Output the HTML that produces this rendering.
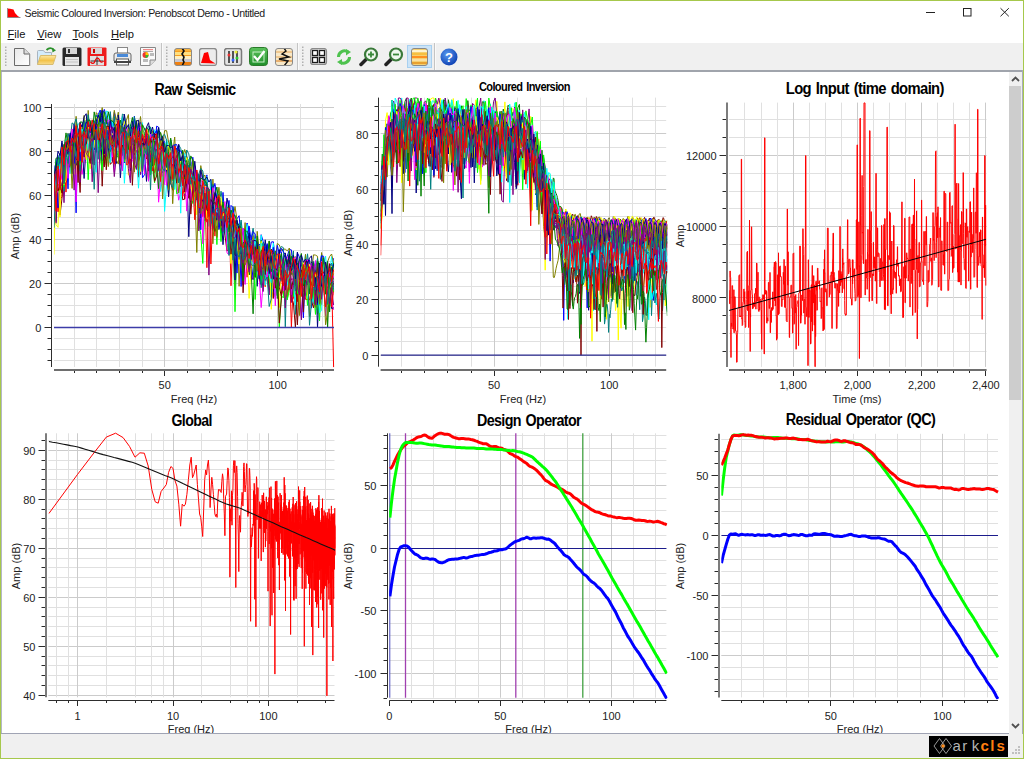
<!DOCTYPE html>
<html><head><meta charset="utf-8"><style>
html,body{margin:0;padding:0;width:1024px;height:759px;overflow:hidden;background:#fff;font-family:"Liberation Sans", sans-serif;}
#win{position:absolute;left:0;top:0;width:1024px;height:759px;}
</style></head><body><div id="win">
<svg width="1024" height="759" viewBox="0 0 1024 759" style="position:absolute;left:0;top:0" font-family='"Liberation Sans", sans-serif' font-size="11" fill="#222"><defs><clipPath id="clc1"><rect x="54" y="102" width="281" height="267"/></clipPath><clipPath id="clc2"><rect x="380.6" y="95.6" width="286.6" height="273.1"/></clipPath><clipPath id="clc3"><rect x="729" y="100.6" width="258.6" height="268.29999999999995"/></clipPath><clipPath id="clc4"><rect x="48.3" y="431.3" width="287.2" height="267.99999999999994"/></clipPath><clipPath id="clc5"><rect x="389.2" y="431.3" width="278.2" height="268.40000000000003"/></clipPath><clipPath id="clc6"><rect x="721.3" y="431.8" width="277.70000000000005" height="267.59999999999997"/></clipPath></defs><line x1="54" y1="360.5" x2="334" y2="360.5" stroke="#e0e0e0" stroke-width="1"/>
<line x1="54" y1="349.5" x2="334" y2="349.5" stroke="#e0e0e0" stroke-width="1"/>
<line x1="54" y1="338.5" x2="334" y2="338.5" stroke="#e0e0e0" stroke-width="1"/>
<line x1="54" y1="327.5" x2="334" y2="327.5" stroke="#cbcbcb" stroke-width="1"/>
<line x1="54" y1="316.5" x2="334" y2="316.5" stroke="#e0e0e0" stroke-width="1"/>
<line x1="54" y1="305.5" x2="334" y2="305.5" stroke="#e0e0e0" stroke-width="1"/>
<line x1="54" y1="294.5" x2="334" y2="294.5" stroke="#e0e0e0" stroke-width="1"/>
<line x1="54" y1="283.5" x2="334" y2="283.5" stroke="#cbcbcb" stroke-width="1"/>
<line x1="54" y1="272.5" x2="334" y2="272.5" stroke="#e0e0e0" stroke-width="1"/>
<line x1="54" y1="261.5" x2="334" y2="261.5" stroke="#e0e0e0" stroke-width="1"/>
<line x1="54" y1="250.5" x2="334" y2="250.5" stroke="#e0e0e0" stroke-width="1"/>
<line x1="54" y1="239.5" x2="334" y2="239.5" stroke="#cbcbcb" stroke-width="1"/>
<line x1="54" y1="228.5" x2="334" y2="228.5" stroke="#e0e0e0" stroke-width="1"/>
<line x1="54" y1="217.5" x2="334" y2="217.5" stroke="#e0e0e0" stroke-width="1"/>
<line x1="54" y1="206.5" x2="334" y2="206.5" stroke="#e0e0e0" stroke-width="1"/>
<line x1="54" y1="195.5" x2="334" y2="195.5" stroke="#cbcbcb" stroke-width="1"/>
<line x1="54" y1="184.5" x2="334" y2="184.5" stroke="#e0e0e0" stroke-width="1"/>
<line x1="54" y1="173.5" x2="334" y2="173.5" stroke="#e0e0e0" stroke-width="1"/>
<line x1="54" y1="162.5" x2="334" y2="162.5" stroke="#e0e0e0" stroke-width="1"/>
<line x1="54" y1="151.5" x2="334" y2="151.5" stroke="#cbcbcb" stroke-width="1"/>
<line x1="54" y1="140.5" x2="334" y2="140.5" stroke="#e0e0e0" stroke-width="1"/>
<line x1="54" y1="129.5" x2="334" y2="129.5" stroke="#e0e0e0" stroke-width="1"/>
<line x1="54" y1="118.5" x2="334" y2="118.5" stroke="#e0e0e0" stroke-width="1"/>
<line x1="54" y1="107.5" x2="334" y2="107.5" stroke="#cbcbcb" stroke-width="1"/>
<line x1="74.5" y1="104" x2="74.5" y2="367" stroke="#e0e0e0" stroke-width="1"/>
<line x1="96.5" y1="104" x2="96.5" y2="367" stroke="#e0e0e0" stroke-width="1"/>
<line x1="119.5" y1="104" x2="119.5" y2="367" stroke="#e0e0e0" stroke-width="1"/>
<line x1="142.5" y1="104" x2="142.5" y2="367" stroke="#e0e0e0" stroke-width="1"/>
<line x1="164.5" y1="104" x2="164.5" y2="367" stroke="#cbcbcb" stroke-width="1"/>
<line x1="187.5" y1="104" x2="187.5" y2="367" stroke="#e0e0e0" stroke-width="1"/>
<line x1="209.5" y1="104" x2="209.5" y2="367" stroke="#e0e0e0" stroke-width="1"/>
<line x1="232.5" y1="104" x2="232.5" y2="367" stroke="#e0e0e0" stroke-width="1"/>
<line x1="255.5" y1="104" x2="255.5" y2="367" stroke="#e0e0e0" stroke-width="1"/>
<line x1="277.5" y1="104" x2="277.5" y2="367" stroke="#cbcbcb" stroke-width="1"/>
<line x1="300.5" y1="104" x2="300.5" y2="367" stroke="#e0e0e0" stroke-width="1"/>
<line x1="322.5" y1="104" x2="322.5" y2="367" stroke="#e0e0e0" stroke-width="1"/>
<line x1="51.5" y1="104" x2="51.5" y2="367" stroke="#2e2e2e" stroke-width="1"/>
<line x1="47.50" y1="360.5" x2="51" y2="360.5" stroke="#2a2a2a" stroke-width="1"/>
<line x1="47.50" y1="349.5" x2="51" y2="349.5" stroke="#2a2a2a" stroke-width="1"/>
<line x1="47.50" y1="338.5" x2="51" y2="338.5" stroke="#2a2a2a" stroke-width="1"/>
<line x1="44.50" y1="327.5" x2="51" y2="327.5" stroke="#2a2a2a" stroke-width="1"/>
<line x1="47.50" y1="316.5" x2="51" y2="316.5" stroke="#2a2a2a" stroke-width="1"/>
<line x1="47.50" y1="305.5" x2="51" y2="305.5" stroke="#2a2a2a" stroke-width="1"/>
<line x1="47.50" y1="294.5" x2="51" y2="294.5" stroke="#2a2a2a" stroke-width="1"/>
<line x1="44.50" y1="283.5" x2="51" y2="283.5" stroke="#2a2a2a" stroke-width="1"/>
<line x1="47.50" y1="272.5" x2="51" y2="272.5" stroke="#2a2a2a" stroke-width="1"/>
<line x1="47.50" y1="261.5" x2="51" y2="261.5" stroke="#2a2a2a" stroke-width="1"/>
<line x1="47.50" y1="250.5" x2="51" y2="250.5" stroke="#2a2a2a" stroke-width="1"/>
<line x1="44.50" y1="239.5" x2="51" y2="239.5" stroke="#2a2a2a" stroke-width="1"/>
<line x1="47.50" y1="228.5" x2="51" y2="228.5" stroke="#2a2a2a" stroke-width="1"/>
<line x1="47.50" y1="217.5" x2="51" y2="217.5" stroke="#2a2a2a" stroke-width="1"/>
<line x1="47.50" y1="206.5" x2="51" y2="206.5" stroke="#2a2a2a" stroke-width="1"/>
<line x1="44.50" y1="195.5" x2="51" y2="195.5" stroke="#2a2a2a" stroke-width="1"/>
<line x1="47.50" y1="184.5" x2="51" y2="184.5" stroke="#2a2a2a" stroke-width="1"/>
<line x1="47.50" y1="173.5" x2="51" y2="173.5" stroke="#2a2a2a" stroke-width="1"/>
<line x1="47.50" y1="162.5" x2="51" y2="162.5" stroke="#2a2a2a" stroke-width="1"/>
<line x1="44.50" y1="151.5" x2="51" y2="151.5" stroke="#2a2a2a" stroke-width="1"/>
<line x1="47.50" y1="140.5" x2="51" y2="140.5" stroke="#2a2a2a" stroke-width="1"/>
<line x1="47.50" y1="129.5" x2="51" y2="129.5" stroke="#2a2a2a" stroke-width="1"/>
<line x1="47.50" y1="118.5" x2="51" y2="118.5" stroke="#2a2a2a" stroke-width="1"/>
<line x1="44.50" y1="107.5" x2="51" y2="107.5" stroke="#2a2a2a" stroke-width="1"/>
<line x1="54" y1="370" x2="334" y2="370" stroke="#6e6e6e" stroke-width="2"/>
<line x1="74.5" y1="371" x2="74.5" y2="373" stroke="#2a2a2a" stroke-width="1"/>
<line x1="96.5" y1="371" x2="96.5" y2="373" stroke="#2a2a2a" stroke-width="1"/>
<line x1="119.5" y1="371" x2="119.5" y2="373" stroke="#2a2a2a" stroke-width="1"/>
<line x1="142.5" y1="371" x2="142.5" y2="373" stroke="#2a2a2a" stroke-width="1"/>
<line x1="164.5" y1="371" x2="164.5" y2="376" stroke="#2a2a2a" stroke-width="1"/>
<line x1="187.5" y1="371" x2="187.5" y2="373" stroke="#2a2a2a" stroke-width="1"/>
<line x1="209.5" y1="371" x2="209.5" y2="373" stroke="#2a2a2a" stroke-width="1"/>
<line x1="232.5" y1="371" x2="232.5" y2="373" stroke="#2a2a2a" stroke-width="1"/>
<line x1="255.5" y1="371" x2="255.5" y2="373" stroke="#2a2a2a" stroke-width="1"/>
<line x1="277.5" y1="371" x2="277.5" y2="376" stroke="#2a2a2a" stroke-width="1"/>
<line x1="300.5" y1="371" x2="300.5" y2="373" stroke="#2a2a2a" stroke-width="1"/>
<line x1="322.5" y1="371" x2="322.5" y2="373" stroke="#2a2a2a" stroke-width="1"/>
<text x="41.3" y="332.10" text-anchor="end">0</text>
<text x="41.3" y="288.12" text-anchor="end">20</text>
<text x="41.3" y="244.14" text-anchor="end">40</text>
<text x="41.3" y="200.16" text-anchor="end">60</text>
<text x="41.3" y="156.18" text-anchor="end">80</text>
<text x="41.3" y="112.20" text-anchor="end">100</text>
<text x="164.65" y="389" text-anchor="middle">50</text>
<text x="277.60" y="389" text-anchor="middle">100</text>
<text x="194" y="402.5" text-anchor="middle">Freq (Hz)</text>
<text transform="translate(18.7,236) rotate(-90)" text-anchor="middle">Amp (dB)</text>
<text x="154.6" y="95" font-weight="bold" fill="#000" font-size="16" letter-spacing="-0.7" word-spacing="1.5" textLength="81" lengthAdjust="spacingAndGlyphs">Raw Seismic</text><line x1="380.6" y1="355.5" x2="666.2" y2="355.5" stroke="#cbcbcb" stroke-width="1"/>
<line x1="380.6" y1="341.5" x2="666.2" y2="341.5" stroke="#e0e0e0" stroke-width="1"/>
<line x1="380.6" y1="327.5" x2="666.2" y2="327.5" stroke="#e0e0e0" stroke-width="1"/>
<line x1="380.6" y1="313.5" x2="666.2" y2="313.5" stroke="#e0e0e0" stroke-width="1"/>
<line x1="380.6" y1="299.5" x2="666.2" y2="299.5" stroke="#cbcbcb" stroke-width="1"/>
<line x1="380.6" y1="286.5" x2="666.2" y2="286.5" stroke="#e0e0e0" stroke-width="1"/>
<line x1="380.6" y1="272.5" x2="666.2" y2="272.5" stroke="#e0e0e0" stroke-width="1"/>
<line x1="380.6" y1="258.5" x2="666.2" y2="258.5" stroke="#e0e0e0" stroke-width="1"/>
<line x1="380.6" y1="244.5" x2="666.2" y2="244.5" stroke="#cbcbcb" stroke-width="1"/>
<line x1="380.6" y1="230.5" x2="666.2" y2="230.5" stroke="#e0e0e0" stroke-width="1"/>
<line x1="380.6" y1="216.5" x2="666.2" y2="216.5" stroke="#e0e0e0" stroke-width="1"/>
<line x1="380.6" y1="203.5" x2="666.2" y2="203.5" stroke="#e0e0e0" stroke-width="1"/>
<line x1="380.6" y1="189.5" x2="666.2" y2="189.5" stroke="#cbcbcb" stroke-width="1"/>
<line x1="380.6" y1="175.5" x2="666.2" y2="175.5" stroke="#e0e0e0" stroke-width="1"/>
<line x1="380.6" y1="161.5" x2="666.2" y2="161.5" stroke="#e0e0e0" stroke-width="1"/>
<line x1="380.6" y1="147.5" x2="666.2" y2="147.5" stroke="#e0e0e0" stroke-width="1"/>
<line x1="380.6" y1="133.5" x2="666.2" y2="133.5" stroke="#cbcbcb" stroke-width="1"/>
<line x1="380.6" y1="120.5" x2="666.2" y2="120.5" stroke="#e0e0e0" stroke-width="1"/>
<line x1="380.6" y1="106.5" x2="666.2" y2="106.5" stroke="#e0e0e0" stroke-width="1"/>
<line x1="401.5" y1="97.6" x2="401.5" y2="366.7" stroke="#e0e0e0" stroke-width="1"/>
<line x1="424.5" y1="97.6" x2="424.5" y2="366.7" stroke="#e0e0e0" stroke-width="1"/>
<line x1="447.5" y1="97.6" x2="447.5" y2="366.7" stroke="#e0e0e0" stroke-width="1"/>
<line x1="471.5" y1="97.6" x2="471.5" y2="366.7" stroke="#e0e0e0" stroke-width="1"/>
<line x1="494.5" y1="97.6" x2="494.5" y2="366.7" stroke="#cbcbcb" stroke-width="1"/>
<line x1="517.5" y1="97.6" x2="517.5" y2="366.7" stroke="#e0e0e0" stroke-width="1"/>
<line x1="540.5" y1="97.6" x2="540.5" y2="366.7" stroke="#e0e0e0" stroke-width="1"/>
<line x1="563.5" y1="97.6" x2="563.5" y2="366.7" stroke="#e0e0e0" stroke-width="1"/>
<line x1="586.5" y1="97.6" x2="586.5" y2="366.7" stroke="#e0e0e0" stroke-width="1"/>
<line x1="609.5" y1="97.6" x2="609.5" y2="366.7" stroke="#cbcbcb" stroke-width="1"/>
<line x1="632.5" y1="97.6" x2="632.5" y2="366.7" stroke="#e0e0e0" stroke-width="1"/>
<line x1="655.5" y1="97.6" x2="655.5" y2="366.7" stroke="#e0e0e0" stroke-width="1"/>
<line x1="378.5" y1="97.6" x2="378.5" y2="366.7" stroke="#2e2e2e" stroke-width="1"/>
<line x1="371.50" y1="355.5" x2="378" y2="355.5" stroke="#2a2a2a" stroke-width="1"/>
<line x1="374.50" y1="341.5" x2="378" y2="341.5" stroke="#2a2a2a" stroke-width="1"/>
<line x1="374.50" y1="327.5" x2="378" y2="327.5" stroke="#2a2a2a" stroke-width="1"/>
<line x1="374.50" y1="313.5" x2="378" y2="313.5" stroke="#2a2a2a" stroke-width="1"/>
<line x1="371.50" y1="299.5" x2="378" y2="299.5" stroke="#2a2a2a" stroke-width="1"/>
<line x1="374.50" y1="286.5" x2="378" y2="286.5" stroke="#2a2a2a" stroke-width="1"/>
<line x1="374.50" y1="272.5" x2="378" y2="272.5" stroke="#2a2a2a" stroke-width="1"/>
<line x1="374.50" y1="258.5" x2="378" y2="258.5" stroke="#2a2a2a" stroke-width="1"/>
<line x1="371.50" y1="244.5" x2="378" y2="244.5" stroke="#2a2a2a" stroke-width="1"/>
<line x1="374.50" y1="230.5" x2="378" y2="230.5" stroke="#2a2a2a" stroke-width="1"/>
<line x1="374.50" y1="216.5" x2="378" y2="216.5" stroke="#2a2a2a" stroke-width="1"/>
<line x1="374.50" y1="203.5" x2="378" y2="203.5" stroke="#2a2a2a" stroke-width="1"/>
<line x1="371.50" y1="189.5" x2="378" y2="189.5" stroke="#2a2a2a" stroke-width="1"/>
<line x1="374.50" y1="175.5" x2="378" y2="175.5" stroke="#2a2a2a" stroke-width="1"/>
<line x1="374.50" y1="161.5" x2="378" y2="161.5" stroke="#2a2a2a" stroke-width="1"/>
<line x1="374.50" y1="147.5" x2="378" y2="147.5" stroke="#2a2a2a" stroke-width="1"/>
<line x1="371.50" y1="133.5" x2="378" y2="133.5" stroke="#2a2a2a" stroke-width="1"/>
<line x1="374.50" y1="120.5" x2="378" y2="120.5" stroke="#2a2a2a" stroke-width="1"/>
<line x1="374.50" y1="106.5" x2="378" y2="106.5" stroke="#2a2a2a" stroke-width="1"/>
<line x1="380.6" y1="370" x2="666.2" y2="370" stroke="#6e6e6e" stroke-width="2"/>
<line x1="401.5" y1="371" x2="401.5" y2="373" stroke="#2a2a2a" stroke-width="1"/>
<line x1="424.5" y1="371" x2="424.5" y2="373" stroke="#2a2a2a" stroke-width="1"/>
<line x1="447.5" y1="371" x2="447.5" y2="373" stroke="#2a2a2a" stroke-width="1"/>
<line x1="471.5" y1="371" x2="471.5" y2="373" stroke="#2a2a2a" stroke-width="1"/>
<line x1="494.5" y1="371" x2="494.5" y2="376" stroke="#2a2a2a" stroke-width="1"/>
<line x1="517.5" y1="371" x2="517.5" y2="373" stroke="#2a2a2a" stroke-width="1"/>
<line x1="540.5" y1="371" x2="540.5" y2="373" stroke="#2a2a2a" stroke-width="1"/>
<line x1="563.5" y1="371" x2="563.5" y2="373" stroke="#2a2a2a" stroke-width="1"/>
<line x1="586.5" y1="371" x2="586.5" y2="373" stroke="#2a2a2a" stroke-width="1"/>
<line x1="609.5" y1="371" x2="609.5" y2="376" stroke="#2a2a2a" stroke-width="1"/>
<line x1="632.5" y1="371" x2="632.5" y2="373" stroke="#2a2a2a" stroke-width="1"/>
<line x1="655.5" y1="371" x2="655.5" y2="373" stroke="#2a2a2a" stroke-width="1"/>
<text x="368.3" y="359.80" text-anchor="end">0</text>
<text x="368.3" y="304.48" text-anchor="end">20</text>
<text x="368.3" y="249.16" text-anchor="end">40</text>
<text x="368.3" y="193.84" text-anchor="end">60</text>
<text x="368.3" y="138.52" text-anchor="end">80</text>
<text x="494.08" y="389" text-anchor="middle">50</text>
<text x="609.30" y="389" text-anchor="middle">100</text>
<text x="523" y="402.5" text-anchor="middle">Freq (Hz)</text>
<text transform="translate(352.2,233) rotate(-90)" text-anchor="middle">Amp (dB)</text>
<text x="478.9" y="91.1" font-weight="bold" fill="#000" font-size="13" letter-spacing="-0.7" word-spacing="1.5" textLength="91" lengthAdjust="spacingAndGlyphs">Coloured Inversion</text><line x1="729" y1="351.5" x2="986.6" y2="351.5" stroke="#e0e0e0" stroke-width="1"/>
<line x1="729" y1="333.5" x2="986.6" y2="333.5" stroke="#e0e0e0" stroke-width="1"/>
<line x1="729" y1="315.5" x2="986.6" y2="315.5" stroke="#e0e0e0" stroke-width="1"/>
<line x1="729" y1="297.5" x2="986.6" y2="297.5" stroke="#cbcbcb" stroke-width="1"/>
<line x1="729" y1="280.5" x2="986.6" y2="280.5" stroke="#e0e0e0" stroke-width="1"/>
<line x1="729" y1="262.5" x2="986.6" y2="262.5" stroke="#e0e0e0" stroke-width="1"/>
<line x1="729" y1="244.5" x2="986.6" y2="244.5" stroke="#e0e0e0" stroke-width="1"/>
<line x1="729" y1="226.5" x2="986.6" y2="226.5" stroke="#cbcbcb" stroke-width="1"/>
<line x1="729" y1="208.5" x2="986.6" y2="208.5" stroke="#e0e0e0" stroke-width="1"/>
<line x1="729" y1="191.5" x2="986.6" y2="191.5" stroke="#e0e0e0" stroke-width="1"/>
<line x1="729" y1="173.5" x2="986.6" y2="173.5" stroke="#e0e0e0" stroke-width="1"/>
<line x1="729" y1="155.5" x2="986.6" y2="155.5" stroke="#cbcbcb" stroke-width="1"/>
<line x1="729" y1="137.5" x2="986.6" y2="137.5" stroke="#e0e0e0" stroke-width="1"/>
<line x1="729" y1="119.5" x2="986.6" y2="119.5" stroke="#e0e0e0" stroke-width="1"/>
<line x1="744.5" y1="102.6" x2="744.5" y2="366.9" stroke="#e0e0e0" stroke-width="1"/>
<line x1="761.5" y1="102.6" x2="761.5" y2="366.9" stroke="#e0e0e0" stroke-width="1"/>
<line x1="777.5" y1="102.6" x2="777.5" y2="366.9" stroke="#e0e0e0" stroke-width="1"/>
<line x1="793.5" y1="102.6" x2="793.5" y2="366.9" stroke="#cbcbcb" stroke-width="1"/>
<line x1="809.5" y1="102.6" x2="809.5" y2="366.9" stroke="#e0e0e0" stroke-width="1"/>
<line x1="825.5" y1="102.6" x2="825.5" y2="366.9" stroke="#e0e0e0" stroke-width="1"/>
<line x1="841.5" y1="102.6" x2="841.5" y2="366.9" stroke="#e0e0e0" stroke-width="1"/>
<line x1="857.5" y1="102.6" x2="857.5" y2="366.9" stroke="#cbcbcb" stroke-width="1"/>
<line x1="873.5" y1="102.6" x2="873.5" y2="366.9" stroke="#e0e0e0" stroke-width="1"/>
<line x1="889.5" y1="102.6" x2="889.5" y2="366.9" stroke="#e0e0e0" stroke-width="1"/>
<line x1="905.5" y1="102.6" x2="905.5" y2="366.9" stroke="#e0e0e0" stroke-width="1"/>
<line x1="921.5" y1="102.6" x2="921.5" y2="366.9" stroke="#cbcbcb" stroke-width="1"/>
<line x1="937.5" y1="102.6" x2="937.5" y2="366.9" stroke="#e0e0e0" stroke-width="1"/>
<line x1="953.5" y1="102.6" x2="953.5" y2="366.9" stroke="#e0e0e0" stroke-width="1"/>
<line x1="969.5" y1="102.6" x2="969.5" y2="366.9" stroke="#e0e0e0" stroke-width="1"/>
<line x1="985.5" y1="102.6" x2="985.5" y2="366.9" stroke="#cbcbcb" stroke-width="1"/>
<line x1="727" y1="102.6" x2="727" y2="366.9" stroke="#7c7c7c" stroke-width="2"/>
<line x1="722.50" y1="351.5" x2="726" y2="351.5" stroke="#2a2a2a" stroke-width="1"/>
<line x1="722.50" y1="333.5" x2="726" y2="333.5" stroke="#2a2a2a" stroke-width="1"/>
<line x1="722.50" y1="315.5" x2="726" y2="315.5" stroke="#2a2a2a" stroke-width="1"/>
<line x1="719.50" y1="297.5" x2="726" y2="297.5" stroke="#2a2a2a" stroke-width="1"/>
<line x1="722.50" y1="280.5" x2="726" y2="280.5" stroke="#2a2a2a" stroke-width="1"/>
<line x1="722.50" y1="262.5" x2="726" y2="262.5" stroke="#2a2a2a" stroke-width="1"/>
<line x1="722.50" y1="244.5" x2="726" y2="244.5" stroke="#2a2a2a" stroke-width="1"/>
<line x1="719.50" y1="226.5" x2="726" y2="226.5" stroke="#2a2a2a" stroke-width="1"/>
<line x1="722.50" y1="208.5" x2="726" y2="208.5" stroke="#2a2a2a" stroke-width="1"/>
<line x1="722.50" y1="191.5" x2="726" y2="191.5" stroke="#2a2a2a" stroke-width="1"/>
<line x1="722.50" y1="173.5" x2="726" y2="173.5" stroke="#2a2a2a" stroke-width="1"/>
<line x1="719.50" y1="155.5" x2="726" y2="155.5" stroke="#2a2a2a" stroke-width="1"/>
<line x1="722.50" y1="137.5" x2="726" y2="137.5" stroke="#2a2a2a" stroke-width="1"/>
<line x1="722.50" y1="119.5" x2="726" y2="119.5" stroke="#2a2a2a" stroke-width="1"/>
<line x1="729" y1="370" x2="986.6" y2="370" stroke="#6e6e6e" stroke-width="2"/>
<line x1="744.5" y1="371" x2="744.5" y2="373" stroke="#2a2a2a" stroke-width="1"/>
<line x1="761.5" y1="371" x2="761.5" y2="373" stroke="#2a2a2a" stroke-width="1"/>
<line x1="777.5" y1="371" x2="777.5" y2="373" stroke="#2a2a2a" stroke-width="1"/>
<line x1="793.5" y1="371" x2="793.5" y2="376" stroke="#2a2a2a" stroke-width="1"/>
<line x1="809.5" y1="371" x2="809.5" y2="373" stroke="#2a2a2a" stroke-width="1"/>
<line x1="825.5" y1="371" x2="825.5" y2="373" stroke="#2a2a2a" stroke-width="1"/>
<line x1="841.5" y1="371" x2="841.5" y2="373" stroke="#2a2a2a" stroke-width="1"/>
<line x1="857.5" y1="371" x2="857.5" y2="376" stroke="#2a2a2a" stroke-width="1"/>
<line x1="873.5" y1="371" x2="873.5" y2="373" stroke="#2a2a2a" stroke-width="1"/>
<line x1="889.5" y1="371" x2="889.5" y2="373" stroke="#2a2a2a" stroke-width="1"/>
<line x1="905.5" y1="371" x2="905.5" y2="373" stroke="#2a2a2a" stroke-width="1"/>
<line x1="921.5" y1="371" x2="921.5" y2="376" stroke="#2a2a2a" stroke-width="1"/>
<line x1="937.5" y1="371" x2="937.5" y2="373" stroke="#2a2a2a" stroke-width="1"/>
<line x1="953.5" y1="371" x2="953.5" y2="373" stroke="#2a2a2a" stroke-width="1"/>
<line x1="969.5" y1="371" x2="969.5" y2="373" stroke="#2a2a2a" stroke-width="1"/>
<line x1="985.5" y1="371" x2="985.5" y2="376" stroke="#2a2a2a" stroke-width="1"/>
<text x="716.5" y="302.60" text-anchor="end">8000</text>
<text x="716.5" y="231.40" text-anchor="end">10000</text>
<text x="716.5" y="160.20" text-anchor="end">12000</text>
<text x="793.16" y="389" text-anchor="middle">1,800</text>
<text x="857.42" y="389" text-anchor="middle">2,000</text>
<text x="921.68" y="389" text-anchor="middle">2,200</text>
<text x="985.94" y="389" text-anchor="middle">2,400</text>
<text x="857" y="402.5" text-anchor="middle">Time (ms)</text>
<text transform="translate(684,236) rotate(-90)" text-anchor="middle">Amp</text>
<text x="785.8" y="94.4" font-weight="bold" fill="#000" font-size="16" letter-spacing="-0.7" word-spacing="1.5" textLength="158" lengthAdjust="spacingAndGlyphs">Log Input (time domain)</text><line x1="48.3" y1="695.5" x2="334.5" y2="695.5" stroke="#cbcbcb" stroke-width="1"/>
<line x1="48.3" y1="685.5" x2="334.5" y2="685.5" stroke="#e0e0e0" stroke-width="1"/>
<line x1="48.3" y1="675.5" x2="334.5" y2="675.5" stroke="#e0e0e0" stroke-width="1"/>
<line x1="48.3" y1="665.5" x2="334.5" y2="665.5" stroke="#e0e0e0" stroke-width="1"/>
<line x1="48.3" y1="656.5" x2="334.5" y2="656.5" stroke="#e0e0e0" stroke-width="1"/>
<line x1="48.3" y1="646.5" x2="334.5" y2="646.5" stroke="#cbcbcb" stroke-width="1"/>
<line x1="48.3" y1="636.5" x2="334.5" y2="636.5" stroke="#e0e0e0" stroke-width="1"/>
<line x1="48.3" y1="626.5" x2="334.5" y2="626.5" stroke="#e0e0e0" stroke-width="1"/>
<line x1="48.3" y1="616.5" x2="334.5" y2="616.5" stroke="#e0e0e0" stroke-width="1"/>
<line x1="48.3" y1="607.5" x2="334.5" y2="607.5" stroke="#e0e0e0" stroke-width="1"/>
<line x1="48.3" y1="597.5" x2="334.5" y2="597.5" stroke="#cbcbcb" stroke-width="1"/>
<line x1="48.3" y1="587.5" x2="334.5" y2="587.5" stroke="#e0e0e0" stroke-width="1"/>
<line x1="48.3" y1="577.5" x2="334.5" y2="577.5" stroke="#e0e0e0" stroke-width="1"/>
<line x1="48.3" y1="567.5" x2="334.5" y2="567.5" stroke="#e0e0e0" stroke-width="1"/>
<line x1="48.3" y1="558.5" x2="334.5" y2="558.5" stroke="#e0e0e0" stroke-width="1"/>
<line x1="48.3" y1="548.5" x2="334.5" y2="548.5" stroke="#cbcbcb" stroke-width="1"/>
<line x1="48.3" y1="538.5" x2="334.5" y2="538.5" stroke="#e0e0e0" stroke-width="1"/>
<line x1="48.3" y1="528.5" x2="334.5" y2="528.5" stroke="#e0e0e0" stroke-width="1"/>
<line x1="48.3" y1="518.5" x2="334.5" y2="518.5" stroke="#e0e0e0" stroke-width="1"/>
<line x1="48.3" y1="509.5" x2="334.5" y2="509.5" stroke="#e0e0e0" stroke-width="1"/>
<line x1="48.3" y1="499.5" x2="334.5" y2="499.5" stroke="#cbcbcb" stroke-width="1"/>
<line x1="48.3" y1="489.5" x2="334.5" y2="489.5" stroke="#e0e0e0" stroke-width="1"/>
<line x1="48.3" y1="479.5" x2="334.5" y2="479.5" stroke="#e0e0e0" stroke-width="1"/>
<line x1="48.3" y1="469.5" x2="334.5" y2="469.5" stroke="#e0e0e0" stroke-width="1"/>
<line x1="48.3" y1="460.5" x2="334.5" y2="460.5" stroke="#e0e0e0" stroke-width="1"/>
<line x1="48.3" y1="450.5" x2="334.5" y2="450.5" stroke="#cbcbcb" stroke-width="1"/>
<line x1="48.3" y1="440.5" x2="334.5" y2="440.5" stroke="#e0e0e0" stroke-width="1"/>
<line x1="56.5" y1="433.3" x2="56.5" y2="697.3" stroke="#e0e0e0" stroke-width="1"/>
<line x1="68.5" y1="433.3" x2="68.5" y2="697.3" stroke="#e0e0e0" stroke-width="1"/>
<line x1="77.5" y1="433.3" x2="77.5" y2="697.3" stroke="#cbcbcb" stroke-width="1"/>
<line x1="106.5" y1="433.3" x2="106.5" y2="697.3" stroke="#e0e0e0" stroke-width="1"/>
<line x1="135.5" y1="433.3" x2="135.5" y2="697.3" stroke="#e0e0e0" stroke-width="1"/>
<line x1="151.5" y1="433.3" x2="151.5" y2="697.3" stroke="#e0e0e0" stroke-width="1"/>
<line x1="163.5" y1="433.3" x2="163.5" y2="697.3" stroke="#e0e0e0" stroke-width="1"/>
<line x1="173.5" y1="433.3" x2="173.5" y2="697.3" stroke="#cbcbcb" stroke-width="1"/>
<line x1="201.5" y1="433.3" x2="201.5" y2="697.3" stroke="#e0e0e0" stroke-width="1"/>
<line x1="230.5" y1="433.3" x2="230.5" y2="697.3" stroke="#e0e0e0" stroke-width="1"/>
<line x1="247.5" y1="433.3" x2="247.5" y2="697.3" stroke="#e0e0e0" stroke-width="1"/>
<line x1="259.5" y1="433.3" x2="259.5" y2="697.3" stroke="#e0e0e0" stroke-width="1"/>
<line x1="268.5" y1="433.3" x2="268.5" y2="697.3" stroke="#cbcbcb" stroke-width="1"/>
<line x1="297.5" y1="433.3" x2="297.5" y2="697.3" stroke="#e0e0e0" stroke-width="1"/>
<line x1="325.5" y1="433.3" x2="325.5" y2="697.3" stroke="#e0e0e0" stroke-width="1"/>
<line x1="46" y1="433.3" x2="46" y2="697.3" stroke="#7c7c7c" stroke-width="2"/>
<line x1="38.50" y1="695.5" x2="45" y2="695.5" stroke="#2a2a2a" stroke-width="1"/>
<line x1="41.50" y1="685.5" x2="45" y2="685.5" stroke="#2a2a2a" stroke-width="1"/>
<line x1="41.50" y1="675.5" x2="45" y2="675.5" stroke="#2a2a2a" stroke-width="1"/>
<line x1="41.50" y1="665.5" x2="45" y2="665.5" stroke="#2a2a2a" stroke-width="1"/>
<line x1="41.50" y1="656.5" x2="45" y2="656.5" stroke="#2a2a2a" stroke-width="1"/>
<line x1="38.50" y1="646.5" x2="45" y2="646.5" stroke="#2a2a2a" stroke-width="1"/>
<line x1="41.50" y1="636.5" x2="45" y2="636.5" stroke="#2a2a2a" stroke-width="1"/>
<line x1="41.50" y1="626.5" x2="45" y2="626.5" stroke="#2a2a2a" stroke-width="1"/>
<line x1="41.50" y1="616.5" x2="45" y2="616.5" stroke="#2a2a2a" stroke-width="1"/>
<line x1="41.50" y1="607.5" x2="45" y2="607.5" stroke="#2a2a2a" stroke-width="1"/>
<line x1="38.50" y1="597.5" x2="45" y2="597.5" stroke="#2a2a2a" stroke-width="1"/>
<line x1="41.50" y1="587.5" x2="45" y2="587.5" stroke="#2a2a2a" stroke-width="1"/>
<line x1="41.50" y1="577.5" x2="45" y2="577.5" stroke="#2a2a2a" stroke-width="1"/>
<line x1="41.50" y1="567.5" x2="45" y2="567.5" stroke="#2a2a2a" stroke-width="1"/>
<line x1="41.50" y1="558.5" x2="45" y2="558.5" stroke="#2a2a2a" stroke-width="1"/>
<line x1="38.50" y1="548.5" x2="45" y2="548.5" stroke="#2a2a2a" stroke-width="1"/>
<line x1="41.50" y1="538.5" x2="45" y2="538.5" stroke="#2a2a2a" stroke-width="1"/>
<line x1="41.50" y1="528.5" x2="45" y2="528.5" stroke="#2a2a2a" stroke-width="1"/>
<line x1="41.50" y1="518.5" x2="45" y2="518.5" stroke="#2a2a2a" stroke-width="1"/>
<line x1="41.50" y1="509.5" x2="45" y2="509.5" stroke="#2a2a2a" stroke-width="1"/>
<line x1="38.50" y1="499.5" x2="45" y2="499.5" stroke="#2a2a2a" stroke-width="1"/>
<line x1="41.50" y1="489.5" x2="45" y2="489.5" stroke="#2a2a2a" stroke-width="1"/>
<line x1="41.50" y1="479.5" x2="45" y2="479.5" stroke="#2a2a2a" stroke-width="1"/>
<line x1="41.50" y1="469.5" x2="45" y2="469.5" stroke="#2a2a2a" stroke-width="1"/>
<line x1="41.50" y1="460.5" x2="45" y2="460.5" stroke="#2a2a2a" stroke-width="1"/>
<line x1="38.50" y1="450.5" x2="45" y2="450.5" stroke="#2a2a2a" stroke-width="1"/>
<line x1="41.50" y1="440.5" x2="45" y2="440.5" stroke="#2a2a2a" stroke-width="1"/>
<line x1="48.3" y1="700.5" x2="334.5" y2="700.5" stroke="#2e2e2e" stroke-width="1"/>
<line x1="56.5" y1="701" x2="56.5" y2="703" stroke="#2a2a2a" stroke-width="1"/>
<line x1="68.5" y1="701" x2="68.5" y2="703" stroke="#2a2a2a" stroke-width="1"/>
<line x1="77.5" y1="701" x2="77.5" y2="706" stroke="#2a2a2a" stroke-width="1"/>
<line x1="106.5" y1="701" x2="106.5" y2="703" stroke="#2a2a2a" stroke-width="1"/>
<line x1="135.5" y1="701" x2="135.5" y2="703" stroke="#2a2a2a" stroke-width="1"/>
<line x1="151.5" y1="701" x2="151.5" y2="703" stroke="#2a2a2a" stroke-width="1"/>
<line x1="163.5" y1="701" x2="163.5" y2="703" stroke="#2a2a2a" stroke-width="1"/>
<line x1="173.5" y1="701" x2="173.5" y2="706" stroke="#2a2a2a" stroke-width="1"/>
<line x1="201.5" y1="701" x2="201.5" y2="703" stroke="#2a2a2a" stroke-width="1"/>
<line x1="230.5" y1="701" x2="230.5" y2="703" stroke="#2a2a2a" stroke-width="1"/>
<line x1="247.5" y1="701" x2="247.5" y2="703" stroke="#2a2a2a" stroke-width="1"/>
<line x1="259.5" y1="701" x2="259.5" y2="703" stroke="#2a2a2a" stroke-width="1"/>
<line x1="268.5" y1="701" x2="268.5" y2="706" stroke="#2a2a2a" stroke-width="1"/>
<line x1="297.5" y1="701" x2="297.5" y2="703" stroke="#2a2a2a" stroke-width="1"/>
<line x1="325.5" y1="701" x2="325.5" y2="703" stroke="#2a2a2a" stroke-width="1"/>
<text x="35.5" y="699.90" text-anchor="end">40</text>
<text x="35.5" y="650.90" text-anchor="end">50</text>
<text x="35.5" y="601.90" text-anchor="end">60</text>
<text x="35.5" y="552.90" text-anchor="end">70</text>
<text x="35.5" y="503.90" text-anchor="end">80</text>
<text x="35.5" y="454.90" text-anchor="end">90</text>
<text x="77.60" y="719.5" text-anchor="middle">1</text>
<text x="173.00" y="719.5" text-anchor="middle">10</text>
<text x="268.40" y="719.5" text-anchor="middle">100</text>
<text x="191" y="732.5" text-anchor="middle">Freq (Hz)</text>
<text transform="translate(19.5,566) rotate(-90)" text-anchor="middle">Amp (dB)</text>
<text x="171.5" y="425.7" font-weight="bold" fill="#000" font-size="16" letter-spacing="-0.7" word-spacing="1.5" textLength="40.2" lengthAdjust="spacingAndGlyphs">Global</text><line x1="389.2" y1="698.5" x2="666.4" y2="698.5" stroke="#e0e0e0" stroke-width="1"/>
<line x1="389.2" y1="685.5" x2="666.4" y2="685.5" stroke="#e0e0e0" stroke-width="1"/>
<line x1="389.2" y1="673.5" x2="666.4" y2="673.5" stroke="#cbcbcb" stroke-width="1"/>
<line x1="389.2" y1="660.5" x2="666.4" y2="660.5" stroke="#e0e0e0" stroke-width="1"/>
<line x1="389.2" y1="648.5" x2="666.4" y2="648.5" stroke="#e0e0e0" stroke-width="1"/>
<line x1="389.2" y1="635.5" x2="666.4" y2="635.5" stroke="#e0e0e0" stroke-width="1"/>
<line x1="389.2" y1="623.5" x2="666.4" y2="623.5" stroke="#e0e0e0" stroke-width="1"/>
<line x1="389.2" y1="610.5" x2="666.4" y2="610.5" stroke="#cbcbcb" stroke-width="1"/>
<line x1="389.2" y1="598.5" x2="666.4" y2="598.5" stroke="#e0e0e0" stroke-width="1"/>
<line x1="389.2" y1="585.5" x2="666.4" y2="585.5" stroke="#e0e0e0" stroke-width="1"/>
<line x1="389.2" y1="573.5" x2="666.4" y2="573.5" stroke="#e0e0e0" stroke-width="1"/>
<line x1="389.2" y1="560.5" x2="666.4" y2="560.5" stroke="#e0e0e0" stroke-width="1"/>
<line x1="389.2" y1="548.5" x2="666.4" y2="548.5" stroke="#cbcbcb" stroke-width="1"/>
<line x1="389.2" y1="535.5" x2="666.4" y2="535.5" stroke="#e0e0e0" stroke-width="1"/>
<line x1="389.2" y1="523.5" x2="666.4" y2="523.5" stroke="#e0e0e0" stroke-width="1"/>
<line x1="389.2" y1="510.5" x2="666.4" y2="510.5" stroke="#e0e0e0" stroke-width="1"/>
<line x1="389.2" y1="498.5" x2="666.4" y2="498.5" stroke="#e0e0e0" stroke-width="1"/>
<line x1="389.2" y1="485.5" x2="666.4" y2="485.5" stroke="#cbcbcb" stroke-width="1"/>
<line x1="389.2" y1="473.5" x2="666.4" y2="473.5" stroke="#e0e0e0" stroke-width="1"/>
<line x1="389.2" y1="460.5" x2="666.4" y2="460.5" stroke="#e0e0e0" stroke-width="1"/>
<line x1="389.2" y1="448.5" x2="666.4" y2="448.5" stroke="#e0e0e0" stroke-width="1"/>
<line x1="389.2" y1="435.5" x2="666.4" y2="435.5" stroke="#e0e0e0" stroke-width="1"/>
<line x1="411.5" y1="433.3" x2="411.5" y2="697.7" stroke="#e0e0e0" stroke-width="1"/>
<line x1="433.5" y1="433.3" x2="433.5" y2="697.7" stroke="#e0e0e0" stroke-width="1"/>
<line x1="455.5" y1="433.3" x2="455.5" y2="697.7" stroke="#e0e0e0" stroke-width="1"/>
<line x1="478.5" y1="433.3" x2="478.5" y2="697.7" stroke="#e0e0e0" stroke-width="1"/>
<line x1="500.5" y1="433.3" x2="500.5" y2="697.7" stroke="#cbcbcb" stroke-width="1"/>
<line x1="522.5" y1="433.3" x2="522.5" y2="697.7" stroke="#e0e0e0" stroke-width="1"/>
<line x1="544.5" y1="433.3" x2="544.5" y2="697.7" stroke="#e0e0e0" stroke-width="1"/>
<line x1="567.5" y1="433.3" x2="567.5" y2="697.7" stroke="#e0e0e0" stroke-width="1"/>
<line x1="589.5" y1="433.3" x2="589.5" y2="697.7" stroke="#e0e0e0" stroke-width="1"/>
<line x1="611.5" y1="433.3" x2="611.5" y2="697.7" stroke="#cbcbcb" stroke-width="1"/>
<line x1="633.5" y1="433.3" x2="633.5" y2="697.7" stroke="#e0e0e0" stroke-width="1"/>
<line x1="655.5" y1="433.3" x2="655.5" y2="697.7" stroke="#e0e0e0" stroke-width="1"/>
<line x1="387.5" y1="433.3" x2="387.5" y2="697.7" stroke="#2e2e2e" stroke-width="1"/>
<line x1="383.50" y1="698.5" x2="387" y2="698.5" stroke="#2a2a2a" stroke-width="1"/>
<line x1="383.50" y1="685.5" x2="387" y2="685.5" stroke="#2a2a2a" stroke-width="1"/>
<line x1="380.50" y1="673.5" x2="387" y2="673.5" stroke="#2a2a2a" stroke-width="1"/>
<line x1="383.50" y1="660.5" x2="387" y2="660.5" stroke="#2a2a2a" stroke-width="1"/>
<line x1="383.50" y1="648.5" x2="387" y2="648.5" stroke="#2a2a2a" stroke-width="1"/>
<line x1="383.50" y1="635.5" x2="387" y2="635.5" stroke="#2a2a2a" stroke-width="1"/>
<line x1="383.50" y1="623.5" x2="387" y2="623.5" stroke="#2a2a2a" stroke-width="1"/>
<line x1="380.50" y1="610.5" x2="387" y2="610.5" stroke="#2a2a2a" stroke-width="1"/>
<line x1="383.50" y1="598.5" x2="387" y2="598.5" stroke="#2a2a2a" stroke-width="1"/>
<line x1="383.50" y1="585.5" x2="387" y2="585.5" stroke="#2a2a2a" stroke-width="1"/>
<line x1="383.50" y1="573.5" x2="387" y2="573.5" stroke="#2a2a2a" stroke-width="1"/>
<line x1="383.50" y1="560.5" x2="387" y2="560.5" stroke="#2a2a2a" stroke-width="1"/>
<line x1="380.50" y1="548.5" x2="387" y2="548.5" stroke="#2a2a2a" stroke-width="1"/>
<line x1="383.50" y1="535.5" x2="387" y2="535.5" stroke="#2a2a2a" stroke-width="1"/>
<line x1="383.50" y1="523.5" x2="387" y2="523.5" stroke="#2a2a2a" stroke-width="1"/>
<line x1="383.50" y1="510.5" x2="387" y2="510.5" stroke="#2a2a2a" stroke-width="1"/>
<line x1="383.50" y1="498.5" x2="387" y2="498.5" stroke="#2a2a2a" stroke-width="1"/>
<line x1="380.50" y1="485.5" x2="387" y2="485.5" stroke="#2a2a2a" stroke-width="1"/>
<line x1="383.50" y1="473.5" x2="387" y2="473.5" stroke="#2a2a2a" stroke-width="1"/>
<line x1="383.50" y1="460.5" x2="387" y2="460.5" stroke="#2a2a2a" stroke-width="1"/>
<line x1="383.50" y1="448.5" x2="387" y2="448.5" stroke="#2a2a2a" stroke-width="1"/>
<line x1="383.50" y1="435.5" x2="387" y2="435.5" stroke="#2a2a2a" stroke-width="1"/>
<line x1="389.2" y1="700.5" x2="666.4" y2="700.5" stroke="#2e2e2e" stroke-width="1"/>
<line x1="389.5" y1="701" x2="389.5" y2="706" stroke="#2a2a2a" stroke-width="1"/>
<line x1="411.5" y1="701" x2="411.5" y2="703" stroke="#2a2a2a" stroke-width="1"/>
<line x1="433.5" y1="701" x2="433.5" y2="703" stroke="#2a2a2a" stroke-width="1"/>
<line x1="455.5" y1="701" x2="455.5" y2="703" stroke="#2a2a2a" stroke-width="1"/>
<line x1="478.5" y1="701" x2="478.5" y2="703" stroke="#2a2a2a" stroke-width="1"/>
<line x1="500.5" y1="701" x2="500.5" y2="706" stroke="#2a2a2a" stroke-width="1"/>
<line x1="522.5" y1="701" x2="522.5" y2="703" stroke="#2a2a2a" stroke-width="1"/>
<line x1="544.5" y1="701" x2="544.5" y2="703" stroke="#2a2a2a" stroke-width="1"/>
<line x1="567.5" y1="701" x2="567.5" y2="703" stroke="#2a2a2a" stroke-width="1"/>
<line x1="589.5" y1="701" x2="589.5" y2="703" stroke="#2a2a2a" stroke-width="1"/>
<line x1="611.5" y1="701" x2="611.5" y2="706" stroke="#2a2a2a" stroke-width="1"/>
<line x1="633.5" y1="701" x2="633.5" y2="703" stroke="#2a2a2a" stroke-width="1"/>
<line x1="655.5" y1="701" x2="655.5" y2="703" stroke="#2a2a2a" stroke-width="1"/>
<text x="376.5" y="490.20" text-anchor="end">50</text>
<text x="376.5" y="552.70" text-anchor="end">0</text>
<text x="376.5" y="615.20" text-anchor="end">-50</text>
<text x="376.5" y="677.70" text-anchor="end">-100</text>
<text x="389.20" y="719.5" text-anchor="middle">0</text>
<text x="500.32" y="719.5" text-anchor="middle">50</text>
<text x="611.45" y="719.5" text-anchor="middle">100</text>
<text x="528.5" y="732.5" text-anchor="middle">Freq (Hz)</text>
<text transform="translate(352,566) rotate(-90)" text-anchor="middle">Amp (dB)</text>
<text x="477" y="425.5" font-weight="bold" fill="#000" font-size="16" letter-spacing="-0.7" word-spacing="1.5" textLength="104" lengthAdjust="spacingAndGlyphs">Design Operator</text><line x1="721.3" y1="691.5" x2="998" y2="691.5" stroke="#e0e0e0" stroke-width="1"/>
<line x1="721.3" y1="679.5" x2="998" y2="679.5" stroke="#e0e0e0" stroke-width="1"/>
<line x1="721.3" y1="667.5" x2="998" y2="667.5" stroke="#e0e0e0" stroke-width="1"/>
<line x1="721.3" y1="655.5" x2="998" y2="655.5" stroke="#cbcbcb" stroke-width="1"/>
<line x1="721.3" y1="643.5" x2="998" y2="643.5" stroke="#e0e0e0" stroke-width="1"/>
<line x1="721.3" y1="631.5" x2="998" y2="631.5" stroke="#e0e0e0" stroke-width="1"/>
<line x1="721.3" y1="619.5" x2="998" y2="619.5" stroke="#e0e0e0" stroke-width="1"/>
<line x1="721.3" y1="607.5" x2="998" y2="607.5" stroke="#e0e0e0" stroke-width="1"/>
<line x1="721.3" y1="595.5" x2="998" y2="595.5" stroke="#cbcbcb" stroke-width="1"/>
<line x1="721.3" y1="583.5" x2="998" y2="583.5" stroke="#e0e0e0" stroke-width="1"/>
<line x1="721.3" y1="571.5" x2="998" y2="571.5" stroke="#e0e0e0" stroke-width="1"/>
<line x1="721.3" y1="559.5" x2="998" y2="559.5" stroke="#e0e0e0" stroke-width="1"/>
<line x1="721.3" y1="547.5" x2="998" y2="547.5" stroke="#e0e0e0" stroke-width="1"/>
<line x1="721.3" y1="535.5" x2="998" y2="535.5" stroke="#cbcbcb" stroke-width="1"/>
<line x1="721.3" y1="523.5" x2="998" y2="523.5" stroke="#e0e0e0" stroke-width="1"/>
<line x1="721.3" y1="511.5" x2="998" y2="511.5" stroke="#e0e0e0" stroke-width="1"/>
<line x1="721.3" y1="499.5" x2="998" y2="499.5" stroke="#e0e0e0" stroke-width="1"/>
<line x1="721.3" y1="487.5" x2="998" y2="487.5" stroke="#e0e0e0" stroke-width="1"/>
<line x1="721.3" y1="475.5" x2="998" y2="475.5" stroke="#cbcbcb" stroke-width="1"/>
<line x1="721.3" y1="463.5" x2="998" y2="463.5" stroke="#e0e0e0" stroke-width="1"/>
<line x1="721.3" y1="451.5" x2="998" y2="451.5" stroke="#e0e0e0" stroke-width="1"/>
<line x1="721.3" y1="439.5" x2="998" y2="439.5" stroke="#e0e0e0" stroke-width="1"/>
<line x1="741.5" y1="433.8" x2="741.5" y2="697.4" stroke="#e0e0e0" stroke-width="1"/>
<line x1="763.5" y1="433.8" x2="763.5" y2="697.4" stroke="#e0e0e0" stroke-width="1"/>
<line x1="786.5" y1="433.8" x2="786.5" y2="697.4" stroke="#e0e0e0" stroke-width="1"/>
<line x1="808.5" y1="433.8" x2="808.5" y2="697.4" stroke="#e0e0e0" stroke-width="1"/>
<line x1="830.5" y1="433.8" x2="830.5" y2="697.4" stroke="#cbcbcb" stroke-width="1"/>
<line x1="853.5" y1="433.8" x2="853.5" y2="697.4" stroke="#e0e0e0" stroke-width="1"/>
<line x1="875.5" y1="433.8" x2="875.5" y2="697.4" stroke="#e0e0e0" stroke-width="1"/>
<line x1="897.5" y1="433.8" x2="897.5" y2="697.4" stroke="#e0e0e0" stroke-width="1"/>
<line x1="920.5" y1="433.8" x2="920.5" y2="697.4" stroke="#e0e0e0" stroke-width="1"/>
<line x1="942.5" y1="433.8" x2="942.5" y2="697.4" stroke="#cbcbcb" stroke-width="1"/>
<line x1="964.5" y1="433.8" x2="964.5" y2="697.4" stroke="#e0e0e0" stroke-width="1"/>
<line x1="987.5" y1="433.8" x2="987.5" y2="697.4" stroke="#e0e0e0" stroke-width="1"/>
<line x1="719" y1="433.8" x2="719" y2="697.4" stroke="#7c7c7c" stroke-width="2"/>
<line x1="714.50" y1="691.5" x2="718" y2="691.5" stroke="#2a2a2a" stroke-width="1"/>
<line x1="714.50" y1="679.5" x2="718" y2="679.5" stroke="#2a2a2a" stroke-width="1"/>
<line x1="714.50" y1="667.5" x2="718" y2="667.5" stroke="#2a2a2a" stroke-width="1"/>
<line x1="711.50" y1="655.5" x2="718" y2="655.5" stroke="#2a2a2a" stroke-width="1"/>
<line x1="714.50" y1="643.5" x2="718" y2="643.5" stroke="#2a2a2a" stroke-width="1"/>
<line x1="714.50" y1="631.5" x2="718" y2="631.5" stroke="#2a2a2a" stroke-width="1"/>
<line x1="714.50" y1="619.5" x2="718" y2="619.5" stroke="#2a2a2a" stroke-width="1"/>
<line x1="714.50" y1="607.5" x2="718" y2="607.5" stroke="#2a2a2a" stroke-width="1"/>
<line x1="711.50" y1="595.5" x2="718" y2="595.5" stroke="#2a2a2a" stroke-width="1"/>
<line x1="714.50" y1="583.5" x2="718" y2="583.5" stroke="#2a2a2a" stroke-width="1"/>
<line x1="714.50" y1="571.5" x2="718" y2="571.5" stroke="#2a2a2a" stroke-width="1"/>
<line x1="714.50" y1="559.5" x2="718" y2="559.5" stroke="#2a2a2a" stroke-width="1"/>
<line x1="714.50" y1="547.5" x2="718" y2="547.5" stroke="#2a2a2a" stroke-width="1"/>
<line x1="711.50" y1="535.5" x2="718" y2="535.5" stroke="#2a2a2a" stroke-width="1"/>
<line x1="714.50" y1="523.5" x2="718" y2="523.5" stroke="#2a2a2a" stroke-width="1"/>
<line x1="714.50" y1="511.5" x2="718" y2="511.5" stroke="#2a2a2a" stroke-width="1"/>
<line x1="714.50" y1="499.5" x2="718" y2="499.5" stroke="#2a2a2a" stroke-width="1"/>
<line x1="714.50" y1="487.5" x2="718" y2="487.5" stroke="#2a2a2a" stroke-width="1"/>
<line x1="711.50" y1="475.5" x2="718" y2="475.5" stroke="#2a2a2a" stroke-width="1"/>
<line x1="714.50" y1="463.5" x2="718" y2="463.5" stroke="#2a2a2a" stroke-width="1"/>
<line x1="714.50" y1="451.5" x2="718" y2="451.5" stroke="#2a2a2a" stroke-width="1"/>
<line x1="714.50" y1="439.5" x2="718" y2="439.5" stroke="#2a2a2a" stroke-width="1"/>
<line x1="721.3" y1="700.5" x2="998" y2="700.5" stroke="#2e2e2e" stroke-width="1"/>
<line x1="741.5" y1="701" x2="741.5" y2="703" stroke="#2a2a2a" stroke-width="1"/>
<line x1="763.5" y1="701" x2="763.5" y2="703" stroke="#2a2a2a" stroke-width="1"/>
<line x1="786.5" y1="701" x2="786.5" y2="703" stroke="#2a2a2a" stroke-width="1"/>
<line x1="808.5" y1="701" x2="808.5" y2="703" stroke="#2a2a2a" stroke-width="1"/>
<line x1="830.5" y1="701" x2="830.5" y2="706" stroke="#2a2a2a" stroke-width="1"/>
<line x1="853.5" y1="701" x2="853.5" y2="703" stroke="#2a2a2a" stroke-width="1"/>
<line x1="875.5" y1="701" x2="875.5" y2="703" stroke="#2a2a2a" stroke-width="1"/>
<line x1="897.5" y1="701" x2="897.5" y2="703" stroke="#2a2a2a" stroke-width="1"/>
<line x1="920.5" y1="701" x2="920.5" y2="703" stroke="#2a2a2a" stroke-width="1"/>
<line x1="942.5" y1="701" x2="942.5" y2="706" stroke="#2a2a2a" stroke-width="1"/>
<line x1="964.5" y1="701" x2="964.5" y2="703" stroke="#2a2a2a" stroke-width="1"/>
<line x1="987.5" y1="701" x2="987.5" y2="703" stroke="#2a2a2a" stroke-width="1"/>
<text x="708.5" y="479.80" text-anchor="end">50</text>
<text x="708.5" y="539.80" text-anchor="end">0</text>
<text x="708.5" y="599.80" text-anchor="end">-50</text>
<text x="708.5" y="659.80" text-anchor="end">-100</text>
<text x="830.85" y="719.5" text-anchor="middle">50</text>
<text x="942.40" y="719.5" text-anchor="middle">100</text>
<text x="860" y="732.5" text-anchor="middle">Freq (Hz)</text>
<text transform="translate(684,566) rotate(-90)" text-anchor="middle">Amp (dB)</text>
<text x="785.8" y="425.2" font-weight="bold" fill="#000" font-size="16" letter-spacing="-0.7" word-spacing="1.5" textLength="149.4" lengthAdjust="spacingAndGlyphs">Residual Operator (QC)</text><g clip-path="url(#clc1)"><g fill="none" stroke-width="1" stroke-linejoin="miter"><polyline points="54.0,176.2 56.0,189.6 58.0,178.3 60.0,199.9 62.0,196.4 64.0,150.5 66.0,146.7 68.0,165.5 70.1,158.1 72.1,154.7 74.1,148.9 76.1,128.7 78.1,148.0 80.1,138.3 82.1,125.7 84.1,143.8 86.2,124.7 88.2,136.6 90.2,123.3 92.2,160.8 94.2,137.7 96.2,150.3 98.2,142.9 100.2,124.2 102.2,133.5 104.3,138.9 106.3,129.3 108.3,126.1 110.3,136.4 112.3,125.4 114.3,132.2 116.3,136.5 118.3,123.8 120.4,138.3 122.4,135.3 124.4,129.0 126.4,138.2 128.4,140.9 130.4,160.8 132.4,129.4 134.4,126.6 136.4,136.4 138.5,132.9 140.5,149.8 142.5,134.6 144.5,136.3 146.5,148.5 148.5,144.2 150.5,141.8 152.5,142.2 154.6,135.6 156.6,137.7 158.6,168.5 160.6,171.2 162.6,169.1 164.6,153.6 166.6,154.5 168.6,153.1 170.7,166.7 172.7,167.8 174.7,178.6 176.7,163.2 178.7,178.7 180.7,182.4 182.7,163.8 184.7,199.3 186.7,181.1 188.8,197.0 190.8,195.6 192.8,190.5 194.8,170.6 196.8,191.5 198.8,186.5 200.8,199.0 202.8,216.7 204.9,182.5 206.9,184.7 208.9,197.5 210.9,202.2 212.9,201.0 214.9,236.1 216.9,213.5 218.9,207.0 221.0,220.2 223.0,202.7 225.0,207.2 227.0,214.9 229.0,210.8 231.0,285.8 233.0,236.0 235.0,229.2 237.0,232.7 239.1,229.1 241.1,238.5 243.1,243.5 245.1,250.1 247.1,277.2 249.1,252.3 251.1,250.0 253.1,251.4 255.2,274.4 257.2,258.0 259.2,273.0 261.2,244.3 263.2,274.6 265.2,276.4 267.2,267.3 269.2,277.8 271.3,287.6 273.3,291.6 275.3,260.9 277.3,280.0 279.3,257.2 281.3,273.0 283.3,293.4 285.3,258.6 287.3,259.4 289.4,263.6 291.4,327.5 293.4,281.0 295.4,292.7 297.4,301.7 299.4,265.8 301.4,283.8 303.4,297.4 305.5,279.3 307.5,268.9 309.5,265.7 311.5,274.6 313.5,277.0 315.5,302.1 317.5,280.4 319.5,305.3 321.6,285.0 323.6,284.0 325.6,269.5 327.6,276.7 329.6,290.4 331.6,277.3 333.6,367.1" stroke="#ff0000"/>
<polyline points="54.0,174.9 56.0,220.5 58.0,158.0 60.0,174.7 62.0,171.0 64.0,150.6 66.0,172.2 68.0,148.7 70.1,134.9 72.1,153.5 74.1,141.9 76.1,140.8 78.1,169.3 80.1,134.5 82.1,144.4 84.1,151.6 86.2,133.5 88.2,179.7 90.2,138.0 92.2,120.7 94.2,121.8 96.2,120.2 98.2,120.6 100.2,128.5 102.2,154.5 104.3,119.5 106.3,164.8 108.3,130.5 110.3,132.3 112.3,137.1 114.3,166.6 116.3,128.4 118.3,126.2 120.4,133.5 122.4,145.7 124.4,125.6 126.4,127.2 128.4,138.0 130.4,133.7 132.4,131.7 134.4,129.3 136.4,145.8 138.5,136.0 140.5,151.9 142.5,138.2 144.5,147.4 146.5,152.9 148.5,133.3 150.5,157.4 152.5,167.8 154.6,182.9 156.6,147.6 158.6,156.3 160.6,139.6 162.6,139.3 164.6,164.9 166.6,142.2 168.6,174.3 170.7,154.6 172.7,158.2 174.7,153.9 176.7,167.3 178.7,151.4 180.7,164.4 182.7,170.7 184.7,166.9 186.7,191.5 188.8,175.6 190.8,171.2 192.8,174.1 194.8,181.1 196.8,186.5 198.8,213.0 200.8,211.1 202.8,210.4 204.9,200.8 206.9,200.2 208.9,190.8 210.9,188.4 212.9,208.6 214.9,205.3 216.9,204.7 218.9,203.2 221.0,219.0 223.0,217.4 225.0,216.8 227.0,250.6 229.0,234.3 231.0,243.0 233.0,240.4 235.0,254.5 237.0,229.7 239.1,223.5 241.1,273.5 243.1,256.1 245.1,232.8 247.1,244.7 249.1,256.6 251.1,261.6 253.1,242.7 255.2,261.7 257.2,251.4 259.2,267.8 261.2,265.6 263.2,253.6 265.2,253.6 267.2,254.8 269.2,287.5 271.3,272.1 273.3,262.6 275.3,260.8 277.3,274.4 279.3,278.1 281.3,266.4 283.3,286.3 285.3,270.7 287.3,299.8 289.4,280.4 291.4,268.0 293.4,279.0 295.4,276.8 297.4,276.6 299.4,309.5 301.4,273.1 303.4,268.2 305.5,283.9 307.5,276.0 309.5,276.9 311.5,269.7 313.5,303.3 315.5,263.5 317.5,314.3 319.5,280.4 321.6,273.5 323.6,264.2 325.6,284.7 327.6,275.0 329.6,286.5 331.6,276.8 333.6,278.6" stroke="#00ff00"/>
<polyline points="54.0,165.4 56.0,191.5 58.0,167.5 60.0,160.0 62.0,165.2 64.0,149.0 66.0,182.3 68.0,149.1 70.1,134.3 72.1,134.5 74.1,139.3 76.1,212.9 78.1,128.7 80.1,144.1 82.1,135.5 84.1,130.4 86.2,125.6 88.2,118.2 90.2,121.5 92.2,144.4 94.2,123.0 96.2,117.8 98.2,134.3 100.2,134.3 102.2,115.4 104.3,109.4 106.3,115.9 108.3,128.1 110.3,114.0 112.3,160.8 114.3,112.4 116.3,120.4 118.3,119.1 120.4,141.0 122.4,128.9 124.4,163.0 126.4,128.4 128.4,130.4 130.4,142.0 132.4,136.6 134.4,116.2 136.4,148.4 138.5,130.3 140.5,121.9 142.5,129.6 144.5,147.2 146.5,138.8 148.5,150.7 150.5,159.0 152.5,161.8 154.6,154.4 156.6,126.2 158.6,127.2 160.6,151.2 162.6,139.0 164.6,141.7 166.6,154.0 168.6,177.1 170.7,173.4 172.7,150.8 174.7,159.0 176.7,147.9 178.7,153.6 180.7,176.5 182.7,157.0 184.7,156.9 186.7,156.7 188.8,162.2 190.8,170.5 192.8,157.2 194.8,171.4 196.8,198.5 198.8,174.1 200.8,181.0 202.8,181.7 204.9,183.0 206.9,174.9 208.9,217.2 210.9,187.8 212.9,186.5 214.9,183.4 216.9,215.2 218.9,194.0 221.0,226.8 223.0,192.4 225.0,220.9 227.0,215.7 229.0,200.4 231.0,236.9 233.0,209.4 235.0,222.1 237.0,218.8 239.1,215.7 241.1,238.6 243.1,285.3 245.1,229.8 247.1,223.0 249.1,230.5 251.1,259.4 253.1,279.6 255.2,248.5 257.2,256.6 259.2,274.1 261.2,234.7 263.2,241.5 265.2,246.4 267.2,268.2 269.2,253.1 271.3,242.0 273.3,241.7 275.3,258.3 277.3,271.8 279.3,252.6 281.3,251.7 283.3,268.0 285.3,260.6 287.3,256.0 289.4,249.5 291.4,249.9 293.4,271.4 295.4,260.8 297.4,277.4 299.4,260.6 301.4,279.8 303.4,273.7 305.5,259.0 307.5,259.3 309.5,265.5 311.5,308.1 313.5,270.5 315.5,263.8 317.5,291.4 319.5,266.6 321.6,254.5 323.6,283.4 325.6,284.5 327.6,270.3 329.6,280.0 331.6,266.3 333.6,258.3" stroke="#0000ff"/>
<polyline points="54.0,182.5 56.0,224.7 58.0,227.4 60.0,154.3 62.0,149.0 64.0,164.4 66.0,162.6 68.0,161.1 70.1,151.7 72.1,132.0 74.1,173.7 76.1,174.6 78.1,134.4 80.1,161.3 82.1,135.5 84.1,159.3 86.2,122.9 88.2,130.4 90.2,168.7 92.2,126.1 94.2,139.5 96.2,123.4 98.2,121.9 100.2,118.1 102.2,121.2 104.3,145.8 106.3,129.3 108.3,139.7 110.3,135.4 112.3,146.0 114.3,129.5 116.3,139.9 118.3,144.1 120.4,142.6 122.4,144.1 124.4,135.6 126.4,123.7 128.4,175.2 130.4,146.3 132.4,135.9 134.4,137.4 136.4,146.0 138.5,143.9 140.5,133.5 142.5,143.1 144.5,137.6 146.5,137.9 148.5,145.5 150.5,136.5 152.5,146.7 154.6,155.6 156.6,156.0 158.6,144.0 160.6,148.0 162.6,156.4 164.6,144.6 166.6,182.8 168.6,164.3 170.7,170.4 172.7,173.3 174.7,151.0 176.7,164.3 178.7,172.9 180.7,160.1 182.7,167.5 184.7,170.3 186.7,161.9 188.8,161.5 190.8,164.2 192.8,188.0 194.8,169.3 196.8,177.3 198.8,191.0 200.8,189.5 202.8,195.7 204.9,183.4 206.9,209.6 208.9,199.1 210.9,190.1 212.9,222.2 214.9,218.6 216.9,203.0 218.9,229.7 221.0,203.1 223.0,220.5 225.0,204.5 227.0,241.7 229.0,235.9 231.0,263.5 233.0,219.7 235.0,244.7 237.0,239.4 239.1,245.4 241.1,270.7 243.1,238.7 245.1,241.3 247.1,234.2 249.1,244.0 251.1,248.5 253.1,256.8 255.2,242.0 257.2,255.7 259.2,251.4 261.2,250.8 263.2,252.3 265.2,286.8 267.2,248.0 269.2,249.0 271.3,282.3 273.3,276.4 275.3,289.1 277.3,257.4 279.3,307.5 281.3,269.7 283.3,269.3 285.3,276.2 287.3,276.0 289.4,273.0 291.4,270.2 293.4,271.3 295.4,288.3 297.4,289.5 299.4,272.8 301.4,269.4 303.4,269.3 305.5,275.4 307.5,264.4 309.5,273.6 311.5,285.4 313.5,277.4 315.5,274.7 317.5,274.6 319.5,300.1 321.6,279.8 323.6,264.2 325.6,291.4 327.6,270.5 329.6,272.6 331.6,266.0 333.6,267.2" stroke="#ffff00"/>
<polyline points="54.0,188.6 56.0,159.4 58.0,172.0 60.0,156.6 62.0,144.5 64.0,146.9 66.0,139.4 68.0,159.0 70.1,173.5 72.1,132.0 74.1,153.1 76.1,137.5 78.1,123.9 80.1,124.1 82.1,134.6 84.1,130.8 86.2,157.2 88.2,114.6 90.2,131.3 92.2,120.3 94.2,142.3 96.2,142.3 98.2,128.2 100.2,110.3 102.2,115.0 104.3,137.4 106.3,111.0 108.3,112.0 110.3,133.1 112.3,130.9 114.3,131.7 116.3,134.7 118.3,128.9 120.4,129.2 122.4,116.3 124.4,135.6 126.4,135.7 128.4,126.5 130.4,135.2 132.4,134.1 134.4,143.5 136.4,130.5 138.5,132.6 140.5,134.9 142.5,122.7 144.5,166.7 146.5,133.0 148.5,161.2 150.5,128.1 152.5,152.9 154.6,129.8 156.6,134.3 158.6,147.7 160.6,191.6 162.6,177.1 164.6,152.0 166.6,139.2 168.6,147.5 170.7,148.9 172.7,157.2 174.7,172.7 176.7,151.4 178.7,148.1 180.7,171.9 182.7,160.1 184.7,153.3 186.7,168.4 188.8,158.8 190.8,196.0 192.8,171.1 194.8,206.0 196.8,186.4 198.8,199.5 200.8,174.8 202.8,178.7 204.9,184.3 206.9,176.6 208.9,226.4 210.9,180.1 212.9,194.4 214.9,213.6 216.9,194.1 218.9,189.1 221.0,217.3 223.0,202.9 225.0,221.0 227.0,204.9 229.0,225.4 231.0,211.4 233.0,226.2 235.0,218.2 237.0,219.6 239.1,229.2 241.1,221.8 243.1,252.3 245.1,250.3 247.1,224.2 249.1,243.3 251.1,242.2 253.1,250.0 255.2,256.3 257.2,242.2 259.2,272.5 261.2,235.2 263.2,254.5 265.2,252.5 267.2,244.5 269.2,245.7 271.3,258.6 273.3,243.2 275.3,264.7 277.3,273.3 279.3,272.9 281.3,256.6 283.3,291.3 285.3,261.0 287.3,285.3 289.4,272.1 291.4,257.9 293.4,266.6 295.4,259.2 297.4,275.6 299.4,261.5 301.4,282.8 303.4,269.6 305.5,254.2 307.5,271.8 309.5,268.7 311.5,278.3 313.5,263.4 315.5,270.4 317.5,261.2 319.5,272.5 321.6,262.9 323.6,266.4 325.6,256.1 327.6,281.6 329.6,273.5 331.6,256.6 333.6,269.9" stroke="#00ffff"/>
<polyline points="54.0,221.9 56.0,202.3 58.0,177.4 60.0,159.5 62.0,164.3 64.0,172.0 66.0,154.6 68.0,154.4 70.1,165.0 72.1,151.0 74.1,130.8 76.1,201.9 78.1,134.0 80.1,148.1 82.1,174.4 84.1,163.7 86.2,142.7 88.2,153.6 90.2,132.3 92.2,127.3 94.2,139.4 96.2,146.2 98.2,120.6 100.2,132.4 102.2,137.0 104.3,123.4 106.3,121.1 108.3,121.8 110.3,144.1 112.3,146.0 114.3,172.3 116.3,150.3 118.3,124.4 120.4,155.3 122.4,155.4 124.4,125.2 126.4,158.7 128.4,145.5 130.4,177.3 132.4,133.5 134.4,130.4 136.4,147.6 138.5,141.6 140.5,129.9 142.5,148.6 144.5,149.4 146.5,153.7 148.5,152.6 150.5,157.1 152.5,148.2 154.6,162.5 156.6,144.7 158.6,202.2 160.6,177.1 162.6,148.6 164.6,184.8 166.6,161.6 168.6,163.8 170.7,154.0 172.7,150.3 174.7,156.2 176.7,183.1 178.7,200.2 180.7,192.2 182.7,164.9 184.7,193.5 186.7,191.8 188.8,174.8 190.8,167.4 192.8,179.0 194.8,189.1 196.8,175.1 198.8,201.6 200.8,200.7 202.8,194.2 204.9,206.3 206.9,194.5 208.9,202.8 210.9,200.1 212.9,211.9 214.9,200.8 216.9,197.0 218.9,199.2 221.0,202.0 223.0,224.9 225.0,216.3 227.0,229.5 229.0,222.7 231.0,214.5 233.0,222.5 235.0,237.8 237.0,245.4 239.1,234.7 241.1,228.1 243.1,248.1 245.1,237.7 247.1,235.3 249.1,236.5 251.1,237.4 253.1,253.9 255.2,244.1 257.2,252.7 259.2,275.8 261.2,307.6 263.2,282.7 265.2,262.5 267.2,263.5 269.2,267.0 271.3,268.7 273.3,298.3 275.3,259.9 277.3,255.2 279.3,258.7 281.3,270.2 283.3,284.8 285.3,276.3 287.3,278.3 289.4,284.0 291.4,280.2 293.4,266.3 295.4,278.8 297.4,281.4 299.4,292.0 301.4,318.3 303.4,273.5 305.5,268.1 307.5,294.2 309.5,282.0 311.5,272.0 313.5,289.9 315.5,286.3 317.5,287.6 319.5,265.7 321.6,287.4 323.6,275.5 325.6,315.8 327.6,278.2 329.6,300.2 331.6,300.4 333.6,309.8" stroke="#ff00ff"/>
<polyline points="54.0,203.2 56.0,212.3 58.0,173.7 60.0,215.1 62.0,198.4 64.0,157.4 66.0,172.5 68.0,164.0 70.1,144.7 72.1,148.2 74.1,139.3 76.1,159.0 78.1,161.2 80.1,192.5 82.1,138.2 84.1,157.2 86.2,145.7 88.2,153.5 90.2,163.5 92.2,139.0 94.2,136.5 96.2,130.8 98.2,139.8 100.2,130.8 102.2,186.2 104.3,139.3 106.3,169.8 108.3,136.4 110.3,164.4 112.3,162.1 114.3,134.4 116.3,133.7 118.3,145.1 120.4,137.8 122.4,151.6 124.4,132.8 126.4,156.8 128.4,133.4 130.4,149.9 132.4,145.8 134.4,155.0 136.4,150.1 138.5,177.2 140.5,157.2 142.5,171.7 144.5,149.2 146.5,158.9 148.5,156.2 150.5,150.4 152.5,158.0 154.6,181.4 156.6,176.1 158.6,146.2 160.6,155.6 162.6,161.4 164.6,170.3 166.6,170.9 168.6,153.9 170.7,179.4 172.7,174.0 174.7,170.9 176.7,169.7 178.7,182.3 180.7,170.0 182.7,199.8 184.7,198.9 186.7,181.5 188.8,198.3 190.8,180.4 192.8,185.1 194.8,180.5 196.8,200.0 198.8,192.8 200.8,203.4 202.8,199.9 204.9,219.5 206.9,207.8 208.9,213.4 210.9,209.9 212.9,202.1 214.9,231.3 216.9,226.1 218.9,226.6 221.0,216.9 223.0,220.6 225.0,235.8 227.0,251.1 229.0,249.1 231.0,225.9 233.0,229.8 235.0,255.1 237.0,256.0 239.1,243.2 241.1,237.3 243.1,269.9 245.1,252.2 247.1,256.7 249.1,274.4 251.1,273.3 253.1,246.6 255.2,277.5 257.2,251.1 259.2,277.5 261.2,284.8 263.2,254.5 265.2,266.4 267.2,267.7 269.2,290.1 271.3,285.2 273.3,298.4 275.3,262.1 277.3,267.5 279.3,287.2 281.3,296.1 283.3,277.7 285.3,278.5 287.3,296.2 289.4,276.0 291.4,296.9 293.4,302.9 295.4,327.5 297.4,293.5 299.4,274.2 301.4,271.1 303.4,291.8 305.5,282.8 307.5,281.7 309.5,291.8 311.5,283.6 313.5,275.6 315.5,286.9 317.5,289.2 319.5,291.0 321.6,286.1 323.6,276.6 325.6,289.0 327.6,287.9 329.6,282.6 331.6,293.4 333.6,283.0" stroke="#800000"/>
<polyline points="54.0,180.4 56.0,218.4 58.0,173.1 60.0,162.9 62.0,155.3 64.0,159.6 66.0,160.1 68.0,153.4 70.1,151.6 72.1,139.7 74.1,137.1 76.1,165.3 78.1,160.2 80.1,134.4 82.1,132.0 84.1,133.5 86.2,119.8 88.2,118.9 90.2,146.6 92.2,164.3 94.2,136.2 96.2,124.6 98.2,143.3 100.2,116.6 102.2,116.3 104.3,157.1 106.3,143.3 108.3,158.5 110.3,122.5 112.3,134.3 114.3,127.0 116.3,137.1 118.3,128.9 120.4,120.0 122.4,134.8 124.4,144.6 126.4,133.1 128.4,133.7 130.4,136.3 132.4,150.2 134.4,140.1 136.4,139.2 138.5,152.3 140.5,155.7 142.5,147.0 144.5,133.5 146.5,127.7 148.5,128.9 150.5,171.3 152.5,142.7 154.6,133.0 156.6,164.8 158.6,188.6 160.6,143.7 162.6,150.4 164.6,166.5 166.6,152.8 168.6,195.2 170.7,156.3 172.7,147.0 174.7,162.1 176.7,155.4 178.7,175.8 180.7,180.2 182.7,152.0 184.7,159.8 186.7,166.5 188.8,168.4 190.8,197.1 192.8,181.7 194.8,171.9 196.8,199.6 198.8,195.5 200.8,196.6 202.8,184.2 204.9,220.7 206.9,196.8 208.9,211.3 210.9,215.3 212.9,230.6 214.9,209.7 216.9,218.1 218.9,207.5 221.0,204.3 223.0,208.3 225.0,220.8 227.0,225.3 229.0,212.6 231.0,222.3 233.0,215.5 235.0,225.9 237.0,245.5 239.1,232.7 241.1,233.8 243.1,231.0 245.1,250.7 247.1,230.8 249.1,274.8 251.1,268.6 253.1,313.8 255.2,244.1 257.2,251.1 259.2,257.6 261.2,240.3 263.2,250.7 265.2,273.8 267.2,244.8 269.2,276.8 271.3,289.7 273.3,261.6 275.3,250.9 277.3,298.5 279.3,272.6 281.3,263.9 283.3,271.7 285.3,269.6 287.3,260.2 289.4,268.4 291.4,256.3 293.4,266.9 295.4,286.2 297.4,262.9 299.4,288.6 301.4,267.3 303.4,268.2 305.5,274.6 307.5,259.7 309.5,294.0 311.5,261.9 313.5,269.6 315.5,276.2 317.5,288.4 319.5,273.1 321.6,275.3 323.6,264.1 325.6,263.3 327.6,327.5 329.6,280.5 331.6,267.2 333.6,279.7" stroke="#008000"/>
<polyline points="54.0,210.9 56.0,221.6 58.0,170.1 60.0,180.9 62.0,185.4 64.0,178.4 66.0,151.0 68.0,168.8 70.1,165.1 72.1,153.2 74.1,149.9 76.1,137.7 78.1,151.4 80.1,129.4 82.1,146.2 84.1,178.5 86.2,146.6 88.2,125.7 90.2,131.5 92.2,135.0 94.2,138.6 96.2,152.5 98.2,134.1 100.2,133.8 102.2,161.2 104.3,157.1 106.3,127.4 108.3,147.8 110.3,158.4 112.3,134.6 114.3,144.5 116.3,141.5 118.3,135.7 120.4,177.8 122.4,150.8 124.4,140.3 126.4,134.3 128.4,129.8 130.4,170.9 132.4,149.6 134.4,147.3 136.4,132.2 138.5,136.5 140.5,131.6 142.5,135.6 144.5,154.0 146.5,181.4 148.5,149.9 150.5,162.2 152.5,152.0 154.6,142.3 156.6,165.1 158.6,147.7 160.6,165.1 162.6,173.1 164.6,169.0 166.6,170.1 168.6,196.8 170.7,161.3 172.7,150.1 174.7,163.7 176.7,158.3 178.7,157.9 180.7,186.4 182.7,159.1 184.7,160.5 186.7,167.8 188.8,236.7 190.8,183.8 192.8,179.8 194.8,195.7 196.8,180.6 198.8,192.0 200.8,218.0 202.8,192.3 204.9,210.0 206.9,187.4 208.9,202.2 210.9,204.7 212.9,203.6 214.9,212.6 216.9,220.2 218.9,216.4 221.0,233.0 223.0,222.9 225.0,228.3 227.0,221.3 229.0,253.7 231.0,242.1 233.0,239.2 235.0,221.6 237.0,224.3 239.1,238.6 241.1,250.0 243.1,252.8 245.1,247.1 247.1,256.2 249.1,249.1 251.1,246.4 253.1,245.6 255.2,258.0 257.2,286.3 259.2,256.5 261.2,254.1 263.2,269.0 265.2,275.4 267.2,262.3 269.2,260.8 271.3,288.7 273.3,289.5 275.3,297.0 277.3,278.0 279.3,258.0 281.3,268.1 283.3,275.1 285.3,287.0 287.3,281.0 289.4,280.5 291.4,285.3 293.4,284.7 295.4,274.0 297.4,276.6 299.4,289.7 301.4,283.7 303.4,278.3 305.5,282.7 307.5,281.6 309.5,281.9 311.5,266.7 313.5,272.2 315.5,267.0 317.5,327.5 319.5,286.6 321.6,273.0 323.6,275.3 325.6,275.7 327.6,280.3 329.6,283.8 331.6,308.6 333.6,307.8" stroke="#000080"/>
<polyline points="54.0,200.4 56.0,181.0 58.0,188.0 60.0,159.7 62.0,170.2 64.0,145.0 66.0,153.1 68.0,133.4 70.1,161.8 72.1,171.1 74.1,168.4 76.1,116.3 78.1,154.9 80.1,131.6 82.1,134.5 84.1,115.4 86.2,158.1 88.2,110.4 90.2,138.8 92.2,148.5 94.2,143.7 96.2,112.6 98.2,114.8 100.2,118.9 102.2,107.6 104.3,123.1 106.3,132.9 108.3,125.3 110.3,119.6 112.3,124.7 114.3,110.3 116.3,121.6 118.3,112.1 120.4,137.5 122.4,129.1 124.4,139.3 126.4,120.2 128.4,114.5 130.4,152.5 132.4,129.5 134.4,127.3 136.4,120.2 138.5,132.0 140.5,116.5 142.5,136.5 144.5,141.2 146.5,152.8 148.5,152.5 150.5,134.5 152.5,130.7 154.6,165.2 156.6,136.0 158.6,137.5 160.6,132.7 162.6,145.5 164.6,130.7 166.6,130.7 168.6,142.2 170.7,150.3 172.7,153.1 174.7,137.0 176.7,172.9 178.7,156.5 180.7,158.4 182.7,157.2 184.7,149.5 186.7,156.1 188.8,162.7 190.8,188.7 192.8,159.7 194.8,172.3 196.8,170.3 198.8,185.1 200.8,165.6 202.8,177.7 204.9,175.0 206.9,185.8 208.9,189.8 210.9,214.3 212.9,179.1 214.9,209.9 216.9,205.2 218.9,187.3 221.0,211.1 223.0,204.5 225.0,220.5 227.0,208.8 229.0,204.9 231.0,234.0 233.0,218.2 235.0,206.5 237.0,219.9 239.1,286.3 241.1,240.6 243.1,244.4 245.1,222.6 247.1,254.7 249.1,246.4 251.1,244.6 253.1,235.5 255.2,266.0 257.2,231.3 259.2,250.4 261.2,256.8 263.2,267.9 265.2,249.1 267.2,280.4 269.2,241.2 271.3,284.7 273.3,273.7 275.3,259.2 277.3,243.5 279.3,244.9 281.3,250.4 283.3,249.1 285.3,249.2 287.3,250.9 289.4,248.0 291.4,268.2 293.4,257.8 295.4,256.6 297.4,265.1 299.4,290.1 301.4,266.5 303.4,276.4 305.5,254.3 307.5,275.7 309.5,259.9 311.5,271.8 313.5,254.8 315.5,255.1 317.5,256.3 319.5,286.4 321.6,252.5 323.6,267.1 325.6,269.2 327.6,261.6 329.6,256.5 331.6,254.0 333.6,263.2" stroke="#808000"/>
<polyline points="54.0,184.7 56.0,223.2 58.0,164.2 60.0,164.0 62.0,165.6 64.0,202.7 66.0,161.0 68.0,170.6 70.1,159.3 72.1,159.7 74.1,135.9 76.1,144.2 78.1,135.4 80.1,182.4 82.1,144.1 84.1,151.8 86.2,144.6 88.2,133.9 90.2,139.0 92.2,181.8 94.2,139.6 96.2,139.8 98.2,148.0 100.2,147.8 102.2,125.8 104.3,133.4 106.3,138.9 108.3,140.2 110.3,148.2 112.3,149.2 114.3,176.6 116.3,156.4 118.3,156.3 120.4,161.5 122.4,152.4 124.4,146.5 126.4,130.0 128.4,152.3 130.4,158.8 132.4,148.3 134.4,146.9 136.4,165.9 138.5,154.5 140.5,174.6 142.5,152.7 144.5,138.9 146.5,143.7 148.5,153.1 150.5,155.9 152.5,157.0 154.6,141.1 156.6,158.0 158.6,151.0 160.6,146.2 162.6,155.7 164.6,161.1 166.6,156.4 168.6,169.6 170.7,181.5 172.7,163.8 174.7,174.2 176.7,171.8 178.7,164.0 180.7,186.2 182.7,164.8 184.7,195.6 186.7,176.6 188.8,195.7 190.8,202.0 192.8,173.4 194.8,196.2 196.8,199.6 198.8,212.8 200.8,200.6 202.8,202.7 204.9,220.7 206.9,200.5 208.9,275.1 210.9,215.8 212.9,210.1 214.9,203.3 216.9,218.3 218.9,213.6 221.0,230.4 223.0,213.8 225.0,210.9 227.0,237.2 229.0,229.4 231.0,219.0 233.0,246.3 235.0,289.6 237.0,255.2 239.1,241.3 241.1,253.5 243.1,253.1 245.1,255.6 247.1,238.8 249.1,242.9 251.1,277.9 253.1,279.2 255.2,257.4 257.2,246.6 259.2,268.1 261.2,269.9 263.2,291.5 265.2,252.9 267.2,274.7 269.2,295.0 271.3,267.7 273.3,276.1 275.3,258.6 277.3,271.4 279.3,286.0 281.3,273.9 283.3,284.0 285.3,286.4 287.3,272.0 289.4,281.8 291.4,279.0 293.4,279.1 295.4,278.4 297.4,284.0 299.4,286.4 301.4,319.9 303.4,279.9 305.5,277.4 307.5,274.5 309.5,284.8 311.5,275.1 313.5,277.3 315.5,282.4 317.5,282.0 319.5,301.2 321.6,276.3 323.6,279.5 325.6,279.1 327.6,293.9 329.6,285.6 331.6,288.6 333.6,305.0" stroke="#800080"/>
<polyline points="54.0,182.4 56.0,183.8 58.0,155.3 60.0,165.5 62.0,143.1 64.0,191.2 66.0,147.6 68.0,133.5 70.1,140.1 72.1,122.9 74.1,124.5 76.1,118.8 78.1,129.9 80.1,170.7 82.1,132.7 84.1,120.8 86.2,151.0 88.2,114.7 90.2,140.1 92.2,143.6 94.2,125.4 96.2,114.9 98.2,159.3 100.2,117.6 102.2,128.2 104.3,132.9 106.3,119.8 108.3,133.8 110.3,111.6 112.3,132.5 114.3,116.6 116.3,143.6 118.3,127.5 120.4,138.4 122.4,114.1 124.4,115.3 126.4,146.7 128.4,163.1 130.4,129.6 132.4,127.2 134.4,116.7 136.4,126.4 138.5,129.7 140.5,125.7 142.5,135.2 144.5,127.9 146.5,130.9 148.5,126.3 150.5,127.0 152.5,147.4 154.6,146.8 156.6,136.8 158.6,127.7 160.6,170.3 162.6,135.8 164.6,134.4 166.6,140.3 168.6,190.4 170.7,139.9 172.7,153.0 174.7,144.6 176.7,152.6 178.7,144.8 180.7,148.5 182.7,156.4 184.7,181.0 186.7,150.0 188.8,153.8 190.8,166.6 192.8,200.1 194.8,165.8 196.8,191.7 198.8,173.9 200.8,168.4 202.8,171.0 204.9,185.8 206.9,182.0 208.9,192.8 210.9,195.6 212.9,184.3 214.9,199.1 216.9,211.5 218.9,209.3 221.0,191.2 223.0,203.5 225.0,210.9 227.0,218.6 229.0,219.5 231.0,220.3 233.0,206.4 235.0,231.5 237.0,227.0 239.1,235.8 241.1,220.0 243.1,238.3 245.1,237.5 247.1,239.6 249.1,256.6 251.1,238.6 253.1,228.2 255.2,245.1 257.2,255.0 259.2,254.9 261.2,283.7 263.2,242.7 265.2,278.7 267.2,264.8 269.2,256.2 271.3,261.8 273.3,259.5 275.3,275.6 277.3,257.5 279.3,250.4 281.3,246.5 283.3,247.6 285.3,326.8 287.3,261.3 289.4,257.1 291.4,265.3 293.4,250.9 295.4,314.4 297.4,279.0 299.4,272.2 301.4,283.5 303.4,265.9 305.5,274.7 307.5,253.8 309.5,270.7 311.5,267.1 313.5,261.4 315.5,269.6 317.5,258.3 319.5,280.6 321.6,255.0 323.6,279.5 325.6,275.2 327.6,282.5 329.6,265.8 331.6,263.3 333.6,271.4" stroke="#008080"/>
<polyline points="54.0,196.1 56.0,191.9 58.0,211.8 60.0,190.8 62.0,152.6 64.0,154.5 66.0,192.1 68.0,142.5 70.1,165.4 72.1,145.8 74.1,147.2 76.1,131.4 78.1,135.5 80.1,129.5 82.1,133.8 84.1,142.1 86.2,127.6 88.2,137.9 90.2,136.2 92.2,145.7 94.2,123.7 96.2,145.6 98.2,142.4 100.2,138.7 102.2,132.8 104.3,122.2 106.3,132.8 108.3,136.9 110.3,153.4 112.3,144.4 114.3,130.6 116.3,150.1 118.3,136.1 120.4,155.9 122.4,130.9 124.4,127.0 126.4,152.2 128.4,127.6 130.4,167.8 132.4,153.2 134.4,133.8 136.4,142.5 138.5,137.8 140.5,164.1 142.5,146.1 144.5,150.9 146.5,150.6 148.5,180.9 150.5,153.3 152.5,170.8 154.6,161.8 156.6,150.3 158.6,156.3 160.6,181.5 162.6,148.5 164.6,144.4 166.6,157.4 168.6,147.3 170.7,176.3 172.7,151.0 174.7,174.7 176.7,176.1 178.7,158.4 180.7,171.5 182.7,196.5 184.7,184.6 186.7,167.0 188.8,175.5 190.8,188.5 192.8,176.1 194.8,174.4 196.8,188.6 198.8,181.6 200.8,203.7 202.8,216.4 204.9,199.1 206.9,222.2 208.9,189.7 210.9,214.5 212.9,194.2 214.9,209.1 216.9,203.7 218.9,215.6 221.0,223.3 223.0,231.5 225.0,208.1 227.0,210.8 229.0,227.4 231.0,241.8 233.0,246.3 235.0,250.6 237.0,224.5 239.1,233.3 241.1,232.9 243.1,232.6 245.1,258.1 247.1,255.4 249.1,251.4 251.1,256.4 253.1,251.1 255.2,248.3 257.2,245.4 259.2,255.7 261.2,252.4 263.2,265.1 265.2,286.6 267.2,270.0 269.2,261.3 271.3,280.4 273.3,255.9 275.3,283.6 277.3,275.6 279.3,278.9 281.3,271.0 283.3,293.5 285.3,273.7 287.3,296.9 289.4,271.8 291.4,302.2 293.4,298.3 295.4,276.6 297.4,291.2 299.4,304.7 301.4,277.9 303.4,271.3 305.5,299.4 307.5,299.4 309.5,300.0 311.5,290.0 313.5,271.5 315.5,286.8 317.5,267.3 319.5,292.3 321.6,304.6 323.6,280.9 325.6,290.0 327.6,272.7 329.6,274.6 331.6,306.8 333.6,290.2" stroke="#ff0000"/>
<polyline points="54.0,179.7 56.0,187.3 58.0,164.8 60.0,193.5 62.0,182.9 64.0,186.6 66.0,158.6 68.0,173.1 70.1,154.9 72.1,139.2 74.1,146.5 76.1,155.6 78.1,137.4 80.1,164.7 82.1,146.3 84.1,147.5 86.2,140.2 88.2,149.7 90.2,138.9 92.2,137.5 94.2,139.8 96.2,131.3 98.2,140.3 100.2,156.6 102.2,170.5 104.3,123.2 106.3,142.6 108.3,140.2 110.3,149.2 112.3,153.3 114.3,150.4 116.3,148.0 118.3,158.4 120.4,142.1 122.4,130.5 124.4,161.9 126.4,155.6 128.4,141.2 130.4,151.4 132.4,143.7 134.4,147.4 136.4,132.3 138.5,165.0 140.5,138.9 142.5,151.5 144.5,146.7 146.5,135.4 148.5,141.8 150.5,175.1 152.5,161.7 154.6,148.1 156.6,143.9 158.6,156.4 160.6,168.4 162.6,150.7 164.6,150.4 166.6,155.3 168.6,164.1 170.7,159.3 172.7,180.7 174.7,167.7 176.7,193.9 178.7,192.0 180.7,170.3 182.7,163.1 184.7,163.7 186.7,163.6 188.8,181.3 190.8,181.4 192.8,203.5 194.8,176.5 196.8,188.6 198.8,223.3 200.8,234.5 202.8,263.4 204.9,205.1 206.9,203.4 208.9,190.7 210.9,202.2 212.9,226.1 214.9,208.5 216.9,244.6 218.9,202.0 221.0,241.6 223.0,206.5 225.0,231.7 227.0,221.1 229.0,247.5 231.0,246.9 233.0,220.0 235.0,311.7 237.0,244.4 239.1,230.0 241.1,254.7 243.1,251.4 245.1,251.1 247.1,267.8 249.1,253.9 251.1,244.7 253.1,247.9 255.2,299.5 257.2,263.2 259.2,264.7 261.2,282.7 263.2,264.8 265.2,253.0 267.2,262.7 269.2,273.5 271.3,297.0 273.3,256.3 275.3,263.3 277.3,258.0 279.3,327.5 281.3,295.7 283.3,297.9 285.3,264.1 287.3,299.4 289.4,290.0 291.4,283.0 293.4,296.7 295.4,265.2 297.4,293.6 299.4,274.8 301.4,271.6 303.4,296.9 305.5,282.7 307.5,305.4 309.5,276.6 311.5,267.8 313.5,291.9 315.5,314.4 317.5,279.6 319.5,320.9 321.6,277.7 323.6,285.3 325.6,282.3 327.6,282.5 329.6,269.2 331.6,282.4 333.6,291.7" stroke="#00ff00"/>
<polyline points="54.0,208.8 56.0,176.8 58.0,207.8 60.0,153.4 62.0,150.2 64.0,161.1 66.0,150.6 68.0,188.8 70.1,135.5 72.1,129.1 74.1,163.5 76.1,141.2 78.1,135.4 80.1,161.2 82.1,141.3 84.1,131.4 86.2,122.1 88.2,124.6 90.2,138.1 92.2,124.8 94.2,150.1 96.2,129.8 98.2,114.7 100.2,110.1 102.2,127.7 104.3,132.2 106.3,138.2 108.3,129.9 110.3,150.7 112.3,121.0 114.3,128.7 116.3,120.6 118.3,122.3 120.4,130.0 122.4,145.4 124.4,124.7 126.4,134.4 128.4,137.4 130.4,141.2 132.4,158.7 134.4,151.5 136.4,135.7 138.5,123.0 140.5,137.1 142.5,177.8 144.5,174.7 146.5,141.4 148.5,137.9 150.5,143.3 152.5,134.6 154.6,133.8 156.6,130.3 158.6,157.2 160.6,144.4 162.6,139.7 164.6,167.0 166.6,156.5 168.6,183.6 170.7,183.1 172.7,145.7 174.7,144.9 176.7,144.5 178.7,151.5 180.7,150.8 182.7,154.5 184.7,192.6 186.7,170.3 188.8,165.3 190.8,170.2 192.8,199.8 194.8,177.5 196.8,172.2 198.8,185.8 200.8,229.8 202.8,189.3 204.9,185.3 206.9,185.3 208.9,213.3 210.9,191.3 212.9,187.1 214.9,184.9 216.9,199.0 218.9,229.5 221.0,218.1 223.0,226.0 225.0,207.4 227.0,228.2 229.0,248.1 231.0,205.4 233.0,207.4 235.0,223.5 237.0,273.1 239.1,234.6 241.1,286.5 243.1,228.4 245.1,230.8 247.1,240.0 249.1,226.1 251.1,239.9 253.1,231.7 255.2,234.0 257.2,271.4 259.2,244.0 261.2,246.1 263.2,254.3 265.2,254.1 267.2,243.6 269.2,275.6 271.3,264.1 273.3,247.3 275.3,270.0 277.3,245.4 279.3,253.5 281.3,248.3 283.3,251.8 285.3,254.5 287.3,272.3 289.4,257.7 291.4,273.0 293.4,256.4 295.4,270.5 297.4,252.8 299.4,256.8 301.4,264.5 303.4,317.9 305.5,270.9 307.5,261.5 309.5,260.0 311.5,277.5 313.5,262.6 315.5,287.4 317.5,304.9 319.5,279.5 321.6,256.0 323.6,256.2 325.6,274.7 327.6,301.7 329.6,267.1 331.6,284.9 333.6,286.7" stroke="#0000ff"/>
<polyline points="54.0,254.6 56.0,167.9 58.0,170.0 60.0,217.0 62.0,146.9 64.0,184.5 66.0,180.2 68.0,142.3 70.1,155.0 72.1,129.8 74.1,132.5 76.1,135.2 78.1,151.3 80.1,125.4 82.1,140.2 84.1,140.8 86.2,159.8 88.2,127.1 90.2,139.3 92.2,144.6 94.2,147.6 96.2,117.3 98.2,118.5 100.2,143.3 102.2,136.5 104.3,155.1 106.3,125.6 108.3,130.0 110.3,128.2 112.3,135.1 114.3,126.1 116.3,120.8 118.3,120.4 120.4,130.9 122.4,128.0 124.4,121.3 126.4,128.1 128.4,137.7 130.4,158.8 132.4,145.0 134.4,152.9 136.4,148.7 138.5,140.1 140.5,171.5 142.5,126.8 144.5,153.7 146.5,128.7 148.5,134.7 150.5,147.3 152.5,156.7 154.6,137.6 156.6,135.7 158.6,158.0 160.6,145.1 162.6,137.2 164.6,148.1 166.6,169.7 168.6,145.3 170.7,153.8 172.7,179.1 174.7,147.2 176.7,170.4 178.7,167.5 180.7,159.1 182.7,163.2 184.7,193.3 186.7,157.6 188.8,174.5 190.8,182.8 192.8,200.7 194.8,191.5 196.8,214.8 198.8,207.3 200.8,180.6 202.8,199.6 204.9,185.8 206.9,218.5 208.9,219.2 210.9,190.2 212.9,212.3 214.9,198.9 216.9,202.8 218.9,196.4 221.0,197.5 223.0,216.1 225.0,205.7 227.0,224.0 229.0,232.6 231.0,217.8 233.0,225.6 235.0,217.5 237.0,237.4 239.1,264.1 241.1,228.1 243.1,247.4 245.1,241.7 247.1,244.2 249.1,298.4 251.1,267.3 253.1,244.2 255.2,257.8 257.2,258.6 259.2,264.2 261.2,241.3 263.2,275.4 265.2,255.7 267.2,254.8 269.2,248.9 271.3,309.3 273.3,270.4 275.3,265.4 277.3,254.8 279.3,277.6 281.3,259.5 283.3,282.4 285.3,298.6 287.3,273.4 289.4,256.9 291.4,271.3 293.4,269.7 295.4,279.1 297.4,270.7 299.4,308.1 301.4,268.5 303.4,261.7 305.5,270.9 307.5,295.5 309.5,264.1 311.5,268.6 313.5,288.6 315.5,273.5 317.5,283.4 319.5,276.9 321.6,278.1 323.6,270.6 325.6,262.2 327.6,305.3 329.6,288.4 331.6,284.0 333.6,265.6" stroke="#ffff00"/>
<polyline points="54.0,174.7 56.0,185.2 58.0,182.3 60.0,163.6 62.0,177.6 64.0,159.4 66.0,158.2 68.0,156.3 70.1,146.4 72.1,168.7 74.1,130.9 76.1,133.2 78.1,142.0 80.1,151.7 82.1,129.1 84.1,132.7 86.2,131.8 88.2,150.8 90.2,140.2 92.2,133.8 94.2,156.6 96.2,172.4 98.2,123.4 100.2,146.2 102.2,121.3 104.3,118.5 106.3,144.4 108.3,157.7 110.3,162.6 112.3,121.1 114.3,133.8 116.3,139.6 118.3,139.1 120.4,137.0 122.4,132.4 124.4,183.3 126.4,153.8 128.4,161.5 130.4,124.1 132.4,142.1 134.4,143.0 136.4,154.4 138.5,188.2 140.5,156.1 142.5,153.9 144.5,164.8 146.5,146.0 148.5,163.8 150.5,141.5 152.5,141.1 154.6,139.2 156.6,150.3 158.6,171.7 160.6,148.9 162.6,151.2 164.6,211.4 166.6,183.6 168.6,153.4 170.7,176.5 172.7,146.5 174.7,189.5 176.7,169.1 178.7,151.0 180.7,213.2 182.7,158.7 184.7,166.9 186.7,160.9 188.8,181.3 190.8,174.0 192.8,179.9 194.8,179.3 196.8,179.3 198.8,202.9 200.8,181.5 202.8,189.4 204.9,189.1 206.9,192.6 208.9,192.1 210.9,195.9 212.9,222.6 214.9,204.9 216.9,212.2 218.9,211.4 221.0,220.1 223.0,233.3 225.0,222.1 227.0,243.8 229.0,214.1 231.0,233.2 233.0,226.3 235.0,242.0 237.0,224.3 239.1,250.5 241.1,231.2 243.1,244.6 245.1,230.8 247.1,234.1 249.1,259.7 251.1,261.1 253.1,264.3 255.2,238.6 257.2,253.2 259.2,265.5 261.2,243.3 263.2,250.6 265.2,285.3 267.2,265.1 269.2,275.2 271.3,282.9 273.3,260.3 275.3,298.5 277.3,275.2 279.3,254.8 281.3,260.9 283.3,261.6 285.3,260.5 287.3,284.7 289.4,274.7 291.4,283.4 293.4,281.4 295.4,304.8 297.4,275.4 299.4,266.5 301.4,278.0 303.4,284.2 305.5,272.5 307.5,274.8 309.5,278.8 311.5,294.0 313.5,303.6 315.5,285.8 317.5,279.5 319.5,312.6 321.6,310.6 323.6,264.0 325.6,290.9 327.6,266.0 329.6,272.5 331.6,274.7 333.6,264.8" stroke="#00ffff"/>
<polyline points="54.0,214.1 56.0,194.6 58.0,190.2 60.0,169.0 62.0,179.7 64.0,148.1 66.0,159.6 68.0,178.4 70.1,147.2 72.1,128.9 74.1,141.1 76.1,155.9 78.1,150.1 80.1,148.5 82.1,139.6 84.1,137.5 86.2,153.9 88.2,157.6 90.2,133.1 92.2,134.7 94.2,133.5 96.2,123.0 98.2,128.4 100.2,127.2 102.2,129.3 104.3,119.5 106.3,123.0 108.3,119.9 110.3,121.3 112.3,157.1 114.3,126.9 116.3,140.2 118.3,120.4 120.4,129.8 122.4,171.0 124.4,142.6 126.4,126.8 128.4,146.8 130.4,133.4 132.4,161.4 134.4,159.1 136.4,148.2 138.5,127.9 140.5,126.6 142.5,154.0 144.5,174.0 146.5,129.0 148.5,181.3 150.5,132.0 152.5,156.0 154.6,149.6 156.6,137.9 158.6,147.5 160.6,166.9 162.6,176.4 164.6,159.7 166.6,185.3 168.6,162.0 170.7,166.7 172.7,145.0 174.7,160.2 176.7,158.4 178.7,181.8 180.7,167.6 182.7,153.4 184.7,165.2 186.7,211.1 188.8,170.6 190.8,200.5 192.8,188.3 194.8,166.2 196.8,188.1 198.8,201.6 200.8,174.6 202.8,243.8 204.9,188.2 206.9,186.6 208.9,206.7 210.9,212.7 212.9,187.6 214.9,194.9 216.9,210.2 218.9,207.0 221.0,211.0 223.0,212.6 225.0,201.5 227.0,252.9 229.0,254.7 231.0,229.9 233.0,212.6 235.0,221.8 237.0,234.3 239.1,244.4 241.1,238.0 243.1,228.0 245.1,284.5 247.1,255.9 249.1,243.0 251.1,244.2 253.1,258.8 255.2,272.9 257.2,255.1 259.2,259.7 261.2,256.7 263.2,250.4 265.2,270.4 267.2,280.2 269.2,246.0 271.3,277.8 273.3,256.5 275.3,305.7 277.3,259.3 279.3,258.0 281.3,266.1 283.3,290.6 285.3,268.4 287.3,257.0 289.4,256.0 291.4,294.9 293.4,277.4 295.4,257.3 297.4,282.9 299.4,261.2 301.4,271.9 303.4,266.8 305.5,260.7 307.5,259.8 309.5,272.6 311.5,263.0 313.5,275.8 315.5,260.5 317.5,288.2 319.5,278.0 321.6,261.0 323.6,277.8 325.6,286.2 327.6,261.4 329.6,280.7 331.6,283.9 333.6,275.8" stroke="#ff00ff"/>
<polyline points="54.0,177.9 56.0,165.4 58.0,191.0 60.0,184.9 62.0,193.1 64.0,144.1 66.0,147.6 68.0,141.9 70.1,140.4 72.1,172.7 74.1,134.2 76.1,130.7 78.1,182.6 80.1,124.8 82.1,143.7 84.1,145.6 86.2,144.2 88.2,132.8 90.2,142.1 92.2,130.2 94.2,139.9 96.2,122.6 98.2,126.5 100.2,146.2 102.2,128.4 104.3,166.9 106.3,126.3 108.3,126.2 110.3,130.0 112.3,147.0 114.3,136.0 116.3,125.0 118.3,121.5 120.4,154.3 122.4,145.0 124.4,150.2 126.4,148.1 128.4,134.6 130.4,138.0 132.4,185.3 134.4,146.2 136.4,130.3 138.5,145.6 140.5,150.9 142.5,143.1 144.5,145.3 146.5,138.4 148.5,165.4 150.5,138.9 152.5,144.0 154.6,133.7 156.6,135.4 158.6,148.0 160.6,150.0 162.6,140.6 164.6,165.7 166.6,153.0 168.6,155.7 170.7,183.0 172.7,190.3 174.7,164.4 176.7,183.2 178.7,169.1 180.7,170.6 182.7,171.5 184.7,192.2 186.7,167.9 188.8,175.4 190.8,214.1 192.8,188.4 194.8,181.0 196.8,180.1 198.8,185.1 200.8,185.0 202.8,208.5 204.9,193.1 206.9,210.3 208.9,211.0 210.9,199.4 212.9,203.8 214.9,202.6 216.9,204.5 218.9,196.3 221.0,226.1 223.0,222.7 225.0,221.7 227.0,216.0 229.0,219.6 231.0,254.2 233.0,236.7 235.0,220.4 237.0,234.9 239.1,226.0 241.1,239.3 243.1,292.8 245.1,255.2 247.1,241.0 249.1,245.8 251.1,247.8 253.1,254.4 255.2,246.8 257.2,261.4 259.2,273.8 261.2,251.4 263.2,249.1 265.2,274.6 267.2,252.4 269.2,260.9 271.3,249.1 273.3,252.7 275.3,288.1 277.3,272.4 279.3,323.1 281.3,300.1 283.3,271.2 285.3,290.2 287.3,274.8 289.4,259.9 291.4,289.1 293.4,278.9 295.4,259.3 297.4,324.9 299.4,284.5 301.4,269.8 303.4,312.1 305.5,261.5 307.5,261.8 309.5,274.2 311.5,300.8 313.5,307.9 315.5,293.5 317.5,262.6 319.5,285.8 321.6,273.2 323.6,272.0 325.6,277.8 327.6,279.3 329.6,263.6 331.6,281.7 333.6,283.1" stroke="#800000"/>
<polyline points="54.0,187.7 56.0,158.2 58.0,157.8 60.0,158.6 62.0,156.2 64.0,148.6 66.0,132.9 68.0,144.7 70.1,153.6 72.1,174.1 74.1,137.7 76.1,149.7 78.1,159.1 80.1,122.0 82.1,122.0 84.1,134.3 86.2,130.2 88.2,120.2 90.2,120.4 92.2,137.8 94.2,111.9 96.2,122.9 98.2,126.9 100.2,112.8 102.2,137.7 104.3,111.6 106.3,123.8 108.3,111.8 110.3,120.3 112.3,121.0 114.3,123.3 116.3,132.9 118.3,124.8 120.4,129.7 122.4,133.5 124.4,127.0 126.4,135.4 128.4,149.5 130.4,126.5 132.4,117.4 134.4,135.0 136.4,122.5 138.5,161.6 140.5,154.9 142.5,124.7 144.5,129.2 146.5,133.1 148.5,135.5 150.5,143.2 152.5,165.9 154.6,140.7 156.6,143.4 158.6,130.4 160.6,132.7 162.6,141.2 164.6,143.8 166.6,167.5 168.6,151.3 170.7,138.1 172.7,149.5 174.7,162.3 176.7,164.6 178.7,151.7 180.7,172.9 182.7,150.2 184.7,179.1 186.7,160.5 188.8,172.8 190.8,155.9 192.8,160.7 194.8,181.6 196.8,189.8 198.8,192.2 200.8,177.7 202.8,179.9 204.9,180.8 206.9,184.8 208.9,216.6 210.9,210.0 212.9,202.8 214.9,195.5 216.9,187.0 218.9,202.8 221.0,216.3 223.0,202.1 225.0,219.7 227.0,218.6 229.0,232.0 231.0,210.0 233.0,215.4 235.0,215.1 237.0,223.2 239.1,225.2 241.1,227.9 243.1,281.0 245.1,229.8 247.1,251.1 249.1,268.9 251.1,250.0 253.1,240.1 255.2,276.9 257.2,235.9 259.2,260.1 261.2,251.7 263.2,247.5 265.2,260.8 267.2,259.3 269.2,240.9 271.3,271.7 273.3,259.2 275.3,277.6 277.3,295.8 279.3,261.3 281.3,253.5 283.3,276.1 285.3,258.6 287.3,265.1 289.4,251.3 291.4,270.4 293.4,260.7 295.4,274.4 297.4,270.6 299.4,260.1 301.4,253.5 303.4,285.9 305.5,280.2 307.5,285.0 309.5,274.0 311.5,269.1 313.5,262.8 315.5,293.8 317.5,260.9 319.5,266.1 321.6,272.2 323.6,257.7 325.6,294.2 327.6,261.3 329.6,311.9 331.6,279.2 333.6,262.9" stroke="#008000"/>
<polyline points="54.0,176.1 56.0,168.3 58.0,151.1 60.0,155.6 62.0,141.0 64.0,170.3 66.0,141.9 68.0,154.5 70.1,133.1 72.1,145.9 74.1,124.3 76.1,150.9 78.1,145.7 80.1,122.6 82.1,127.0 84.1,116.9 86.2,113.7 88.2,137.9 90.2,124.8 92.2,132.8 94.2,139.6 96.2,121.4 98.2,115.0 100.2,121.9 102.2,110.4 104.3,153.9 106.3,139.0 108.3,138.6 110.3,120.6 112.3,132.8 114.3,127.3 116.3,163.5 118.3,115.1 120.4,133.5 122.4,125.5 124.4,114.2 126.4,128.4 128.4,124.5 130.4,136.3 132.4,121.3 134.4,132.7 136.4,121.3 138.5,120.1 140.5,145.0 142.5,138.1 144.5,149.5 146.5,127.2 148.5,122.7 150.5,133.9 152.5,127.0 154.6,137.7 156.6,138.4 158.6,127.6 160.6,142.0 162.6,136.6 164.6,152.2 166.6,145.6 168.6,145.5 170.7,147.7 172.7,146.5 174.7,172.2 176.7,163.8 178.7,144.3 180.7,161.0 182.7,155.6 184.7,176.5 186.7,162.8 188.8,174.4 190.8,178.5 192.8,178.7 194.8,161.2 196.8,180.1 198.8,188.3 200.8,170.2 202.8,179.0 204.9,179.7 206.9,177.0 208.9,182.1 210.9,179.2 212.9,214.3 214.9,192.6 216.9,198.8 218.9,200.2 221.0,214.0 223.0,244.7 225.0,219.4 227.0,198.1 229.0,208.8 231.0,236.9 233.0,215.5 235.0,280.0 237.0,220.3 239.1,230.2 241.1,254.1 243.1,243.3 245.1,241.0 247.1,247.0 249.1,232.7 251.1,259.5 253.1,241.1 255.2,240.2 257.2,242.8 259.2,278.8 261.2,266.5 263.2,269.6 265.2,239.8 267.2,255.6 269.2,273.7 271.3,255.6 273.3,279.2 275.3,267.5 277.3,270.7 279.3,249.8 281.3,275.2 283.3,260.8 285.3,252.9 287.3,266.7 289.4,254.4 291.4,274.5 293.4,255.4 295.4,279.0 297.4,252.1 299.4,279.5 301.4,255.0 303.4,262.3 305.5,259.1 307.5,263.3 309.5,258.2 311.5,255.8 313.5,285.8 315.5,277.5 317.5,303.2 319.5,263.0 321.6,286.3 323.6,285.5 325.6,262.0 327.6,273.4 329.6,269.8 331.6,273.9 333.6,264.2" stroke="#000080"/>
<polyline points="54.0,210.5 56.0,191.6 58.0,185.7 60.0,182.9 62.0,152.9 64.0,183.7 66.0,150.5 68.0,145.8 70.1,150.5 72.1,188.4 74.1,147.5 76.1,137.2 78.1,136.5 80.1,131.9 82.1,153.8 84.1,144.5 86.2,152.8 88.2,156.7 90.2,139.3 92.2,145.0 94.2,126.7 96.2,147.9 98.2,124.4 100.2,138.0 102.2,128.4 104.3,123.6 106.3,143.6 108.3,166.6 110.3,136.4 112.3,145.1 114.3,140.6 116.3,159.7 118.3,164.1 120.4,125.5 122.4,130.8 124.4,133.8 126.4,151.2 128.4,128.8 130.4,146.1 132.4,134.0 134.4,172.2 136.4,129.5 138.5,170.7 140.5,130.8 142.5,166.5 144.5,145.6 146.5,151.8 148.5,134.5 150.5,146.6 152.5,148.6 154.6,172.9 156.6,165.6 158.6,145.2 160.6,140.6 162.6,199.0 164.6,162.4 166.6,150.5 168.6,189.5 170.7,151.8 172.7,203.7 174.7,169.6 176.7,168.5 178.7,193.1 180.7,174.1 182.7,178.6 184.7,172.1 186.7,161.7 188.8,183.2 190.8,166.8 192.8,177.6 194.8,193.1 196.8,252.5 198.8,181.4 200.8,213.8 202.8,201.5 204.9,215.5 206.9,188.9 208.9,204.3 210.9,205.0 212.9,243.8 214.9,209.6 216.9,237.4 218.9,206.0 221.0,227.5 223.0,225.7 225.0,212.1 227.0,216.9 229.0,250.9 231.0,222.7 233.0,241.7 235.0,223.3 237.0,227.5 239.1,259.4 241.1,229.0 243.1,255.6 245.1,264.9 247.1,259.8 249.1,256.4 251.1,250.0 253.1,241.9 255.2,253.2 257.2,270.9 259.2,246.0 261.2,259.1 263.2,278.6 265.2,251.4 267.2,271.4 269.2,258.7 271.3,269.0 273.3,253.9 275.3,270.8 277.3,269.9 279.3,267.1 281.3,269.6 283.3,263.6 285.3,272.5 287.3,273.2 289.4,289.5 291.4,271.1 293.4,276.0 295.4,268.6 297.4,265.8 299.4,315.6 301.4,274.8 303.4,267.2 305.5,265.2 307.5,275.1 309.5,316.6 311.5,266.6 313.5,281.0 315.5,307.4 317.5,290.2 319.5,303.8 321.6,293.3 323.6,279.0 325.6,324.8 327.6,311.6 329.6,277.5 331.6,277.8 333.6,273.5" stroke="#808000"/>
<polyline points="54.0,195.8 56.0,170.9 58.0,171.2 60.0,187.1 62.0,184.3 64.0,166.0 66.0,149.9 68.0,151.6 70.1,146.9 72.1,138.7 74.1,190.1 76.1,157.3 78.1,145.2 80.1,145.3 82.1,152.4 84.1,156.5 86.2,135.8 88.2,136.1 90.2,143.2 92.2,138.2 94.2,165.1 96.2,129.6 98.2,192.7 100.2,143.3 102.2,134.7 104.3,129.4 106.3,156.5 108.3,136.1 110.3,132.8 112.3,126.9 114.3,142.1 116.3,140.0 118.3,125.4 120.4,165.4 122.4,126.8 124.4,131.0 126.4,142.3 128.4,168.6 130.4,182.8 132.4,127.7 134.4,162.9 136.4,169.5 138.5,140.5 140.5,148.1 142.5,134.6 144.5,143.2 146.5,133.6 148.5,171.1 150.5,155.3 152.5,156.5 154.6,148.0 156.6,138.5 158.6,170.6 160.6,152.1 162.6,148.8 164.6,166.3 166.6,152.8 168.6,167.7 170.7,159.5 172.7,157.3 174.7,150.9 176.7,174.5 178.7,171.3 180.7,170.0 182.7,185.5 184.7,163.8 186.7,169.1 188.8,184.3 190.8,169.2 192.8,175.2 194.8,181.3 196.8,175.9 198.8,230.9 200.8,201.5 202.8,189.3 204.9,217.7 206.9,187.9 208.9,188.9 210.9,204.7 212.9,228.6 214.9,209.5 216.9,197.9 218.9,221.2 221.0,205.8 223.0,231.7 225.0,209.1 227.0,220.6 229.0,222.1 231.0,226.6 233.0,237.7 235.0,238.1 237.0,230.2 239.1,249.8 241.1,244.6 243.1,263.3 245.1,247.4 247.1,257.5 249.1,272.2 251.1,258.2 253.1,240.0 255.2,260.1 257.2,250.1 259.2,253.4 261.2,275.5 263.2,249.2 265.2,252.7 267.2,264.8 269.2,259.7 271.3,278.7 273.3,270.3 275.3,280.0 277.3,271.0 279.3,257.3 281.3,267.8 283.3,259.4 285.3,308.0 287.3,264.6 289.4,265.2 291.4,302.4 293.4,285.5 295.4,263.1 297.4,287.2 299.4,295.0 301.4,278.0 303.4,299.9 305.5,294.9 307.5,271.2 309.5,282.4 311.5,266.0 313.5,266.1 315.5,304.9 317.5,284.6 319.5,277.2 321.6,299.3 323.6,275.6 325.6,278.4 327.6,294.0 329.6,303.9 331.6,289.0 333.6,280.4" stroke="#800080"/>
<polyline points="54.0,227.8 56.0,187.4 58.0,170.5 60.0,157.2 62.0,156.4 64.0,183.7 66.0,150.6 68.0,163.6 70.1,143.7 72.1,144.0 74.1,139.8 76.1,156.9 78.1,146.7 80.1,146.8 82.1,136.9 84.1,149.2 86.2,129.7 88.2,128.6 90.2,151.3 92.2,141.6 94.2,189.3 96.2,128.8 98.2,137.6 100.2,151.0 102.2,146.5 104.3,122.3 106.3,128.6 108.3,146.5 110.3,151.6 112.3,146.6 114.3,146.9 116.3,132.4 118.3,140.4 120.4,133.2 122.4,126.8 124.4,158.7 126.4,131.5 128.4,135.8 130.4,127.9 132.4,131.4 134.4,129.4 136.4,139.6 138.5,132.4 140.5,131.7 142.5,171.4 144.5,149.2 146.5,154.6 148.5,135.5 150.5,189.9 152.5,141.3 154.6,159.1 156.6,149.1 158.6,154.0 160.6,158.2 162.6,168.5 164.6,171.3 166.6,146.8 168.6,171.1 170.7,183.6 172.7,187.8 174.7,167.9 176.7,161.0 178.7,183.0 180.7,174.5 182.7,161.9 184.7,168.7 186.7,179.4 188.8,165.1 190.8,184.3 192.8,176.0 194.8,181.0 196.8,178.3 198.8,192.6 200.8,193.2 202.8,186.8 204.9,204.7 206.9,203.7 208.9,189.8 210.9,221.3 212.9,225.2 214.9,209.8 216.9,208.1 218.9,208.5 221.0,220.7 223.0,207.9 225.0,209.5 227.0,222.2 229.0,255.5 231.0,232.3 233.0,260.1 235.0,238.6 237.0,253.5 239.1,257.2 241.1,246.7 243.1,259.6 245.1,256.5 247.1,236.1 249.1,250.1 251.1,264.7 253.1,265.5 255.2,264.2 257.2,261.2 259.2,266.0 261.2,287.7 263.2,270.1 265.2,280.5 267.2,277.0 269.2,306.5 271.3,298.9 273.3,254.8 275.3,276.0 277.3,276.6 279.3,278.9 281.3,280.6 283.3,263.5 285.3,275.5 287.3,273.7 289.4,264.5 291.4,265.6 293.4,269.7 295.4,290.9 297.4,269.8 299.4,275.5 301.4,283.0 303.4,278.8 305.5,274.7 307.5,270.9 309.5,325.3 311.5,302.2 313.5,287.1 315.5,289.8 317.5,275.9 319.5,294.2 321.6,276.1 323.6,282.7 325.6,274.9 327.6,304.5 329.6,283.2 331.6,272.2 333.6,289.8" stroke="#008080"/>
<polyline points="54.0,173.6 56.0,211.2 58.0,165.9 60.0,190.1 62.0,146.9 64.0,164.8 66.0,141.9 68.0,140.4 70.1,151.8 72.1,138.0 74.1,142.5 76.1,125.7 78.1,160.8 80.1,123.7 82.1,162.3 84.1,131.5 86.2,138.7 88.2,121.6 90.2,131.2 92.2,119.8 94.2,131.8 96.2,129.7 98.2,140.0 100.2,133.2 102.2,123.6 104.3,138.1 106.3,129.5 108.3,127.1 110.3,144.3 112.3,146.0 114.3,164.1 116.3,131.9 118.3,120.4 120.4,163.8 122.4,132.2 124.4,133.3 126.4,164.9 128.4,163.7 130.4,138.6 132.4,137.8 134.4,127.1 136.4,142.9 138.5,130.9 140.5,144.9 142.5,134.4 144.5,143.2 146.5,128.7 148.5,145.5 150.5,138.0 152.5,136.7 154.6,139.6 156.6,133.6 158.6,163.9 160.6,146.4 162.6,147.0 164.6,166.2 166.6,153.8 168.6,158.8 170.7,153.0 172.7,179.3 174.7,146.0 176.7,152.7 178.7,173.3 180.7,164.5 182.7,185.7 184.7,165.3 186.7,183.6 188.8,167.5 190.8,176.5 192.8,185.8 194.8,219.8 196.8,170.0 198.8,207.8 200.8,207.2 202.8,180.4 204.9,190.3 206.9,267.7 208.9,191.2 210.9,264.0 212.9,212.7 214.9,215.8 216.9,198.9 218.9,195.3 221.0,219.0 223.0,211.9 225.0,214.4 227.0,227.5 229.0,207.8 231.0,225.3 233.0,213.3 235.0,226.4 237.0,231.8 239.1,228.3 241.1,245.3 243.1,247.9 245.1,239.8 247.1,244.9 249.1,258.5 251.1,245.5 253.1,255.4 255.2,263.3 257.2,249.0 259.2,275.3 261.2,257.2 263.2,246.1 265.2,266.2 267.2,254.3 269.2,250.1 271.3,250.5 273.3,265.6 275.3,268.5 277.3,254.0 279.3,254.1 281.3,277.1 283.3,285.7 285.3,270.3 287.3,278.0 289.4,274.5 291.4,266.8 293.4,257.8 295.4,264.5 297.4,266.9 299.4,272.9 301.4,296.5 303.4,264.5 305.5,278.8 307.5,271.2 309.5,266.7 311.5,299.0 313.5,276.6 315.5,272.1 317.5,279.7 319.5,292.1 321.6,261.9 323.6,288.7 325.6,307.0 327.6,278.9 329.6,268.4 331.6,282.1 333.6,269.6" stroke="#ff0000"/></g><line x1="54" y1="327.5" x2="334" y2="327.5" stroke="#3c3ca8" stroke-width="1.3"/></g><g clip-path="url(#clc2)"><g fill="none" stroke-width="1" stroke-linejoin="round"><polyline points="380.7,194.4 382.3,173.4 383.9,181.5 385.5,120.7 387.1,112.6 388.8,131.4 390.4,125.0 392.0,103.5 393.6,115.1 395.2,112.7 396.8,118.7 398.4,124.6 400.1,122.6 401.7,135.5 403.3,104.1 404.9,131.2 406.5,112.9 408.1,116.2 409.7,119.4 411.3,119.0 413.0,101.6 414.6,108.2 416.2,118.6 417.8,116.1 419.4,122.6 421.0,139.7 422.6,122.3 424.2,148.4 425.9,123.9 427.5,129.9 429.1,117.5 430.7,98.9 432.3,98.0 433.9,98.0 435.5,125.3 437.2,105.8 438.8,102.1 440.4,98.0 442.0,114.5 443.6,134.0 445.2,151.2 446.8,111.7 448.4,141.4 450.1,105.0 451.7,142.7 453.3,98.5 454.9,123.6 456.5,148.3 458.1,114.5 459.7,151.0 461.4,106.7 463.0,120.2 464.6,135.2 466.2,128.6 467.8,121.2 469.4,162.2 471.0,110.0 472.6,106.0 474.3,114.1 475.9,99.8 477.5,114.4 479.1,169.0 480.7,128.4 482.3,145.0 483.9,102.4 485.5,120.5 487.2,128.1 488.8,100.8 490.4,126.7 492.0,121.8 493.6,122.8 495.2,129.4 496.8,101.4 498.5,140.0 500.1,139.1 501.7,124.1 503.3,130.7 504.9,101.9 506.5,143.1 508.1,108.4 509.7,110.5 511.4,109.6 513.0,108.7 514.6,146.2 516.2,124.7 517.8,113.8 519.4,182.2 521.0,113.5 522.7,168.1 524.3,131.4 525.9,131.4 527.5,119.2 529.1,154.8 530.7,116.4 532.3,210.3 533.9,136.4 535.6,153.3 537.2,158.8 538.8,139.1 540.4,184.2 542.0,165.0 543.6,177.4 545.2,175.2 546.8,181.2 548.5,176.8 550.1,174.5 551.7,207.1 553.3,210.6 554.0,211.4 554.7,222.5 555.4,222.1 556.1,220.8 556.8,219.9 557.4,219.5 558.1,221.3 558.8,225.0 559.5,225.2 560.2,219.7 560.9,216.1 561.6,214.0 562.3,216.0 563.0,221.1 563.7,231.9 564.4,219.0 565.1,211.8 565.7,209.0 566.4,210.4 567.1,216.0 567.8,229.7 568.5,226.2 569.2,216.0 569.9,212.9 570.6,213.3 571.3,217.8 572.0,227.8 572.7,236.8 573.3,225.3 574.0,219.5 574.7,217.6 575.4,220.7 576.1,226.5 576.8,238.7 577.5,229.5 578.2,221.8 578.9,218.2 579.6,218.9 580.3,222.7 581.0,232.3 581.6,235.6 582.3,224.7 583.0,219.6 583.7,217.8 584.4,219.7 585.1,226.3 585.8,240.8 586.5,225.6 587.2,219.9 587.9,217.1 588.6,218.1 589.3,224.3 589.9,237.2 590.6,234.9 591.3,225.7 592.0,220.9 592.7,220.7 593.4,223.0 594.1,231.9 594.8,242.2 595.5,228.3 596.2,220.4 596.9,217.8 597.5,218.7 598.2,225.2 598.9,238.2 599.6,230.3 600.3,221.0 601.0,217.5 601.7,218.6 602.4,223.2 603.1,232.4 603.8,236.8 604.5,224.9 605.2,220.6 605.8,220.1 606.5,223.2 607.2,230.1 607.9,243.6 608.6,230.3 609.3,222.7 610.0,221.3 610.7,222.4 611.4,226.1 612.1,235.2 612.8,232.9 613.4,222.3 614.1,217.5 614.8,216.9 615.5,220.4 616.2,227.9 616.9,239.8 617.6,225.4 618.3,219.6 619.0,218.5 619.7,220.3 620.4,226.8 621.1,239.0 621.7,233.0 622.4,223.1 623.1,219.2 623.8,219.4 624.5,223.5 625.2,231.6 625.9,237.6 626.6,225.7 627.3,219.8 628.0,217.0 628.7,220.6 629.3,226.2 630.0,239.8 630.7,228.1 631.4,220.6 632.1,216.3 632.8,216.5 633.5,220.9 634.2,232.1 634.9,232.0 635.6,221.9 636.3,218.0 637.0,216.8 637.6,219.7 638.3,228.0 639.0,241.6 639.7,227.2 640.4,219.8 641.1,217.5 641.8,219.4 642.5,224.2 643.2,237.2 643.9,232.5 644.6,223.0 645.3,219.0 645.9,219.5 646.6,224.5 647.3,233.8 648.0,241.3 648.7,229.9 649.4,223.9 650.1,222.2 650.8,224.5 651.5,229.9 652.2,242.9 652.9,231.9 653.5,223.9 654.2,219.9 654.9,219.7 655.6,223.9 656.3,234.5 657.0,237.6 657.7,227.1 658.4,222.1 659.1,221.5 659.8,223.5 660.5,230.9 661.2,245.9 661.8,230.7 662.5,222.6 663.2,219.3 663.9,220.6 664.6,225.7 665.3,237.1 666.0,234.4 666.7,224.5 667.4,219.8" stroke="#ffff00"/>
<polyline points="380.7,198.0 382.3,179.1 383.9,158.8 385.5,138.1 387.1,125.8 388.8,134.4 390.4,118.4 392.0,124.2 393.6,153.8 395.2,98.1 396.8,101.7 398.4,106.3 400.1,110.8 401.7,98.0 403.3,117.1 404.9,107.4 406.5,110.8 408.1,111.9 409.7,99.4 411.3,106.4 413.0,128.2 414.6,101.0 416.2,118.4 417.8,121.6 419.4,107.5 421.0,100.4 422.6,154.7 424.2,107.1 425.9,123.5 427.5,116.4 429.1,106.3 430.7,111.3 432.3,100.8 433.9,101.2 435.5,108.7 437.2,110.3 438.8,132.5 440.4,113.8 442.0,104.9 443.6,116.2 445.2,98.4 446.8,125.5 448.4,126.1 450.1,127.4 451.7,126.5 453.3,119.8 454.9,106.4 456.5,110.7 458.1,100.4 459.7,159.0 461.4,127.5 463.0,113.1 464.6,113.5 466.2,163.7 467.8,111.1 469.4,120.9 471.0,116.1 472.6,121.4 474.3,138.6 475.9,112.9 477.5,117.1 479.1,123.6 480.7,128.3 482.3,128.0 483.9,100.7 485.5,102.9 487.2,120.6 488.8,155.9 490.4,103.9 492.0,118.8 493.6,109.9 495.2,124.2 496.8,132.9 498.5,123.2 500.1,128.1 501.7,117.2 503.3,124.9 504.9,164.8 506.5,141.7 508.1,123.0 509.7,131.0 511.4,129.0 513.0,162.2 514.6,102.9 516.2,103.0 517.8,129.3 519.4,126.7 521.0,119.9 522.7,134.8 524.3,120.3 525.9,155.1 527.5,166.2 529.1,151.8 530.7,124.3 532.3,136.8 533.9,133.5 535.6,131.3 537.2,186.6 538.8,175.0 540.4,174.6 542.0,160.9 543.6,184.9 545.2,200.7 546.8,168.3 548.5,190.3 550.1,199.4 551.7,179.3 553.3,201.6 554.0,202.4 554.7,213.0 555.4,214.9 556.1,219.0 556.8,219.5 557.4,218.7 558.1,218.4 558.8,219.4 559.5,222.3 560.2,226.6 560.9,228.6 561.6,229.9 562.3,232.6 563.0,237.1 563.7,243.5 564.4,251.4 565.1,249.4 565.7,242.8 566.4,239.6 567.1,246.6 567.8,319.3 568.5,240.8 569.2,227.6 569.9,222.8 570.6,221.8 571.3,222.2 572.0,224.7 572.7,233.2 573.3,250.5 574.0,279.3 574.7,270.3 575.4,246.5 576.1,239.1 576.8,241.2 577.5,237.6 578.2,231.7 578.9,231.8 579.6,236.4 580.3,251.8 581.0,273.7 581.6,258.5 582.3,249.8 583.0,247.0 583.7,257.1 584.4,277.4 585.1,248.4 585.8,237.1 586.5,233.0 587.2,231.0 587.9,226.9 588.6,221.9 589.3,221.1 589.9,228.8 590.6,267.4 591.3,239.5 592.0,233.3 592.7,247.8 593.4,310.8 594.1,275.5 594.8,269.7 595.5,246.0 596.2,240.7 596.9,248.8 597.5,264.7 598.2,256.4 598.9,253.9 599.6,245.9 600.3,231.5 601.0,226.1 601.7,230.4 602.4,240.0 603.1,240.6 603.8,233.5 604.5,234.5 605.2,240.2 605.8,241.2 606.5,240.5 607.2,240.9 607.9,249.5 608.6,259.6 609.3,259.9 610.0,237.3 610.7,225.9 611.4,226.2 612.1,235.2 612.8,255.5 613.4,271.8 614.1,251.1 614.8,242.6 615.5,230.4 616.2,222.3 616.9,222.4 617.6,222.4 618.3,222.4 619.0,226.2 619.7,230.0 620.4,235.3 621.1,247.2 621.7,268.9 622.4,256.9 623.1,245.9 623.8,243.4 624.5,244.0 625.2,248.9 625.9,260.1 626.6,242.6 627.3,230.3 628.0,225.0 628.7,222.6 629.3,222.6 630.0,222.6 630.7,222.6 631.4,222.6 632.1,223.5 632.8,228.6 633.5,230.8 634.2,233.0 634.9,239.0 635.6,249.2 636.3,246.1 637.0,241.0 637.6,244.7 638.3,245.7 639.0,238.2 639.7,240.3 640.4,258.6 641.1,258.6 641.8,243.7 642.5,232.3 643.2,224.2 643.9,222.9 644.6,226.1 645.3,232.6 645.9,240.8 646.6,249.1 647.3,244.2 648.0,236.8 648.7,230.9 649.4,228.0 650.1,229.1 650.8,235.4 651.5,255.7 652.2,254.6 652.9,234.3 653.5,228.7 654.2,231.8 654.9,243.4 655.6,255.1 656.3,258.0 657.0,258.2 657.7,255.2 658.4,245.0 659.1,240.8 659.8,244.9 660.5,249.9 661.2,248.8 661.8,247.0 662.5,250.2 663.2,253.9 663.9,260.1 664.6,274.4 665.3,273.4 666.0,261.9 666.7,257.6 667.4,256.6" stroke="#00ffff"/>
<polyline points="380.7,189.9 382.3,171.4 383.9,165.3 385.5,151.8 387.1,130.1 388.8,129.7 390.4,119.6 392.0,157.5 393.6,109.5 395.2,139.9 396.8,118.0 398.4,130.2 400.1,108.0 401.7,167.7 403.3,131.9 404.9,129.8 406.5,114.5 408.1,121.0 409.7,173.2 411.3,147.0 413.0,129.8 414.6,179.7 416.2,112.2 417.8,123.3 419.4,108.3 421.0,130.5 422.6,133.8 424.2,138.7 425.9,117.0 427.5,116.3 429.1,123.8 430.7,138.7 432.3,131.9 433.9,113.5 435.5,124.0 437.2,139.8 438.8,121.3 440.4,135.4 442.0,126.3 443.6,133.4 445.2,149.2 446.8,115.7 448.4,124.0 450.1,147.2 451.7,128.2 453.3,127.6 454.9,129.9 456.5,151.5 458.1,133.1 459.7,138.7 461.4,129.7 463.0,146.1 464.6,164.8 466.2,168.1 467.8,111.6 469.4,151.1 471.0,130.9 472.6,125.4 474.3,116.4 475.9,138.7 477.5,131.6 479.1,146.4 480.7,120.9 482.3,167.1 483.9,147.7 485.5,124.4 487.2,136.9 488.8,120.5 490.4,112.2 492.0,131.4 493.6,133.2 495.2,126.6 496.8,132.6 498.5,128.2 500.1,116.6 501.7,156.7 503.3,134.9 504.9,124.3 506.5,115.4 508.1,125.0 509.7,180.0 511.4,119.2 513.0,132.9 514.6,150.3 516.2,133.8 517.8,137.2 519.4,121.3 521.0,126.8 522.7,131.6 524.3,130.0 525.9,135.7 527.5,125.7 529.1,149.1 530.7,180.1 532.3,176.6 533.9,152.1 535.6,160.3 537.2,145.6 538.8,161.4 540.4,195.3 542.0,179.2 543.6,164.9 545.2,204.1 546.8,189.1 548.5,200.4 550.1,223.8 551.7,214.7 553.3,190.5 554.0,191.4 554.7,193.0 555.4,197.9 556.1,198.7 556.8,199.8 557.4,200.9 558.1,202.5 558.8,206.6 559.5,212.7 560.2,221.8 560.9,215.2 561.6,213.1 562.3,212.3 563.0,214.5 563.7,220.2 564.4,232.6 565.1,244.3 565.7,231.3 566.4,224.0 567.1,222.5 567.8,224.0 568.5,229.7 569.2,241.1 569.9,247.7 570.6,234.6 571.3,228.7 572.0,226.9 572.7,229.3 573.3,233.7 574.0,244.5 574.7,246.8 575.4,233.6 576.1,228.1 576.8,224.8 577.5,226.1 578.2,232.0 578.9,244.6 579.6,244.6 580.3,231.9 581.0,226.8 581.6,224.9 582.3,227.4 583.0,233.8 583.7,247.2 584.4,245.0 585.1,232.6 585.8,227.7 586.5,226.0 587.2,228.1 587.9,235.3 588.6,249.0 589.3,242.5 589.9,231.4 590.6,225.8 591.3,224.4 592.0,227.8 592.7,236.2 593.4,251.7 594.1,242.2 594.8,231.2 595.5,227.7 596.2,227.6 596.9,231.5 597.5,239.7 598.2,254.4 598.9,241.1 599.6,230.6 600.3,226.4 601.0,227.0 601.7,228.9 602.4,236.6 603.1,253.6 603.8,237.7 604.5,229.4 605.2,225.7 605.8,226.3 606.5,230.0 607.2,238.9 607.9,258.4 608.6,239.9 609.3,231.1 610.0,228.4 610.7,229.4 611.4,234.0 612.1,243.3 612.8,258.2 613.4,240.5 614.1,232.6 614.8,229.1 615.5,228.9 616.2,233.0 616.9,243.1 617.6,254.2 618.3,239.3 619.0,231.8 619.7,228.6 620.4,230.4 621.1,235.8 621.7,246.8 622.4,254.7 623.1,238.7 623.8,232.3 624.5,228.8 625.2,230.7 625.9,235.5 626.6,246.3 627.3,251.1 628.0,237.1 628.7,230.3 629.3,228.2 630.0,228.7 630.7,233.8 631.4,245.4 632.1,248.7 632.8,235.4 633.5,229.1 634.2,228.7 634.9,229.8 635.6,235.8 636.3,248.9 637.0,248.6 637.6,235.9 638.3,229.2 639.0,227.2 639.7,229.8 640.4,234.5 641.1,249.6 641.8,245.7 642.5,234.3 643.2,229.0 643.9,228.9 644.6,231.3 645.3,238.7 645.9,252.7 646.6,246.6 647.3,235.0 648.0,230.2 648.7,229.9 649.4,232.5 650.1,238.0 650.8,254.1 651.5,242.5 652.2,232.4 652.9,226.6 653.5,226.9 654.2,229.8 654.9,237.0 655.6,253.8 656.3,241.6 657.0,233.2 657.7,229.5 658.4,229.2 659.1,234.2 659.8,242.4 660.5,261.0 661.2,243.9 661.8,235.1 662.5,230.9 663.2,229.8 663.9,233.8 664.6,243.5 665.3,260.3 666.0,241.7 666.7,233.3 667.4,230.0" stroke="#ff00ff"/>
<polyline points="380.7,176.2 382.3,185.6 383.9,160.1 385.5,160.3 387.1,148.4 388.8,148.3 390.4,125.6 392.0,105.3 393.6,127.5 395.2,109.3 396.8,125.8 398.4,117.5 400.1,139.1 401.7,116.0 403.3,145.6 404.9,111.1 406.5,120.1 408.1,123.8 409.7,106.7 411.3,114.4 413.0,103.4 414.6,115.0 416.2,125.6 417.8,129.0 419.4,135.6 421.0,108.5 422.6,122.8 424.2,121.5 425.9,115.6 427.5,105.4 429.1,148.5 430.7,166.5 432.3,111.8 433.9,104.3 435.5,126.6 437.2,135.4 438.8,108.6 440.4,126.6 442.0,115.4 443.6,146.9 445.2,104.8 446.8,107.9 448.4,126.6 450.1,130.0 451.7,157.5 453.3,118.0 454.9,142.6 456.5,114.5 458.1,125.9 459.7,121.1 461.4,135.9 463.0,121.7 464.6,146.5 466.2,137.4 467.8,121.4 469.4,117.5 471.0,106.2 472.6,132.2 474.3,134.2 475.9,158.5 477.5,118.3 479.1,127.9 480.7,120.7 482.3,133.5 483.9,123.9 485.5,132.5 487.2,110.4 488.8,133.7 490.4,116.0 492.0,125.3 493.6,131.6 495.2,118.2 496.8,139.7 498.5,174.4 500.1,136.4 501.7,140.3 503.3,112.1 504.9,126.4 506.5,180.6 508.1,117.5 509.7,124.2 511.4,161.2 513.0,126.3 514.6,153.9 516.2,110.3 517.8,127.7 519.4,140.6 521.0,118.8 522.7,116.3 524.3,147.9 525.9,119.4 527.5,125.4 529.1,131.1 530.7,150.3 532.3,152.7 533.9,160.9 535.6,137.1 537.2,158.8 538.8,159.8 540.4,193.6 542.0,155.5 543.6,170.1 545.2,180.9 546.8,193.7 548.5,182.9 550.1,215.6 551.7,194.2 553.3,202.4 554.0,203.2 554.7,208.9 555.4,212.2 556.1,221.6 556.8,218.7 557.4,217.9 558.1,219.8 558.8,223.7 559.5,229.6 560.2,232.9 560.9,234.2 561.6,238.4 562.3,244.0 563.0,249.3 563.7,251.7 564.4,255.5 565.1,271.4 565.7,255.6 566.4,243.5 567.1,245.7 567.8,261.2 568.5,319.5 569.2,277.4 569.9,266.6 570.6,261.5 571.3,260.9 572.0,258.8 572.7,253.5 573.3,248.2 574.0,245.9 574.7,248.4 575.4,256.0 576.1,266.9 576.8,284.3 577.5,303.2 578.2,289.7 578.9,280.1 579.6,271.6 580.3,260.3 581.0,253.9 581.6,257.2 582.3,268.0 583.0,262.3 583.7,250.7 584.4,244.4 585.1,244.0 585.8,250.6 586.5,272.7 587.2,256.9 587.9,246.2 588.6,250.4 589.3,278.3 589.9,269.1 590.6,254.6 591.3,252.5 592.0,250.4 592.7,254.4 593.4,270.2 594.1,283.5 594.8,264.5 595.5,256.5 596.2,254.4 596.9,255.3 597.5,258.5 598.2,264.8 598.9,267.8 599.6,271.9 600.3,281.4 601.0,292.6 601.7,299.0 602.4,267.2 603.1,257.4 603.8,258.6 604.5,261.9 605.2,260.6 605.8,257.9 606.5,257.2 607.2,260.7 607.9,259.1 608.6,252.4 609.3,254.7 610.0,274.0 610.7,271.5 611.4,254.2 612.1,255.0 612.8,269.5 613.4,289.1 614.1,277.8 614.8,254.0 615.5,245.9 616.2,248.1 616.9,260.2 617.6,293.2 618.3,264.2 619.0,250.3 619.7,243.2 620.4,240.1 621.1,243.0 621.7,252.6 622.4,257.9 623.1,254.0 623.8,251.7 624.5,250.9 625.2,247.4 625.9,241.5 626.6,238.4 627.3,242.2 628.0,257.8 628.7,295.6 629.3,250.8 630.0,241.3 630.7,241.3 631.4,247.5 632.1,260.0 632.8,270.3 633.5,275.2 634.2,272.3 634.9,264.9 635.6,266.1 636.3,261.3 637.0,254.2 637.6,250.8 638.3,251.4 639.0,253.8 639.7,256.7 640.4,259.7 641.1,253.5 641.8,244.5 642.5,240.8 643.2,243.8 643.9,252.6 644.6,253.9 645.3,242.8 645.9,238.3 646.6,238.4 647.3,247.3 648.0,270.7 648.7,288.7 649.4,269.3 650.1,253.9 650.8,250.4 651.5,258.3 652.2,276.8 652.9,256.6 653.5,248.6 654.2,249.4 654.9,257.0 655.6,259.8 656.3,247.4 657.0,240.2 657.7,240.5 658.4,248.1 659.1,258.9 659.8,256.0 660.5,250.8 661.2,248.0 661.8,248.8 662.5,252.7 663.2,255.8 663.9,251.7 664.6,245.0 665.3,241.8 666.0,243.0 666.7,248.3 667.4,255.7" stroke="#800000"/>
<polyline points="380.7,228.6 382.3,168.5 383.9,155.6 385.5,171.9 387.1,135.2 388.8,153.3 390.4,114.5 392.0,109.9 393.6,135.9 395.2,117.3 396.8,127.3 398.4,136.9 400.1,124.9 401.7,129.4 403.3,122.5 404.9,111.0 406.5,125.6 408.1,129.0 409.7,124.3 411.3,110.7 413.0,131.0 414.6,127.9 416.2,121.7 417.8,123.0 419.4,121.2 421.0,132.3 422.6,144.7 424.2,185.9 425.9,126.9 427.5,129.6 429.1,111.5 430.7,143.1 432.3,124.0 433.9,121.7 435.5,122.0 437.2,134.5 438.8,135.0 440.4,110.7 442.0,120.0 443.6,114.9 445.2,107.9 446.8,165.2 448.4,142.5 450.1,139.2 451.7,132.9 453.3,145.8 454.9,132.3 456.5,135.9 458.1,117.5 459.7,144.8 461.4,119.5 463.0,127.9 464.6,112.1 466.2,131.2 467.8,130.1 469.4,116.1 471.0,110.8 472.6,119.0 474.3,125.5 475.9,112.5 477.5,122.4 479.1,117.9 480.7,141.1 482.3,133.7 483.9,114.9 485.5,157.4 487.2,110.4 488.8,145.3 490.4,175.8 492.0,140.2 493.6,114.4 495.2,133.7 496.8,111.9 498.5,120.2 500.1,111.3 501.7,168.1 503.3,124.4 504.9,137.4 506.5,133.8 508.1,142.8 509.7,136.9 511.4,121.5 513.0,112.3 514.6,147.5 516.2,138.2 517.8,112.6 519.4,173.4 521.0,152.2 522.7,141.7 524.3,146.2 525.9,136.4 527.5,135.2 529.1,122.8 530.7,196.4 532.3,140.5 533.9,145.7 535.6,145.6 537.2,160.8 538.8,188.7 540.4,157.7 542.0,166.6 543.6,182.9 545.2,183.4 546.8,205.4 548.5,195.7 550.1,198.6 551.7,197.9 553.3,224.2 554.0,225.0 554.7,225.6 555.4,227.3 556.1,227.9 556.8,226.3 557.4,225.2 558.1,225.2 558.8,226.2 559.5,229.6 560.2,236.7 560.9,229.1 561.6,224.8 562.3,222.1 563.0,222.3 563.7,225.5 564.4,233.8 565.1,234.8 565.7,225.5 566.4,220.8 567.1,219.8 567.8,223.5 568.5,230.5 569.2,245.4 569.9,233.0 570.6,226.3 571.3,223.9 572.0,224.1 572.7,229.2 573.3,239.7 574.0,242.2 574.7,231.1 575.4,226.5 576.1,224.8 576.8,227.1 577.5,233.1 578.2,247.0 578.9,237.3 579.6,228.1 580.3,224.6 581.0,224.9 581.6,228.6 582.3,237.8 583.0,244.7 583.7,232.4 584.4,226.3 585.1,225.0 585.8,227.7 586.5,234.9 587.2,246.5 587.9,240.1 588.6,230.9 589.3,227.9 589.9,227.6 590.6,231.3 591.3,239.3 592.0,249.1 592.7,235.3 593.4,228.9 594.1,227.2 594.8,229.3 595.5,234.5 596.2,245.6 596.9,242.9 597.5,233.3 598.2,229.2 598.9,228.0 599.6,232.2 600.3,239.3 601.0,254.1 601.7,238.4 602.4,230.6 603.1,228.0 603.8,227.8 604.5,232.2 605.2,243.4 605.8,243.5 606.5,232.3 607.2,226.6 607.9,226.4 608.6,229.2 609.3,236.5 610.0,250.9 610.7,239.4 611.4,230.6 612.1,227.2 612.8,228.5 613.4,232.8 614.1,242.2 614.8,247.0 615.5,234.8 616.2,229.7 616.9,227.1 617.6,230.2 618.3,236.7 619.0,249.5 619.7,241.3 620.4,231.8 621.1,227.6 621.7,227.6 622.4,231.1 623.1,240.4 623.8,247.2 624.5,234.5 625.2,227.6 625.9,224.3 626.6,227.1 627.3,232.7 628.0,244.7 628.7,240.8 629.3,232.3 630.0,228.4 630.7,228.2 631.4,232.1 632.1,240.7 632.8,251.7 633.5,239.6 634.2,233.9 634.9,229.9 635.6,230.5 636.3,235.3 637.0,246.8 637.6,244.5 638.3,233.6 639.0,228.3 639.7,226.6 640.4,228.7 641.1,237.4 641.8,252.4 642.5,237.9 643.2,229.8 643.9,227.4 644.6,228.6 645.3,233.6 645.9,243.9 646.6,245.8 647.3,234.4 648.0,229.9 648.7,228.0 649.4,230.0 650.1,236.8 650.8,251.4 651.5,239.6 652.2,232.7 652.9,229.1 653.5,229.8 654.2,234.5 654.9,244.7 655.6,249.5 656.3,236.5 657.0,230.8 657.7,229.2 658.4,230.6 659.1,236.5 659.8,249.0 660.5,240.0 661.2,230.8 661.8,228.4 662.5,229.7 663.2,233.1 663.9,241.6 664.6,249.0 665.3,236.0 666.0,229.8 666.7,227.1 667.4,229.3" stroke="#008000"/>
<polyline points="380.7,189.2 382.3,196.2 383.9,160.6 385.5,155.3 387.1,158.0 388.8,140.8 390.4,158.7 392.0,179.0 393.6,121.6 395.2,148.1 396.8,129.6 398.4,141.2 400.1,126.5 401.7,145.4 403.3,133.7 404.9,127.1 406.5,115.0 408.1,148.8 409.7,147.6 411.3,160.3 413.0,122.3 414.6,115.4 416.2,193.0 417.8,143.5 419.4,120.7 421.0,134.7 422.6,135.7 424.2,118.0 425.9,131.3 427.5,147.9 429.1,166.3 430.7,116.1 432.3,131.8 433.9,125.0 435.5,168.7 437.2,132.5 438.8,134.5 440.4,131.6 442.0,140.7 443.6,122.9 445.2,135.9 446.8,160.1 448.4,171.9 450.1,143.2 451.7,167.9 453.3,140.8 454.9,129.3 456.5,117.8 458.1,149.0 459.7,170.3 461.4,198.7 463.0,124.1 464.6,168.7 466.2,132.2 467.8,126.0 469.4,138.2 471.0,122.3 472.6,167.0 474.3,125.8 475.9,122.6 477.5,134.8 479.1,121.7 480.7,159.6 482.3,122.5 483.9,135.4 485.5,131.1 487.2,136.0 488.8,161.3 490.4,132.4 492.0,119.6 493.6,121.3 495.2,135.7 496.8,133.1 498.5,140.7 500.1,128.5 501.7,125.0 503.3,120.4 504.9,140.9 506.5,134.6 508.1,128.2 509.7,138.9 511.4,164.8 513.0,139.4 514.6,144.9 516.2,125.7 517.8,152.3 519.4,131.8 521.0,148.1 522.7,135.1 524.3,161.7 525.9,136.1 527.5,131.8 529.1,158.2 530.7,154.8 532.3,160.4 533.9,179.2 535.6,185.6 537.2,159.6 538.8,161.0 540.4,185.2 542.0,174.6 543.6,220.7 545.2,201.2 546.8,194.2 548.5,213.7 550.1,206.5 551.7,203.5 553.3,229.3 554.0,230.2 554.7,222.7 555.4,223.4 556.1,223.7 556.8,224.3 557.4,226.2 558.1,233.1 558.8,242.8 559.5,230.9 560.2,231.8 560.9,240.8 561.6,237.2 562.3,232.7 563.0,235.4 563.7,244.1 564.4,247.8 565.1,246.1 565.7,254.7 566.4,243.9 567.1,229.0 567.8,220.7 568.5,220.4 569.2,221.7 569.9,232.5 570.6,247.7 571.3,245.2 572.0,235.6 572.7,230.0 573.3,227.2 574.0,227.6 574.7,235.1 575.4,255.9 576.1,266.6 576.8,247.1 577.5,251.2 578.2,254.5 578.9,250.5 579.6,249.8 580.3,241.6 581.0,240.8 581.6,247.7 582.3,242.7 583.0,229.2 583.7,223.5 584.4,224.0 585.1,230.9 585.8,240.0 586.5,247.1 587.2,250.7 587.9,265.7 588.6,310.3 589.3,274.5 589.9,272.6 590.6,265.2 591.3,253.0 592.0,249.0 592.7,244.5 593.4,238.2 594.1,236.6 594.8,241.9 595.5,250.6 596.2,250.2 596.9,241.1 597.5,230.5 598.2,228.0 598.9,232.6 599.6,237.7 600.3,247.9 601.0,292.0 601.7,251.6 602.4,244.3 603.1,233.7 603.8,225.1 604.5,225.1 605.2,225.1 605.8,227.8 606.5,229.9 607.2,230.2 607.9,231.6 608.6,237.8 609.3,248.1 610.0,257.8 610.7,256.9 611.4,258.1 612.1,275.5 612.8,284.1 613.4,265.4 614.1,263.7 614.8,266.6 615.5,266.5 616.2,274.1 616.9,274.9 617.6,258.7 618.3,255.2 619.0,248.3 619.7,237.0 620.4,230.8 621.1,228.6 621.7,229.6 622.4,233.4 623.1,237.4 623.8,237.6 624.5,240.6 625.2,248.6 625.9,261.2 626.6,272.9 627.3,252.2 628.0,246.3 628.7,262.3 629.3,264.8 630.0,241.3 630.7,236.7 631.4,239.7 632.1,251.0 632.8,283.3 633.5,249.7 634.2,233.0 634.9,227.0 635.6,228.1 636.3,235.1 637.0,244.3 637.6,243.2 638.3,235.7 639.0,232.2 639.7,235.8 640.4,245.0 641.1,257.8 641.8,257.4 642.5,245.0 643.2,239.4 643.9,237.9 644.6,239.9 645.3,245.9 645.9,250.7 646.6,245.6 647.3,237.9 648.0,234.6 648.7,233.4 649.4,235.7 650.1,242.3 650.8,255.2 651.5,254.1 652.2,242.8 652.9,235.4 653.5,230.4 654.2,229.8 654.9,233.9 655.6,236.8 656.3,237.1 657.0,241.9 657.7,254.2 658.4,265.8 659.1,271.4 659.8,268.1 660.5,267.7 661.2,269.4 661.8,248.0 662.5,240.1 663.2,241.5 663.9,248.4 664.6,253.6 665.3,252.8 666.0,252.8 666.7,258.2 667.4,272.7" stroke="#000080"/>
<polyline points="380.7,192.8 382.3,173.6 383.9,174.8 385.5,133.0 387.1,177.1 388.8,144.7 390.4,132.8 392.0,125.2 393.6,125.2 395.2,106.5 396.8,137.8 398.4,120.5 400.1,128.0 401.7,126.4 403.3,133.2 404.9,121.8 406.5,115.0 408.1,148.8 409.7,138.2 411.3,126.4 413.0,133.2 414.6,112.1 416.2,120.0 417.8,116.1 419.4,124.7 421.0,138.5 422.6,168.1 424.2,165.0 425.9,123.0 427.5,111.9 429.1,135.2 430.7,123.9 432.3,125.9 433.9,108.4 435.5,128.4 437.2,124.6 438.8,109.6 440.4,106.5 442.0,111.4 443.6,125.8 445.2,110.1 446.8,115.9 448.4,120.5 450.1,118.9 451.7,106.6 453.3,139.2 454.9,106.7 456.5,140.6 458.1,110.2 459.7,143.1 461.4,110.1 463.0,127.3 464.6,117.0 466.2,115.2 467.8,115.2 469.4,125.8 471.0,123.2 472.6,128.7 474.3,121.0 475.9,109.7 477.5,117.6 479.1,123.4 480.7,121.4 482.3,132.8 483.9,144.2 485.5,116.4 487.2,124.8 488.8,123.1 490.4,131.0 492.0,126.6 493.6,113.5 495.2,142.0 496.8,124.2 498.5,159.1 500.1,155.8 501.7,155.5 503.3,147.7 504.9,136.1 506.5,138.3 508.1,110.7 509.7,132.8 511.4,114.4 513.0,118.0 514.6,151.0 516.2,133.3 517.8,112.4 519.4,113.0 521.0,138.2 522.7,126.9 524.3,126.6 525.9,120.6 527.5,172.8 529.1,136.8 530.7,177.4 532.3,127.9 533.9,148.0 535.6,150.4 537.2,156.8 538.8,164.6 540.4,159.7 542.0,164.2 543.6,174.9 545.2,185.8 546.8,194.9 548.5,179.1 550.1,199.0 551.7,216.1 553.3,277.0 554.0,277.8 554.7,275.9 555.4,272.0 556.1,268.2 556.8,265.1 557.4,263.1 558.1,260.3 558.8,254.0 559.5,247.9 560.2,242.6 560.9,239.5 561.6,236.8 562.3,236.4 563.0,233.8 563.7,225.4 564.4,217.6 565.1,213.2 565.7,211.3 566.4,216.5 567.1,223.7 567.8,226.2 568.5,221.1 569.2,218.4 569.9,216.6 570.6,217.7 571.3,221.0 572.0,227.6 572.7,229.1 573.3,221.6 574.0,218.0 574.7,214.6 575.4,214.4 576.1,217.6 576.8,223.1 577.5,225.4 578.2,218.4 578.9,215.0 579.6,213.7 580.3,213.6 581.0,218.2 581.6,224.8 582.3,228.3 583.0,222.6 583.7,219.2 584.4,217.4 585.1,217.6 585.8,220.2 586.5,227.2 587.2,230.7 587.9,224.7 588.6,219.7 589.3,217.7 589.9,218.3 590.6,221.6 591.3,227.2 592.0,230.4 592.7,222.8 593.4,219.1 594.1,217.0 594.8,218.1 595.5,220.9 596.2,225.9 596.9,229.6 597.5,221.9 598.2,218.3 598.9,217.0 599.6,217.1 600.3,219.8 601.0,225.8 601.7,230.0 602.4,223.7 603.1,220.3 603.8,219.1 604.5,219.5 605.2,221.2 605.8,227.5 606.5,231.8 607.2,224.4 607.9,220.2 608.6,218.0 609.3,217.8 610.0,221.1 610.7,226.4 611.4,231.5 612.1,223.7 612.8,220.1 613.4,218.6 614.1,219.0 614.8,221.9 615.5,227.3 616.2,231.3 616.9,223.4 617.6,219.6 618.3,218.5 619.0,218.8 619.7,220.7 620.4,226.0 621.1,230.8 621.7,224.2 622.4,219.6 623.1,218.4 623.8,219.0 624.5,220.9 625.2,226.3 625.9,232.3 626.6,224.3 627.3,219.1 628.0,216.3 628.7,218.2 629.3,221.1 630.0,226.1 630.7,231.1 631.4,223.2 632.1,218.4 632.8,217.7 633.5,218.9 634.2,221.5 634.9,225.7 635.6,231.8 636.3,224.5 637.0,220.4 637.6,218.1 638.3,218.9 639.0,221.2 639.7,227.3 640.4,233.5 641.1,226.3 641.8,221.4 642.5,219.2 643.2,219.8 643.9,222.7 644.6,227.6 645.3,234.1 645.9,226.5 646.6,222.8 647.3,221.1 648.0,220.2 648.7,222.0 649.4,226.3 650.1,233.4 650.8,225.2 651.5,220.8 652.2,218.8 652.9,218.2 653.5,219.8 654.2,225.9 654.9,233.3 655.6,226.8 656.3,222.3 657.0,220.6 657.7,220.0 658.4,221.2 659.1,226.5 659.8,234.9 660.5,227.0 661.2,222.6 661.8,220.4 662.5,220.6 663.2,223.0 663.9,228.0 664.6,236.7 665.3,228.7 666.0,223.1 666.7,221.0 667.4,220.9" stroke="#808000"/>
<polyline points="380.7,196.9 382.3,186.2 383.9,159.5 385.5,159.4 387.1,138.9 388.8,134.4 390.4,141.1 392.0,165.9 393.6,137.6 395.2,111.3 396.8,182.6 398.4,147.0 400.1,114.3 401.7,137.2 403.3,129.0 404.9,154.5 406.5,134.4 408.1,113.8 409.7,130.8 411.3,138.5 413.0,115.0 414.6,129.8 416.2,129.3 417.8,113.0 419.4,139.0 421.0,128.8 422.6,119.5 424.2,118.1 425.9,145.9 427.5,134.1 429.1,125.5 430.7,118.1 432.3,131.9 433.9,177.4 435.5,155.5 437.2,149.1 438.8,155.0 440.4,152.9 442.0,115.0 443.6,111.5 445.2,156.7 446.8,114.7 448.4,153.4 450.1,152.2 451.7,137.5 453.3,115.9 454.9,112.0 456.5,126.5 458.1,192.3 459.7,121.2 461.4,115.8 463.0,119.3 464.6,112.5 466.2,128.4 467.8,121.8 469.4,172.0 471.0,120.9 472.6,126.7 474.3,131.9 475.9,133.2 477.5,117.4 479.1,125.2 480.7,168.0 482.3,142.0 483.9,165.4 485.5,120.0 487.2,148.2 488.8,123.4 490.4,148.0 492.0,136.4 493.6,136.3 495.2,132.3 496.8,119.6 498.5,150.7 500.1,141.1 501.7,200.2 503.3,202.2 504.9,148.0 506.5,150.5 508.1,181.8 509.7,127.2 511.4,159.7 513.0,136.0 514.6,141.3 516.2,137.7 517.8,117.9 519.4,125.0 521.0,129.3 522.7,177.1 524.3,148.9 525.9,169.4 527.5,132.5 529.1,128.9 530.7,152.5 532.3,142.0 533.9,147.9 535.6,153.2 537.2,149.4 538.8,172.4 540.4,185.3 542.0,213.7 543.6,184.1 545.2,189.5 546.8,190.5 548.5,206.3 550.1,221.7 551.7,209.1 553.3,202.4 554.0,203.2 554.7,203.1 555.4,204.3 556.1,205.0 556.8,205.6 557.4,207.2 558.1,210.3 558.8,214.9 559.5,225.4 560.2,219.8 560.9,215.4 561.6,213.9 562.3,214.6 563.0,218.5 563.7,225.8 564.4,241.4 565.1,231.0 565.7,221.8 566.4,218.9 567.1,219.5 567.8,223.8 568.5,231.4 569.2,248.6 569.9,237.5 570.6,229.5 571.3,226.3 572.0,226.0 572.7,227.6 573.3,234.9 574.0,249.9 574.7,240.1 575.4,229.7 576.1,224.0 576.8,222.7 577.5,225.2 578.2,232.4 578.9,248.4 579.6,240.1 580.3,229.6 581.0,224.7 581.6,223.7 582.3,227.0 583.0,234.8 583.7,249.5 584.4,241.8 585.1,230.6 585.8,226.2 586.5,225.9 587.2,228.4 587.9,235.2 588.6,249.2 589.3,242.3 589.9,231.0 590.6,226.2 591.3,225.6 592.0,228.0 592.7,234.1 593.4,247.3 594.1,242.7 594.8,231.6 595.5,226.8 596.2,226.5 596.9,228.8 597.5,234.7 598.2,247.3 598.9,244.8 599.6,233.4 600.3,228.8 601.0,227.3 601.7,228.5 602.4,234.3 603.1,246.7 603.8,245.3 604.5,233.9 605.2,228.2 605.8,226.0 606.5,227.8 607.2,232.9 607.9,247.0 608.6,247.0 609.3,235.1 610.0,228.9 610.7,225.9 611.4,227.3 612.1,233.8 612.8,245.8 613.4,247.1 614.1,233.0 614.8,227.3 615.5,225.2 616.2,227.0 616.9,232.9 617.6,244.6 618.3,248.1 619.0,234.9 619.7,228.9 620.4,227.0 621.1,228.3 621.7,233.8 622.4,244.6 623.1,250.0 623.8,236.5 624.5,229.4 625.2,226.8 625.9,228.5 626.6,233.8 627.3,244.4 628.0,250.4 628.7,237.1 629.3,230.8 630.0,228.2 630.7,229.3 631.4,235.2 632.1,246.3 632.8,253.3 633.5,239.4 634.2,231.8 634.9,228.6 635.6,228.8 636.3,233.1 637.0,242.5 637.6,250.7 638.3,235.1 639.0,228.2 639.7,225.1 640.4,225.8 641.1,231.0 641.8,240.1 642.5,250.5 643.2,236.3 643.9,228.6 644.6,225.6 645.3,226.3 645.9,230.5 646.6,241.7 647.3,254.1 648.0,238.8 648.7,231.3 649.4,227.2 650.1,228.8 650.8,233.7 651.5,243.8 652.2,257.7 652.9,240.4 653.5,232.3 654.2,229.5 654.9,230.9 655.6,235.9 656.3,244.1 657.0,259.6 657.7,242.0 658.4,233.7 659.1,230.9 659.8,230.4 660.5,234.1 661.2,242.8 661.8,260.4 662.5,242.3 663.2,233.7 663.9,230.6 664.6,229.7 665.3,232.7 666.0,241.8 666.7,260.2 667.4,241.3" stroke="#800080"/>
<polyline points="380.7,193.3 382.3,180.6 383.9,204.6 385.5,157.2 387.1,144.1 388.8,125.2 390.4,127.8 392.0,186.1 393.6,131.3 395.2,132.8 396.8,141.2 398.4,119.2 400.1,129.6 401.7,127.2 403.3,148.2 404.9,140.2 406.5,145.0 408.1,120.4 409.7,127.0 411.3,115.4 413.0,125.8 414.6,120.6 416.2,178.6 417.8,130.4 419.4,132.7 421.0,138.5 422.6,118.6 424.2,146.6 425.9,125.2 427.5,151.2 429.1,132.9 430.7,127.8 432.3,134.5 433.9,123.7 435.5,165.7 437.2,121.2 438.8,127.6 440.4,128.2 442.0,134.2 443.6,119.8 445.2,149.7 446.8,141.0 448.4,136.9 450.1,143.3 451.7,139.0 453.3,134.5 454.9,163.3 456.5,150.7 458.1,140.1 459.7,117.6 461.4,146.7 463.0,148.6 464.6,130.5 466.2,118.6 467.8,141.5 469.4,121.4 471.0,130.0 472.6,138.6 474.3,142.9 475.9,167.9 477.5,132.2 479.1,133.7 480.7,129.0 482.3,135.2 483.9,119.2 485.5,130.5 487.2,129.0 488.8,150.3 490.4,123.2 492.0,137.6 493.6,143.0 495.2,160.3 496.8,145.0 498.5,152.0 500.1,132.4 501.7,127.6 503.3,146.8 504.9,123.3 506.5,128.2 508.1,154.3 509.7,155.7 511.4,185.6 513.0,148.7 514.6,136.7 516.2,166.4 517.8,143.2 519.4,127.8 521.0,121.9 522.7,156.5 524.3,125.3 525.9,135.1 527.5,142.7 529.1,140.3 530.7,176.7 532.3,150.7 533.9,147.6 535.6,195.0 537.2,190.6 538.8,181.5 540.4,167.5 542.0,183.6 543.6,221.4 545.2,181.0 546.8,198.9 548.5,214.2 550.1,203.5 551.7,204.2 553.3,208.3 554.0,209.2 554.7,201.9 555.4,203.8 556.1,207.2 556.8,213.1 557.4,210.8 558.1,210.0 558.8,210.3 559.5,211.8 560.2,215.8 560.9,226.0 561.6,226.4 562.3,220.1 563.0,217.4 563.7,219.3 564.4,223.5 565.1,233.9 565.7,251.0 566.4,233.5 567.1,226.1 567.8,222.6 568.5,224.3 569.2,230.0 569.9,242.4 570.6,242.0 571.3,229.7 572.0,225.1 572.7,224.1 573.3,226.6 574.0,234.9 574.7,253.8 575.4,235.6 576.1,227.9 576.8,224.6 577.5,226.5 578.2,232.7 578.9,245.6 579.6,246.9 580.3,235.3 581.0,229.5 581.6,228.4 582.3,231.2 583.0,239.5 583.7,258.1 584.4,239.6 585.1,230.3 585.8,225.9 586.5,225.6 587.2,231.2 587.9,243.4 588.6,246.3 589.3,233.5 589.9,227.0 590.6,225.3 591.3,229.1 592.0,238.4 592.7,257.5 593.4,242.3 594.1,231.6 594.8,227.2 595.5,227.7 596.2,232.4 596.9,244.9 597.5,248.5 598.2,234.0 598.9,226.9 599.6,224.6 600.3,227.5 601.0,234.6 601.7,250.5 602.4,236.9 603.1,227.3 603.8,223.7 604.5,224.1 605.2,229.5 605.8,240.2 606.5,247.9 607.2,234.6 607.9,228.5 608.6,227.0 609.3,229.3 610.0,236.3 610.7,252.8 611.4,241.8 612.1,232.2 612.8,227.6 613.4,228.0 614.1,233.0 614.8,244.3 615.5,252.4 616.2,238.2 616.9,231.6 617.6,229.2 618.3,231.3 619.0,238.1 619.7,253.4 620.4,244.3 621.1,233.0 621.7,228.2 622.4,227.6 623.1,231.9 623.8,242.0 624.5,252.1 625.2,236.6 625.9,230.2 626.6,227.9 627.3,230.2 628.0,238.4 628.7,253.2 629.3,245.3 630.0,235.3 630.7,232.2 631.4,231.3 632.1,234.7 632.8,243.7 633.5,256.2 634.2,238.1 634.9,230.7 635.6,227.6 636.3,228.8 637.0,234.2 637.6,249.0 638.3,242.6 639.0,232.1 639.7,227.2 640.4,227.6 641.1,231.3 641.8,241.5 642.5,255.0 643.2,237.6 643.9,229.1 644.6,226.9 645.3,227.7 645.9,234.0 646.6,247.7 647.3,244.1 648.0,233.0 648.7,228.0 649.4,227.3 650.1,231.5 650.8,241.2 651.5,257.1 652.2,239.4 652.9,231.0 653.5,228.2 654.2,229.8 654.9,235.2 655.6,248.8 656.3,247.1 657.0,234.7 657.7,230.7 658.4,229.6 659.1,233.1 659.8,242.8 660.5,260.1 661.2,242.1 661.8,233.8 662.5,231.0 663.2,231.4 663.9,235.9 664.6,248.4 665.3,248.4 666.0,235.0 666.7,229.6 667.4,228.3" stroke="#008080"/>
<polyline points="380.7,200.0 382.3,203.9 383.9,157.0 385.5,152.4 387.1,146.9 388.8,140.2 390.4,122.4 392.0,159.7 393.6,109.2 395.2,138.3 396.8,134.7 398.4,127.9 400.1,118.1 401.7,130.0 403.3,140.1 404.9,126.2 406.5,107.5 408.1,125.4 409.7,186.1 411.3,119.9 413.0,112.2 414.6,129.3 416.2,109.2 417.8,162.7 419.4,134.5 421.0,126.5 422.6,136.4 424.2,145.4 425.9,132.4 427.5,106.0 429.1,116.5 430.7,124.8 432.3,135.5 433.9,119.7 435.5,121.6 437.2,137.3 438.8,148.3 440.4,122.6 442.0,161.2 443.6,119.5 445.2,106.8 446.8,126.5 448.4,125.6 450.1,137.5 451.7,142.0 453.3,124.6 454.9,125.1 456.5,114.1 458.1,115.6 459.7,129.6 461.4,148.1 463.0,126.1 464.6,116.0 466.2,119.4 467.8,111.7 469.4,136.0 471.0,108.1 472.6,137.8 474.3,131.5 475.9,108.5 477.5,108.6 479.1,125.1 480.7,153.3 482.3,138.8 483.9,117.4 485.5,128.1 487.2,143.1 488.8,152.5 490.4,116.0 492.0,115.5 493.6,115.4 495.2,123.6 496.8,129.2 498.5,121.3 500.1,130.0 501.7,136.4 503.3,112.9 504.9,168.0 506.5,128.1 508.1,115.4 509.7,110.9 511.4,127.9 513.0,127.9 514.6,135.7 516.2,124.3 517.8,185.2 519.4,136.6 521.0,119.8 522.7,144.8 524.3,126.3 525.9,133.7 527.5,172.1 529.1,130.3 530.7,149.0 532.3,135.3 533.9,148.5 535.6,167.9 537.2,157.0 538.8,157.2 540.4,155.0 542.0,164.8 543.6,192.3 545.2,181.9 546.8,254.0 548.5,196.4 550.1,198.7 551.7,206.6 553.3,196.0 554.0,196.8 554.7,200.2 555.4,201.2 556.1,201.9 556.8,203.1 557.4,205.3 558.1,209.7 558.8,214.0 559.5,210.1 560.2,207.9 560.9,207.6 561.6,208.7 562.3,213.6 563.0,223.3 563.7,221.5 564.4,214.6 565.1,212.8 565.7,213.1 566.4,217.1 567.1,225.6 567.8,241.3 568.5,227.8 569.2,220.7 569.9,218.9 570.6,220.2 571.3,225.5 572.0,235.6 572.7,237.0 573.3,225.0 574.0,219.8 574.7,218.4 575.4,220.2 576.1,226.7 576.8,239.7 577.5,230.0 578.2,220.9 578.9,218.8 579.6,220.0 580.3,221.8 581.0,230.2 581.6,238.8 582.3,227.3 583.0,220.9 583.7,219.2 584.4,221.4 585.1,226.5 585.8,237.3 586.5,234.3 587.2,225.3 587.9,221.5 588.6,219.9 589.3,223.2 589.9,230.5 590.6,245.4 591.3,231.4 592.0,223.5 592.7,221.5 593.4,223.1 594.1,227.6 594.8,238.2 595.5,239.9 596.2,228.9 596.9,223.5 597.5,221.4 598.2,223.8 598.9,230.4 599.6,242.3 600.3,233.8 601.0,224.6 601.7,221.9 602.4,223.0 603.1,226.0 603.8,233.7 604.5,242.4 605.2,229.6 605.8,222.7 606.5,220.8 607.2,223.4 607.9,228.6 608.6,238.8 609.3,235.7 610.0,225.7 610.7,222.3 611.4,221.3 612.1,224.6 612.8,230.9 613.4,243.7 614.1,229.7 614.8,221.5 615.5,219.2 616.2,221.2 616.9,224.5 617.6,234.5 618.3,238.4 619.0,227.5 619.7,222.5 620.4,221.0 621.1,223.2 621.7,229.0 622.4,241.3 623.1,233.4 623.8,224.1 624.5,219.9 625.2,220.2 625.9,223.3 626.6,231.6 627.3,241.7 628.0,229.4 628.7,222.4 629.3,220.8 630.0,223.0 630.7,227.6 631.4,238.9 632.1,237.2 632.8,227.8 633.5,223.4 634.2,223.3 634.9,226.7 635.6,232.6 636.3,246.5 637.0,234.4 637.6,226.4 638.3,223.1 639.0,223.2 639.7,226.6 640.4,235.5 641.1,240.1 641.8,229.7 642.5,223.7 643.2,221.7 643.9,224.0 644.6,230.1 645.3,242.0 645.9,235.7 646.6,226.9 647.3,222.5 648.0,222.6 648.7,226.0 649.4,234.0 650.1,243.1 650.8,230.7 651.5,224.4 652.2,221.0 652.9,221.5 653.5,227.1 654.2,237.3 654.9,236.1 655.6,226.1 656.3,222.0 657.0,220.9 657.7,224.3 658.4,232.0 659.1,245.5 659.8,233.1 660.5,225.3 661.2,222.6 661.8,223.2 662.5,227.1 663.2,236.2 663.9,240.0 664.6,228.4 665.3,223.2 666.0,221.5 666.7,223.7 667.4,229.4" stroke="#ff0000"/>
<polyline points="380.7,211.4 382.3,179.7 383.9,147.5 385.5,159.7 387.1,123.6 388.8,145.5 390.4,126.5 392.0,126.1 393.6,134.7 395.2,141.9 396.8,119.8 398.4,150.4 400.1,115.3 401.7,138.5 403.3,161.5 404.9,117.8 406.5,107.6 408.1,115.9 409.7,115.6 411.3,114.1 413.0,144.4 414.6,130.3 416.2,134.4 417.8,145.5 419.4,126.1 421.0,128.8 422.6,121.4 424.2,130.4 425.9,172.7 427.5,121.0 429.1,135.9 430.7,130.4 432.3,128.0 433.9,138.8 435.5,124.5 437.2,110.0 438.8,134.4 440.4,118.3 442.0,128.8 443.6,121.7 445.2,135.5 446.8,109.1 448.4,117.0 450.1,128.2 451.7,168.5 453.3,129.5 454.9,134.7 456.5,114.6 458.1,142.9 459.7,151.9 461.4,119.4 463.0,128.6 464.6,111.1 466.2,126.5 467.8,110.3 469.4,110.6 471.0,136.9 472.6,110.5 474.3,119.8 475.9,129.1 477.5,172.6 479.1,151.9 480.7,115.3 482.3,115.2 483.9,122.0 485.5,153.9 487.2,149.6 488.8,129.2 490.4,111.8 492.0,155.9 493.6,123.6 495.2,134.0 496.8,128.3 498.5,140.0 500.1,123.0 501.7,137.0 503.3,122.8 504.9,151.2 506.5,123.9 508.1,124.4 509.7,130.2 511.4,149.6 513.0,144.1 514.6,139.6 516.2,114.2 517.8,120.3 519.4,127.3 521.0,114.0 522.7,144.3 524.3,139.2 525.9,123.2 527.5,140.5 529.1,136.5 530.7,136.4 532.3,164.8 533.9,142.0 535.6,146.7 537.2,151.7 538.8,158.3 540.4,176.0 542.0,186.5 543.6,187.4 545.2,228.1 546.8,194.6 548.5,182.8 550.1,209.9 551.7,219.1 553.3,197.1 554.0,197.9 554.7,199.1 555.4,202.2 556.1,203.0 556.8,203.8 557.4,204.8 558.1,206.7 558.8,209.5 559.5,214.9 560.2,218.6 560.9,214.4 561.6,212.2 562.3,211.8 563.0,212.6 563.7,217.2 564.4,226.1 565.1,228.3 565.7,221.2 566.4,218.1 567.1,217.9 567.8,220.3 568.5,226.7 569.2,237.5 569.9,233.5 570.6,226.3 571.3,222.3 572.0,221.4 572.7,223.7 573.3,230.4 574.0,241.2 574.7,231.6 575.4,224.6 576.1,221.5 576.8,221.6 577.5,224.2 578.2,230.4 578.9,239.3 579.6,227.7 580.3,221.1 581.0,219.4 581.6,220.3 582.3,223.4 583.0,230.8 583.7,237.8 584.4,228.7 585.1,224.4 585.8,221.9 586.5,223.3 587.2,226.6 587.9,234.6 588.6,236.7 589.3,227.2 589.9,222.1 590.6,219.7 591.3,220.9 592.0,225.8 592.7,235.0 593.4,232.9 594.1,224.5 594.8,220.0 595.5,218.5 596.2,220.0 596.9,225.2 597.5,235.8 598.2,230.2 598.9,222.9 599.6,220.6 600.3,220.6 601.0,224.2 601.7,231.3 602.4,242.2 603.1,233.5 603.8,226.2 604.5,224.1 605.2,224.1 605.8,226.7 606.5,232.8 607.2,241.0 607.9,229.5 608.6,224.9 609.3,221.6 610.0,223.1 610.7,225.8 611.4,234.0 612.1,238.9 612.8,230.2 613.4,226.2 614.1,224.8 614.8,225.5 615.5,230.9 616.2,239.8 616.9,241.0 617.6,231.4 618.3,226.1 619.0,224.2 619.7,224.9 620.4,230.0 621.1,239.4 621.7,235.7 622.4,226.7 623.1,222.7 623.8,222.7 624.5,225.7 625.2,231.7 625.9,241.3 626.6,233.7 627.3,226.2 628.0,222.9 628.7,223.7 629.3,226.1 630.0,231.6 630.7,242.8 631.4,231.2 632.1,225.6 632.8,223.1 633.5,223.9 634.2,227.2 634.9,234.1 635.6,241.6 636.3,231.3 637.0,225.9 637.6,222.7 638.3,223.8 639.0,228.0 639.7,235.0 640.4,238.7 641.1,229.2 641.8,224.2 642.5,221.9 643.2,223.3 643.9,228.4 644.6,237.3 645.3,236.1 645.9,228.9 646.6,224.4 647.3,223.3 648.0,225.1 648.7,230.9 649.4,240.0 650.1,235.1 650.8,227.3 651.5,225.1 652.2,224.0 652.9,226.3 653.5,232.8 654.2,244.5 654.9,235.9 655.6,230.1 656.3,227.2 657.0,226.0 657.7,228.9 658.4,236.1 659.1,246.2 659.8,234.6 660.5,227.4 661.2,224.7 661.8,224.3 662.5,228.4 663.2,236.4 663.9,241.8 664.6,231.4 665.3,225.9 666.0,223.4 666.7,224.7 667.4,229.2" stroke="#00ff00"/>
<polyline points="380.7,205.7 382.3,186.7 383.9,153.5 385.5,154.3 387.1,153.9 388.8,127.7 390.4,131.4 392.0,108.5 393.6,124.0 395.2,129.6 396.8,156.8 398.4,109.4 400.1,122.7 401.7,106.2 403.3,134.2 404.9,172.6 406.5,137.2 408.1,131.5 409.7,131.1 411.3,113.3 413.0,121.6 414.6,124.2 416.2,132.4 417.8,139.4 419.4,114.0 421.0,115.4 422.6,173.8 424.2,131.4 425.9,111.3 427.5,127.7 429.1,111.8 430.7,120.4 432.3,107.8 433.9,109.8 435.5,139.7 437.2,115.1 438.8,128.7 440.4,126.4 442.0,130.5 443.6,165.5 445.2,121.7 446.8,144.4 448.4,110.0 450.1,127.1 451.7,112.7 453.3,113.2 454.9,122.1 456.5,111.0 458.1,117.2 459.7,115.6 461.4,125.4 463.0,149.3 464.6,114.0 466.2,141.8 467.8,109.2 469.4,114.3 471.0,123.0 472.6,138.7 474.3,151.5 475.9,123.3 477.5,141.2 479.1,121.2 480.7,158.1 482.3,131.6 483.9,133.8 485.5,115.5 487.2,129.4 488.8,118.1 490.4,140.9 492.0,124.5 493.6,116.7 495.2,115.7 496.8,142.4 498.5,130.9 500.1,134.6 501.7,111.9 503.3,157.9 504.9,156.2 506.5,137.0 508.1,167.9 509.7,112.9 511.4,131.6 513.0,114.2 514.6,155.3 516.2,112.7 517.8,142.0 519.4,156.5 521.0,120.3 522.7,114.3 524.3,136.3 525.9,150.5 527.5,142.3 529.1,128.9 530.7,152.0 532.3,129.7 533.9,163.6 535.6,163.3 537.2,157.4 538.8,155.1 540.4,194.9 542.0,168.3 543.6,170.1 545.2,181.0 546.8,211.0 548.5,195.4 550.1,261.1 551.7,199.8 553.3,208.7 554.0,209.6 554.7,213.7 555.4,216.6 556.1,217.7 556.8,219.0 557.4,221.7 558.1,226.6 558.8,238.7 559.5,240.0 560.2,236.2 560.9,240.1 561.6,246.5 562.3,254.4 563.0,268.1 563.7,320.4 564.4,276.5 565.1,271.4 565.7,277.8 566.4,275.5 567.1,257.9 567.8,251.7 568.5,251.6 569.2,246.4 569.9,241.6 570.6,242.0 571.3,244.9 572.0,252.9 572.7,266.1 573.3,282.9 574.0,268.2 574.7,258.3 575.4,251.3 576.1,247.4 576.8,248.5 577.5,252.7 578.2,260.9 578.9,273.0 579.6,258.6 580.3,245.3 581.0,243.5 581.6,248.0 582.3,260.8 583.0,278.3 583.7,283.2 584.4,275.1 585.1,272.2 585.8,274.2 586.5,281.7 587.2,307.9 587.9,284.7 588.6,274.4 589.3,272.2 589.9,271.2 590.6,273.9 591.3,279.2 592.0,272.6 592.7,270.7 593.4,281.3 594.1,278.4 594.8,260.4 595.5,252.5 596.2,250.5 596.9,254.0 597.5,263.5 598.2,271.9 598.9,273.1 599.6,278.8 600.3,294.5 601.0,278.8 601.7,265.9 602.4,261.6 603.1,261.9 603.8,266.2 604.5,276.5 605.2,304.3 605.8,283.7 606.5,259.2 607.2,249.4 607.9,245.8 608.6,246.7 609.3,252.0 610.0,263.7 610.7,296.3 611.4,284.6 612.1,267.2 612.8,261.5 613.4,262.4 614.1,264.0 614.8,257.8 615.5,253.7 616.2,254.8 616.9,260.7 617.6,264.9 618.3,256.1 619.0,247.0 619.7,245.7 620.4,247.1 621.1,256.6 621.7,270.3 622.4,278.9 623.1,281.4 623.8,279.5 624.5,276.4 625.2,279.7 625.9,286.3 626.6,290.2 627.3,296.3 628.0,274.9 628.7,257.0 629.3,249.5 630.0,246.7 630.7,247.6 631.4,254.3 632.1,268.5 632.8,283.5 633.5,267.5 634.2,258.3 634.9,258.9 635.6,265.4 636.3,275.5 637.0,271.1 637.6,256.9 638.3,246.7 639.0,246.0 639.7,246.1 640.4,246.1 641.1,247.2 641.8,249.7 642.5,255.8 643.2,265.9 643.9,267.9 644.6,258.7 645.3,254.0 645.9,255.5 646.6,258.6 647.3,255.3 648.0,257.4 648.7,267.3 649.4,273.7 650.1,265.9 650.8,257.8 651.5,255.2 652.2,261.2 652.9,279.7 653.5,300.4 654.2,264.0 654.9,253.0 655.6,252.6 656.3,257.8 657.0,262.6 657.7,256.3 658.4,250.7 659.1,249.0 659.8,250.3 660.5,256.1 661.2,263.5 661.8,269.2 662.5,264.9 663.2,263.7 663.9,271.9 664.6,279.5 665.3,290.2 666.0,284.5 666.7,262.7 667.4,259.5" stroke="#0000ff"/>
<polyline points="380.7,199.9 382.3,204.3 383.9,175.6 385.5,156.9 387.1,132.6 388.8,125.9 390.4,136.0 392.0,140.0 393.6,124.7 395.2,117.9 396.8,126.6 398.4,130.3 400.1,136.4 401.7,131.5 403.3,147.8 404.9,132.6 406.5,125.5 408.1,144.4 409.7,152.5 411.3,152.5 413.0,155.7 414.6,124.8 416.2,169.6 417.8,168.7 419.4,137.9 421.0,128.7 422.6,137.5 424.2,125.7 425.9,146.5 427.5,129.2 429.1,135.8 430.7,134.6 432.3,132.7 433.9,137.0 435.5,121.2 437.2,146.3 438.8,117.9 440.4,135.9 442.0,126.8 443.6,154.4 445.2,118.2 446.8,132.9 448.4,119.6 450.1,165.1 451.7,141.2 453.3,124.1 454.9,157.8 456.5,153.7 458.1,147.9 459.7,147.9 461.4,165.2 463.0,123.6 464.6,157.7 466.2,143.7 467.8,126.0 469.4,132.8 471.0,151.6 472.6,131.5 474.3,158.6 475.9,120.4 477.5,125.4 479.1,132.9 480.7,145.7 482.3,136.9 483.9,145.5 485.5,120.6 487.2,153.6 488.8,124.0 490.4,142.5 492.0,128.2 493.6,151.7 495.2,158.3 496.8,126.2 498.5,138.5 500.1,126.2 501.7,132.1 503.3,171.2 504.9,141.5 506.5,122.3 508.1,138.1 509.7,130.4 511.4,148.5 513.0,124.3 514.6,140.8 516.2,147.3 517.8,124.2 519.4,138.8 521.0,126.0 522.7,173.6 524.3,151.3 525.9,153.0 527.5,163.0 529.1,155.5 530.7,141.1 532.3,170.3 533.9,152.8 535.6,193.2 537.2,189.0 538.8,170.3 540.4,188.8 542.0,172.4 543.6,182.8 545.2,214.6 546.8,200.9 548.5,200.3 550.1,231.7 551.7,230.8 553.3,207.8 554.0,208.6 554.7,202.2 555.4,205.8 556.1,209.4 556.8,212.9 557.4,219.8 558.1,232.8 558.8,242.4 559.5,235.9 560.2,239.2 560.9,247.3 561.6,245.6 562.3,242.3 563.0,243.8 563.7,253.9 564.4,265.4 565.1,260.2 565.7,257.5 566.4,257.3 567.1,258.4 567.8,259.5 568.5,264.1 569.2,270.6 569.9,264.5 570.6,257.9 571.3,258.3 572.0,260.4 572.7,270.7 573.3,280.0 574.0,268.6 574.7,260.6 575.4,263.6 576.1,282.1 576.8,277.7 577.5,262.4 578.2,260.7 578.9,268.2 579.6,273.1 580.3,271.8 581.0,274.0 581.6,271.3 582.3,265.7 583.0,265.4 583.7,268.8 584.4,275.0 585.1,286.2 585.8,282.3 586.5,279.0 587.2,288.3 587.9,291.9 588.6,285.8 589.3,284.7 589.9,283.5 590.6,286.0 591.3,296.5 592.0,341.2 592.7,286.4 593.4,267.7 594.1,261.5 594.8,261.1 595.5,264.1 596.2,273.7 596.9,304.8 597.5,286.5 598.2,269.1 598.9,266.8 599.6,278.0 600.3,320.7 601.0,291.6 601.7,277.8 602.4,275.9 603.1,278.5 603.8,275.3 604.5,272.7 605.2,281.1 605.8,308.6 606.5,319.3 607.2,290.0 607.9,278.5 608.6,278.3 609.3,289.2 610.0,298.0 610.7,281.6 611.4,273.0 612.1,272.2 612.8,272.8 613.4,274.0 614.1,276.9 614.8,285.3 615.5,310.6 616.2,305.6 616.9,288.6 617.6,297.6 618.3,340.1 619.0,295.9 619.7,294.1 620.4,320.0 621.1,328.2 621.7,304.2 622.4,283.6 623.1,274.5 623.8,267.8 624.5,263.3 625.2,261.6 625.9,261.7 626.6,264.6 627.3,276.4 628.0,306.5 628.7,297.0 629.3,283.2 630.0,275.6 630.7,271.5 631.4,272.1 632.1,277.0 632.8,287.9 633.5,300.4 634.2,284.9 634.9,271.5 635.6,268.6 636.3,271.9 637.0,273.0 637.6,274.1 638.3,279.4 639.0,295.0 639.7,303.5 640.4,289.2 641.1,281.8 641.8,281.3 642.5,283.2 643.2,285.8 643.9,284.2 644.6,274.8 645.3,269.3 645.9,270.4 646.6,276.4 647.3,285.4 648.0,275.7 648.7,269.6 649.4,275.5 650.1,307.4 650.8,290.6 651.5,273.9 652.2,270.6 652.9,273.5 653.5,278.8 654.2,280.5 654.9,276.0 655.6,269.3 656.3,265.4 657.0,264.0 657.7,264.8 658.4,266.3 659.1,268.2 659.8,271.1 660.5,272.6 661.2,271.9 661.8,268.5 662.5,264.7 663.2,264.8 663.9,270.2 664.6,282.4 665.3,305.9 666.0,288.7 666.7,272.8 667.4,268.1" stroke="#ffff00"/>
<polyline points="380.7,200.8 382.3,176.4 383.9,187.0 385.5,132.5 387.1,136.0 388.8,124.5 390.4,140.6 392.0,128.3 393.6,140.4 395.2,134.3 396.8,119.9 398.4,106.0 400.1,103.8 401.7,124.4 403.3,116.0 404.9,103.5 406.5,116.6 408.1,109.5 409.7,116.5 411.3,144.0 413.0,114.3 414.6,123.7 416.2,104.0 417.8,116.6 419.4,116.8 421.0,114.4 422.6,122.2 424.2,127.7 425.9,128.1 427.5,135.7 429.1,117.2 430.7,118.8 432.3,123.3 433.9,106.7 435.5,105.1 437.2,111.9 438.8,117.5 440.4,140.4 442.0,120.9 443.6,119.3 445.2,135.7 446.8,105.4 448.4,140.4 450.1,124.0 451.7,130.4 453.3,130.8 454.9,113.1 456.5,148.3 458.1,146.1 459.7,112.7 461.4,106.0 463.0,128.5 464.6,111.0 466.2,117.6 467.8,109.2 469.4,126.3 471.0,107.7 472.6,155.4 474.3,142.3 475.9,126.9 477.5,131.0 479.1,150.9 480.7,127.0 482.3,155.4 483.9,122.6 485.5,135.3 487.2,122.5 488.8,107.9 490.4,111.0 492.0,123.7 493.6,136.6 495.2,110.8 496.8,140.8 498.5,121.4 500.1,128.6 501.7,182.1 503.3,135.3 504.9,116.6 506.5,119.2 508.1,115.2 509.7,202.5 511.4,133.3 513.0,135.5 514.6,127.4 516.2,144.2 517.8,110.0 519.4,182.8 521.0,124.7 522.7,122.5 524.3,154.1 525.9,145.8 527.5,188.2 529.1,143.8 530.7,136.0 532.3,137.6 533.9,140.3 535.6,149.6 537.2,170.2 538.8,169.3 540.4,161.2 542.0,161.5 543.6,174.6 545.2,166.7 546.8,189.0 548.5,227.1 550.1,197.6 551.7,230.3 553.3,218.1 554.0,218.9 554.7,224.2 555.4,225.7 556.1,225.1 556.8,224.0 557.4,224.4 558.1,227.6 558.8,230.8 559.5,229.1 560.2,227.4 560.9,228.4 561.6,233.4 562.3,240.3 563.0,243.8 563.7,249.2 564.4,251.9 565.1,241.0 565.7,231.0 566.4,226.6 567.1,229.6 567.8,244.0 568.5,289.1 569.2,255.3 569.9,244.0 570.6,238.8 571.3,237.8 572.0,237.5 572.7,237.2 573.3,238.2 574.0,240.3 574.7,244.8 575.4,249.7 576.1,251.8 576.8,249.2 577.5,244.9 578.2,246.6 578.9,257.9 579.6,271.3 580.3,250.7 581.0,248.9 581.6,265.8 582.3,250.8 583.0,239.4 583.7,240.2 584.4,252.5 585.1,267.1 585.8,252.3 586.5,243.8 587.2,244.9 587.9,258.2 588.6,288.9 589.3,273.9 589.9,260.7 590.6,259.9 591.3,260.5 592.0,262.8 592.7,280.9 593.4,285.2 594.1,260.6 594.8,252.0 595.5,247.9 596.2,250.1 596.9,262.5 597.5,273.0 598.2,245.8 598.9,231.7 599.6,231.3 600.3,231.3 601.0,231.3 601.7,236.7 602.4,253.0 603.1,268.8 603.8,270.3 604.5,245.0 605.2,236.2 605.8,237.8 606.5,241.2 607.2,237.2 607.9,236.3 608.6,244.6 609.3,263.9 610.0,270.7 610.7,258.1 611.4,244.4 612.1,236.7 612.8,236.8 613.4,246.4 614.1,277.7 614.8,259.4 615.5,240.3 616.2,235.6 616.9,238.8 617.6,242.0 618.3,242.3 619.0,245.7 619.7,253.8 620.4,258.2 621.1,265.6 621.7,280.5 622.4,284.5 623.1,282.4 623.8,267.8 624.5,251.0 625.2,241.5 625.9,238.4 626.6,238.3 627.3,240.3 628.0,242.9 628.7,241.0 629.3,237.2 630.0,236.7 630.7,241.6 631.4,256.1 632.1,282.2 632.8,266.5 633.5,268.2 634.2,276.8 634.9,265.3 635.6,259.5 636.3,261.0 637.0,254.7 637.6,243.5 638.3,239.6 639.0,245.7 639.7,262.0 640.4,275.6 641.1,277.8 641.8,277.7 642.5,261.1 643.2,247.7 643.9,239.6 644.6,237.1 645.3,239.1 645.9,245.5 646.6,263.2 647.3,261.2 648.0,245.3 648.7,245.7 649.4,261.5 650.1,283.7 650.8,269.0 651.5,278.7 652.2,276.2 652.9,250.2 653.5,244.0 654.2,246.9 654.9,261.0 655.6,301.6 656.3,305.0 657.0,302.8 657.7,272.8 658.4,257.6 659.1,250.7 659.8,250.4 660.5,256.3 661.2,266.0 661.8,276.3 662.5,261.2 663.2,244.5 663.9,234.9 664.6,232.6 665.3,233.4 666.0,241.8 666.7,256.6 667.4,273.6" stroke="#00ffff"/>
<polyline points="380.7,196.0 382.3,167.5 383.9,197.0 385.5,158.5 387.1,131.6 388.8,116.9 390.4,138.5 392.0,114.3 393.6,148.3 395.2,115.3 396.8,128.1 398.4,152.9 400.1,116.2 401.7,111.9 403.3,133.3 404.9,135.6 406.5,145.1 408.1,137.4 409.7,105.8 411.3,122.3 413.0,118.6 414.6,150.4 416.2,167.7 417.8,118.0 419.4,109.2 421.0,105.8 422.6,113.6 424.2,130.5 425.9,131.6 427.5,130.0 429.1,123.2 430.7,126.4 432.3,136.7 433.9,124.3 435.5,140.0 437.2,130.9 438.8,145.2 440.4,119.2 442.0,161.5 443.6,121.6 445.2,158.3 446.8,149.9 448.4,117.5 450.1,135.1 451.7,138.8 453.3,190.5 454.9,137.7 456.5,107.4 458.1,160.1 459.7,160.1 461.4,113.5 463.0,144.9 464.6,128.6 466.2,114.8 467.8,118.0 469.4,183.4 471.0,133.5 472.6,130.8 474.3,120.2 475.9,123.8 477.5,151.8 479.1,128.2 480.7,108.9 482.3,123.0 483.9,109.1 485.5,121.9 487.2,132.8 488.8,150.0 490.4,116.6 492.0,109.7 493.6,127.5 495.2,121.4 496.8,112.4 498.5,125.1 500.1,114.6 501.7,143.3 503.3,110.5 504.9,143.4 506.5,123.5 508.1,118.7 509.7,134.3 511.4,145.4 513.0,133.7 514.6,169.5 516.2,151.1 517.8,123.1 519.4,157.4 521.0,151.3 522.7,132.4 524.3,116.7 525.9,172.6 527.5,134.5 529.1,157.0 530.7,160.4 532.3,140.9 533.9,150.8 535.6,168.7 537.2,166.9 538.8,163.8 540.4,189.4 542.0,185.2 543.6,163.5 545.2,215.3 546.8,181.4 548.5,177.5 550.1,194.0 551.7,203.4 553.3,190.0 554.0,190.8 554.7,194.1 555.4,196.1 556.1,198.5 556.8,201.8 557.4,206.1 558.1,206.9 558.8,207.3 559.5,208.1 560.2,209.6 560.9,212.1 561.6,216.2 562.3,221.6 563.0,220.4 563.7,217.9 564.4,217.4 565.1,218.3 565.7,219.7 566.4,222.7 567.1,229.2 567.8,228.8 568.5,225.1 569.2,223.2 569.9,224.3 570.6,226.2 571.3,229.4 572.0,235.2 572.7,236.5 573.3,230.8 574.0,226.8 574.7,225.4 575.4,226.6 576.1,228.7 576.8,232.8 577.5,235.0 578.2,230.5 578.9,227.5 579.6,227.4 580.3,228.0 581.0,230.9 581.6,234.7 582.3,238.4 583.0,233.4 583.7,229.1 584.4,226.0 585.1,225.3 585.8,225.9 586.5,230.2 587.2,235.8 587.9,229.7 588.6,226.6 589.3,224.2 589.9,225.1 590.6,227.8 591.3,231.2 592.0,238.2 592.7,233.3 593.4,229.7 594.1,227.6 594.8,226.3 595.5,229.0 596.2,232.8 596.9,238.9 597.5,237.2 598.2,232.6 598.9,230.1 599.6,228.9 600.3,230.0 601.0,233.9 601.7,238.4 602.4,236.5 603.1,231.8 603.8,227.8 604.5,226.4 605.2,227.7 605.8,230.8 606.5,236.4 607.2,237.3 607.9,232.3 608.6,228.8 609.3,227.6 610.0,227.6 610.7,229.8 611.4,234.3 612.1,237.4 612.8,230.4 613.4,226.9 614.1,224.6 614.8,224.9 615.5,227.2 616.2,233.1 616.9,237.5 617.6,232.2 618.3,227.7 619.0,226.9 619.7,226.0 620.4,227.4 621.1,232.7 621.7,238.8 622.4,232.2 623.1,228.6 623.8,226.4 624.5,225.6 625.2,226.6 625.9,230.4 626.6,237.5 627.3,233.7 628.0,228.9 628.7,225.6 629.3,225.9 630.0,227.8 630.7,232.2 631.4,239.1 632.1,238.2 632.8,233.5 633.5,230.5 634.2,230.2 634.9,232.2 635.6,235.1 636.3,239.7 637.0,239.3 637.6,233.3 638.3,230.0 639.0,228.6 639.7,228.9 640.4,231.3 641.1,237.2 641.8,238.3 642.5,233.0 643.2,230.0 643.9,228.9 644.6,228.8 645.3,231.7 645.9,236.2 646.6,238.8 647.3,232.6 648.0,228.7 648.7,227.7 649.4,227.1 650.1,228.8 650.8,233.3 651.5,239.1 652.2,232.9 652.9,229.4 653.5,228.2 654.2,228.7 654.9,230.2 655.6,233.6 656.3,240.3 657.0,234.3 657.7,228.8 658.4,227.3 659.1,228.1 659.8,228.8 660.5,232.9 661.2,239.3 661.8,236.6 662.5,231.9 663.2,229.8 663.9,228.7 664.6,230.3 665.3,233.0 666.0,238.7 666.7,236.4 667.4,231.1" stroke="#ff00ff"/>
<polyline points="380.7,201.0 382.3,174.7 383.9,169.0 385.5,144.5 387.1,132.5 388.8,149.3 390.4,141.6 392.0,187.6 393.6,149.4 395.2,122.4 396.8,163.2 398.4,123.9 400.1,166.7 401.7,136.9 403.3,126.2 404.9,156.7 406.5,119.0 408.1,161.2 409.7,111.9 411.3,125.3 413.0,133.6 414.6,111.1 416.2,166.0 417.8,121.4 419.4,150.2 421.0,113.6 422.6,111.4 424.2,125.3 425.9,138.5 427.5,156.1 429.1,163.5 430.7,131.5 432.3,126.6 433.9,132.3 435.5,157.8 437.2,141.8 438.8,124.1 440.4,122.6 442.0,167.5 443.6,156.0 445.2,112.4 446.8,130.4 448.4,124.8 450.1,130.8 451.7,113.2 453.3,122.9 454.9,138.7 456.5,143.6 458.1,145.8 459.7,123.0 461.4,118.7 463.0,139.9 464.6,118.2 466.2,121.2 467.8,115.1 469.4,115.8 471.0,140.3 472.6,121.7 474.3,130.5 475.9,119.6 477.5,157.9 479.1,145.3 480.7,114.5 482.3,114.6 483.9,123.3 485.5,164.3 487.2,163.5 488.8,152.7 490.4,194.6 492.0,128.2 493.6,121.9 495.2,128.5 496.8,129.9 498.5,142.1 500.1,194.2 501.7,136.0 503.3,165.6 504.9,119.9 506.5,133.3 508.1,118.1 509.7,130.9 511.4,135.7 513.0,142.7 514.6,130.9 516.2,187.1 517.8,151.5 519.4,134.9 521.0,137.8 522.7,127.1 524.3,133.6 525.9,135.8 527.5,144.2 529.1,153.2 530.7,150.9 532.3,167.8 533.9,138.9 535.6,174.0 537.2,158.7 538.8,176.9 540.4,162.3 542.0,166.9 543.6,226.7 545.2,238.4 546.8,235.9 548.5,205.4 550.1,196.5 551.7,239.6 553.3,223.6 554.0,224.5 554.7,220.3 555.4,221.6 556.1,222.1 556.8,220.6 557.4,219.4 558.1,218.5 558.8,219.0 559.5,221.3 560.2,226.7 560.9,225.3 561.6,219.6 562.3,215.8 563.0,214.6 563.7,215.4 564.4,220.3 565.1,231.3 565.7,226.6 566.4,218.4 567.1,214.1 567.8,213.4 568.5,216.0 569.2,221.1 569.9,233.3 570.6,226.4 571.3,218.7 572.0,214.8 572.7,214.0 573.3,217.3 574.0,223.0 574.7,235.6 575.4,227.2 576.1,219.6 576.8,216.8 577.5,215.7 578.2,219.0 578.9,226.1 579.6,237.7 580.3,229.0 581.0,221.2 581.6,218.8 582.3,218.9 583.0,221.9 583.7,228.5 584.4,241.5 585.1,229.5 585.8,221.9 586.5,217.8 587.2,217.4 587.9,219.7 588.6,226.3 589.3,238.9 589.9,226.3 590.6,219.9 591.3,215.8 592.0,217.4 592.7,220.9 593.4,229.4 594.1,240.5 594.8,226.6 595.5,220.1 596.2,216.6 596.9,217.0 597.5,222.1 598.2,229.5 598.9,239.2 599.6,227.3 600.3,221.2 601.0,219.9 601.7,220.7 602.4,224.6 603.1,233.3 603.8,239.8 604.5,228.2 605.2,222.1 605.8,219.4 606.5,221.0 607.2,225.8 607.9,234.6 608.6,241.1 609.3,228.7 610.0,223.0 610.7,222.0 611.4,222.7 612.1,227.0 612.8,234.2 613.4,237.2 614.1,226.0 614.8,219.4 615.5,218.6 616.2,219.0 616.9,222.7 617.6,232.7 618.3,234.4 619.0,224.7 619.7,220.1 620.4,219.2 621.1,221.1 621.7,225.5 622.4,236.6 623.1,237.0 623.8,226.3 624.5,221.3 625.2,220.4 625.9,221.5 626.6,226.6 627.3,237.4 628.0,235.6 628.7,226.9 629.3,221.7 630.0,221.2 630.7,223.6 631.4,229.3 632.1,240.9 632.8,235.9 633.5,227.2 634.2,222.8 634.9,220.8 635.6,222.7 636.3,228.2 637.0,238.9 637.6,232.7 638.3,224.2 639.0,220.2 639.7,217.7 640.4,219.8 641.1,224.9 641.8,237.6 642.5,229.9 643.2,222.3 643.9,218.5 644.6,217.4 645.3,220.9 645.9,228.5 646.6,241.3 647.3,232.9 648.0,224.3 648.7,219.8 649.4,218.2 650.1,220.6 650.8,228.4 651.5,239.7 652.2,228.2 652.9,220.5 653.5,217.5 654.2,217.3 654.9,222.1 655.6,230.7 656.3,244.5 657.0,229.8 657.7,223.7 658.4,219.7 659.1,219.4 659.8,222.5 660.5,229.6 661.2,240.1 661.8,226.4 662.5,219.8 663.2,217.6 663.9,218.9 664.6,224.3 665.3,232.4 666.0,242.3 666.7,230.3 667.4,224.5" stroke="#800000"/>
<polyline points="380.7,183.3 382.3,154.0 383.9,194.4 385.5,127.7 387.1,160.5 388.8,129.7 390.4,138.0 392.0,100.0 393.6,132.6 395.2,126.2 396.8,116.9 398.4,106.6 400.1,124.7 401.7,107.1 403.3,121.0 404.9,101.7 406.5,98.0 408.1,146.2 409.7,102.8 411.3,98.0 413.0,144.9 414.6,135.6 416.2,106.3 417.8,102.4 419.4,101.7 421.0,196.2 422.6,111.9 424.2,145.1 425.9,122.2 427.5,123.1 429.1,98.8 430.7,134.6 432.3,105.5 433.9,112.5 435.5,111.4 437.2,116.1 438.8,112.4 440.4,107.2 442.0,131.3 443.6,99.7 445.2,101.3 446.8,144.0 448.4,99.7 450.1,109.5 451.7,116.2 453.3,116.1 454.9,122.3 456.5,116.8 458.1,117.8 459.7,114.3 461.4,105.8 463.0,115.5 464.6,147.7 466.2,142.1 467.8,100.6 469.4,113.3 471.0,107.5 472.6,130.9 474.3,115.4 475.9,141.8 477.5,117.3 479.1,148.6 480.7,126.4 482.3,101.8 483.9,102.1 485.5,119.8 487.2,140.4 488.8,129.6 490.4,120.5 492.0,108.1 493.6,138.8 495.2,111.6 496.8,114.6 498.5,144.2 500.1,118.9 501.7,127.0 503.3,109.1 504.9,121.0 506.5,114.9 508.1,105.2 509.7,107.1 511.4,116.9 513.0,120.5 514.6,125.8 516.2,129.2 517.8,107.9 519.4,104.4 521.0,139.7 522.7,121.6 524.3,136.1 525.9,127.4 527.5,130.8 529.1,167.1 530.7,129.1 532.3,132.9 533.9,168.3 535.6,160.0 537.2,148.5 538.8,157.7 540.4,167.9 542.0,150.2 543.6,173.6 545.2,175.4 546.8,200.8 548.5,182.7 550.1,191.8 551.7,199.8 553.3,177.9 554.0,178.8 554.7,190.0 555.4,191.9 556.1,193.5 556.8,195.3 557.4,197.5 558.1,200.6 558.8,205.4 559.5,207.3 560.2,206.4 560.9,206.6 561.6,207.6 562.3,210.1 563.0,214.9 563.7,221.9 564.4,219.3 565.1,217.3 565.7,215.8 566.4,216.3 567.1,220.5 567.8,225.6 568.5,228.6 569.2,223.1 569.9,220.0 570.6,218.8 571.3,219.0 572.0,223.9 572.7,229.7 573.3,228.4 574.0,223.7 574.7,221.7 575.4,221.9 576.1,223.3 576.8,227.8 577.5,236.3 578.2,229.4 578.9,225.2 579.6,222.1 580.3,222.7 581.0,225.0 581.6,230.4 582.3,233.3 583.0,227.9 583.7,224.5 584.4,223.7 585.1,225.3 585.8,229.1 586.5,235.6 587.2,232.9 587.9,227.9 588.6,225.0 589.3,225.2 589.9,227.2 590.6,230.3 591.3,236.3 592.0,230.4 592.7,225.4 593.4,223.3 594.1,224.2 594.8,227.1 595.5,231.6 596.2,232.1 596.9,227.0 597.5,224.0 598.2,222.9 598.9,225.1 599.6,229.1 600.3,233.7 601.0,230.5 601.7,226.1 602.4,223.9 603.1,224.1 603.8,225.4 604.5,229.4 605.2,233.8 605.8,227.9 606.5,224.9 607.2,223.5 607.9,223.5 608.6,226.8 609.3,232.2 610.0,233.3 610.7,228.9 611.4,225.8 612.1,225.9 612.8,227.9 613.4,231.4 614.1,237.4 614.8,233.2 615.5,227.7 616.2,226.1 616.9,225.4 617.6,227.5 618.3,231.8 619.0,235.5 619.7,228.9 620.4,224.9 621.1,223.5 621.7,224.7 622.4,226.9 623.1,231.9 623.8,233.1 624.5,227.7 625.2,225.5 625.9,225.2 626.6,228.3 627.3,230.9 628.0,237.1 628.7,233.6 629.3,228.5 630.0,226.3 630.7,226.0 631.4,228.0 632.1,232.0 632.8,235.4 633.5,230.0 634.2,226.1 634.9,224.7 635.6,226.5 636.3,228.7 637.0,233.4 637.6,231.5 638.3,226.8 639.0,224.2 639.7,223.7 640.4,224.5 641.1,228.4 641.8,234.4 642.5,229.9 643.2,226.0 643.9,224.3 644.6,223.8 645.3,225.5 645.9,230.8 646.6,234.5 647.3,227.6 648.0,223.5 648.7,222.1 649.4,222.5 650.1,225.8 650.8,232.3 651.5,230.3 652.2,224.5 652.9,221.2 653.5,221.2 654.2,223.2 654.9,227.5 655.6,234.3 656.3,228.3 657.0,223.0 657.7,221.1 658.4,222.2 659.1,226.1 659.8,230.6 660.5,233.9 661.2,227.6 661.8,223.6 662.5,222.9 663.2,224.7 663.9,229.3 664.6,234.8 665.3,232.5 666.0,228.0 666.7,225.0 667.4,224.7" stroke="#008000"/>
<polyline points="380.7,194.3 382.3,174.0 383.9,147.4 385.5,215.5 387.1,124.2 388.8,127.7 390.4,152.2 392.0,117.2 393.6,110.7 395.2,114.1 396.8,109.5 398.4,112.1 400.1,118.4 401.7,121.5 403.3,135.4 404.9,123.3 406.5,122.7 408.1,127.4 409.7,118.4 411.3,119.3 413.0,130.1 414.6,151.3 416.2,144.4 417.8,120.0 419.4,119.1 421.0,126.3 422.6,122.4 424.2,139.5 425.9,111.6 427.5,128.3 429.1,129.0 430.7,153.9 432.3,142.5 433.9,153.2 435.5,118.2 437.2,170.6 438.8,128.8 440.4,122.4 442.0,119.4 443.6,139.6 445.2,123.8 446.8,112.7 448.4,107.9 450.1,119.4 451.7,114.4 453.3,131.6 454.9,108.2 456.5,109.2 458.1,142.1 459.7,115.1 461.4,125.6 463.0,164.0 464.6,130.8 466.2,130.7 467.8,148.2 469.4,144.5 471.0,123.9 472.6,129.0 474.3,137.1 475.9,143.5 477.5,121.9 479.1,113.2 480.7,111.1 482.3,124.2 483.9,120.6 485.5,132.9 487.2,161.3 488.8,144.0 490.4,119.9 492.0,110.6 493.6,116.5 495.2,123.1 496.8,136.7 498.5,173.8 500.1,144.5 501.7,111.3 503.3,127.9 504.9,119.8 506.5,127.2 508.1,125.2 509.7,111.9 511.4,143.2 513.0,153.1 514.6,162.4 516.2,184.3 517.8,134.0 519.4,134.9 521.0,118.9 522.7,114.0 524.3,179.4 525.9,153.6 527.5,120.6 529.1,144.8 530.7,145.3 532.3,140.5 533.9,156.8 535.6,148.1 537.2,160.1 538.8,161.3 540.4,153.6 542.0,170.7 543.6,188.0 545.2,189.9 546.8,175.5 548.5,235.1 550.1,218.0 551.7,190.1 553.3,198.0 554.0,198.8 554.7,201.0 555.4,202.4 556.1,205.6 556.8,217.7 557.4,211.7 558.1,209.5 558.8,210.2 559.5,215.6 560.2,229.3 560.9,240.0 561.6,238.0 562.3,240.0 563.0,237.0 563.7,224.0 564.4,214.8 565.1,215.6 565.7,216.3 566.4,217.8 567.1,221.0 567.8,224.8 568.5,230.4 569.2,244.6 569.9,265.8 570.6,236.5 571.3,228.5 572.0,231.1 572.7,257.2 573.3,243.0 574.0,229.1 574.7,234.2 575.4,266.9 576.1,251.7 576.8,245.1 577.5,255.9 578.2,270.0 578.9,281.0 579.6,293.5 580.3,286.3 581.0,253.4 581.6,242.0 582.3,239.2 583.0,231.7 583.7,223.9 584.4,223.5 585.1,231.2 585.8,243.6 586.5,245.6 587.2,247.9 587.9,254.6 588.6,251.6 589.3,242.9 589.9,243.1 590.6,254.7 591.3,285.7 592.0,268.7 592.7,251.1 593.4,247.2 594.1,256.7 594.8,256.2 595.5,241.7 596.2,236.9 596.9,237.8 597.5,238.6 598.2,235.6 598.9,230.7 599.6,227.9 600.3,231.5 601.0,243.0 601.7,255.3 602.4,257.9 603.1,248.1 603.8,242.8 604.5,253.3 605.2,245.4 605.8,232.4 606.5,230.7 607.2,239.3 607.9,256.3 608.6,250.8 609.3,250.8 610.0,258.9 610.7,257.6 611.4,250.7 612.1,239.9 612.8,227.2 613.4,223.0 614.1,223.1 614.8,242.6 615.5,259.1 616.2,231.6 616.9,227.2 617.6,229.5 618.3,231.8 619.0,230.9 619.7,228.1 620.4,226.6 621.1,227.8 621.7,229.8 622.4,232.3 623.1,238.8 623.8,247.6 624.5,250.9 625.2,247.9 625.9,243.4 626.6,245.9 627.3,252.3 628.0,238.3 628.7,229.6 629.3,229.7 630.0,234.8 630.7,238.0 631.4,236.3 632.1,237.4 632.8,243.2 633.5,251.7 634.2,266.4 634.9,280.9 635.6,259.5 636.3,250.7 637.0,244.2 637.6,240.0 638.3,240.8 639.0,247.9 639.7,263.3 640.4,296.3 641.1,270.4 641.8,290.3 642.5,256.1 643.2,239.3 643.9,233.6 644.6,233.7 645.3,236.0 645.9,236.6 646.6,235.0 647.3,235.6 648.0,242.7 648.7,246.1 649.4,239.3 650.1,237.6 650.8,242.0 651.5,247.4 652.2,248.2 652.9,250.3 653.5,264.0 654.2,264.4 654.9,243.0 655.6,237.2 656.3,235.7 657.0,234.4 657.7,232.4 658.4,229.4 659.1,225.9 659.8,223.9 660.5,224.9 661.2,231.2 661.8,241.1 662.5,252.1 663.2,265.3 663.9,252.8 664.6,233.0 665.3,224.0 666.0,224.1 666.7,224.1 667.4,235.7" stroke="#000080"/>
<polyline points="380.7,183.6 382.3,196.5 383.9,176.2 385.5,151.9 387.1,144.3 388.8,124.0 390.4,136.0 392.0,131.7 393.6,149.1 395.2,118.3 396.8,126.0 398.4,149.4 400.1,135.7 401.7,121.8 403.3,134.8 404.9,121.9 406.5,120.6 408.1,117.6 409.7,160.7 411.3,116.2 413.0,147.9 414.6,134.9 416.2,132.3 417.8,120.1 419.4,134.4 421.0,111.9 422.6,140.5 424.2,127.1 425.9,118.6 427.5,129.1 429.1,128.9 430.7,133.0 432.3,121.1 433.9,176.4 435.5,139.9 437.2,124.4 438.8,122.0 440.4,134.2 442.0,146.8 443.6,138.3 445.2,163.9 446.8,139.1 448.4,118.3 450.1,132.6 451.7,134.4 453.3,126.3 454.9,152.4 456.5,113.5 458.1,154.2 459.7,123.0 461.4,130.0 463.0,145.1 464.6,133.2 466.2,127.6 467.8,129.9 469.4,138.2 471.0,143.0 472.6,157.7 474.3,114.6 475.9,120.9 477.5,131.4 479.1,118.6 480.7,121.9 482.3,143.1 483.9,139.6 485.5,124.0 487.2,121.9 488.8,187.7 490.4,145.2 492.0,116.2 493.6,136.7 495.2,127.5 496.8,131.0 498.5,133.9 500.1,116.4 501.7,132.6 503.3,145.8 504.9,142.4 506.5,123.0 508.1,155.8 509.7,125.4 511.4,156.3 513.0,130.7 514.6,117.5 516.2,145.6 517.8,141.9 519.4,131.9 521.0,135.9 522.7,125.3 524.3,131.8 525.9,151.6 527.5,161.4 529.1,135.8 530.7,134.7 532.3,148.1 533.9,159.4 535.6,163.0 537.2,166.0 538.8,167.1 540.4,201.7 542.0,169.5 543.6,169.4 545.2,174.0 546.8,182.9 548.5,198.8 550.1,206.7 551.7,243.8 553.3,199.2 554.0,200.0 554.7,197.6 555.4,200.4 556.1,202.9 556.8,204.8 557.4,207.3 558.1,210.2 558.8,212.8 559.5,216.5 560.2,211.9 560.9,209.6 561.6,212.9 562.3,223.4 563.0,243.2 563.7,254.6 564.4,259.8 565.1,258.2 565.7,263.5 566.4,270.6 567.1,246.4 567.8,234.1 568.5,229.4 569.2,229.6 569.9,230.7 570.6,228.2 571.3,225.7 572.0,225.2 572.7,228.1 573.3,236.6 574.0,259.2 574.7,258.6 575.4,236.4 576.1,230.7 576.8,236.0 577.5,251.4 578.2,244.9 578.9,236.9 579.6,236.4 580.3,233.9 581.0,227.8 581.6,223.6 582.3,222.6 583.0,223.2 583.7,224.2 584.4,229.5 585.1,240.3 585.8,246.7 586.5,246.2 587.2,239.1 587.9,236.5 588.6,241.9 589.3,243.9 589.9,235.2 590.6,236.0 591.3,239.9 592.0,239.5 592.7,238.8 593.4,245.7 594.1,244.5 594.8,230.2 595.5,225.4 596.2,224.9 596.9,231.3 597.5,243.9 598.2,242.8 598.9,236.2 599.6,230.2 600.3,226.2 601.0,228.5 601.7,236.6 602.4,238.7 603.1,230.7 603.8,228.3 604.5,238.5 605.2,265.4 605.8,240.6 606.5,232.6 607.2,234.8 607.9,250.9 608.6,302.0 609.3,268.9 610.0,277.2 610.7,242.6 611.4,230.8 612.1,231.2 612.8,242.9 613.4,260.5 614.1,292.7 614.8,258.1 615.5,241.4 616.2,242.2 616.9,258.2 617.6,296.7 618.3,249.3 619.0,232.9 619.7,230.2 620.4,239.2 621.1,244.2 621.7,231.1 622.4,225.7 623.1,225.1 623.8,228.0 624.5,228.6 625.2,223.5 625.9,220.3 626.6,220.3 627.3,220.6 628.0,233.1 628.7,253.4 629.3,234.8 630.0,225.3 630.7,227.5 631.4,241.3 632.1,242.6 632.8,223.0 633.5,220.4 634.2,220.5 634.9,220.5 635.6,228.1 636.3,227.4 637.0,223.1 637.6,223.6 638.3,228.3 639.0,233.7 639.7,236.8 640.4,239.0 641.1,239.3 641.8,238.2 642.5,238.8 643.2,240.8 643.9,240.3 644.6,232.2 645.3,224.0 645.9,221.7 646.6,227.2 647.3,244.6 648.0,251.2 648.7,241.7 649.4,244.0 650.1,254.0 650.8,252.9 651.5,248.3 652.2,241.4 652.9,233.2 653.5,232.5 654.2,239.3 654.9,253.7 655.6,253.9 656.3,235.1 657.0,222.1 657.7,220.9 658.4,221.1 659.1,230.1 659.8,244.9 660.5,262.5 661.2,255.7 661.8,240.1 662.5,229.2 663.2,227.1 663.9,238.1 664.6,277.4 665.3,248.9 666.0,242.8 666.7,243.2 667.4,243.0" stroke="#808000"/>
<polyline points="380.7,193.8 382.3,166.8 383.9,179.9 385.5,156.0 387.1,138.6 388.8,116.5 390.4,121.4 392.0,118.7 393.6,101.1 395.2,109.9 396.8,141.0 398.4,98.0 400.1,98.0 401.7,100.7 403.3,147.7 404.9,120.5 406.5,98.0 408.1,98.0 409.7,121.1 411.3,99.5 413.0,139.2 414.6,98.0 416.2,98.0 417.8,98.4 419.4,105.6 421.0,98.0 422.6,138.3 424.2,102.2 425.9,101.0 427.5,112.0 429.1,124.5 430.7,106.4 432.3,115.9 433.9,116.5 435.5,98.0 437.2,104.2 438.8,98.0 440.4,106.2 442.0,106.1 443.6,118.7 445.2,98.0 446.8,107.4 448.4,123.1 450.1,114.5 451.7,140.9 453.3,137.1 454.9,144.8 456.5,118.1 458.1,144.8 459.7,106.6 461.4,112.6 463.0,153.4 464.6,109.3 466.2,114.9 467.8,105.1 469.4,136.2 471.0,122.9 472.6,103.4 474.3,105.2 475.9,127.3 477.5,140.5 479.1,106.7 480.7,98.0 482.3,122.7 483.9,129.5 485.5,116.5 487.2,129.9 488.8,111.4 490.4,112.6 492.0,119.1 493.6,101.4 495.2,98.0 496.8,115.0 498.5,123.8 500.1,129.5 501.7,144.0 503.3,137.3 504.9,114.1 506.5,128.1 508.1,108.3 509.7,108.1 511.4,124.6 513.0,119.6 514.6,107.0 516.2,123.1 517.8,111.5 519.4,141.7 521.0,154.3 522.7,109.9 524.3,133.2 525.9,133.7 527.5,122.7 529.1,108.9 530.7,138.1 532.3,127.5 533.9,155.6 535.6,182.8 537.2,133.1 538.8,153.7 540.4,145.5 542.0,180.3 543.6,157.5 545.2,166.9 546.8,189.5 548.5,180.9 550.1,178.6 551.7,183.2 553.3,206.4 554.0,207.2 554.7,224.2 555.4,226.1 556.1,227.2 556.8,231.1 557.4,238.4 558.1,246.1 558.8,242.6 559.5,236.1 560.2,234.3 560.9,236.1 561.6,239.6 562.3,252.7 563.0,251.3 563.7,233.3 564.4,224.2 565.1,222.2 565.7,222.3 566.4,223.2 567.1,229.3 567.8,233.7 568.5,235.6 569.2,235.7 569.9,236.2 570.6,239.3 571.3,244.9 572.0,245.3 572.7,244.0 573.3,244.2 574.0,247.5 574.7,256.4 575.4,272.7 576.1,254.7 576.8,241.3 577.5,240.9 578.2,246.8 578.9,244.9 579.6,243.1 580.3,244.2 581.0,235.8 581.6,228.3 582.3,229.5 583.0,240.9 583.7,266.4 584.4,272.3 585.1,272.6 585.8,255.5 586.5,244.4 587.2,242.6 587.9,244.5 588.6,246.9 589.3,249.4 589.9,252.3 590.6,242.6 591.3,237.8 592.0,240.7 592.7,239.9 593.4,237.0 594.1,240.3 594.8,252.4 595.5,272.6 596.2,267.3 596.9,270.6 597.5,283.9 598.2,268.8 598.9,249.5 599.6,242.9 600.3,248.6 601.0,269.8 601.7,242.5 602.4,228.8 603.1,228.8 603.8,228.8 604.5,231.3 605.2,259.5 605.8,260.9 606.5,247.6 607.2,256.1 607.9,275.8 608.6,298.4 609.3,254.6 610.0,239.0 610.7,232.6 611.4,232.2 612.1,234.8 612.8,243.0 613.4,275.2 614.1,258.2 614.8,242.6 615.5,242.4 616.2,254.8 616.9,254.1 617.6,240.8 618.3,235.5 619.0,236.5 619.7,240.3 620.4,244.0 621.1,245.1 621.7,243.9 622.4,242.6 623.1,241.9 623.8,241.9 624.5,243.5 625.2,250.7 625.9,284.1 626.6,251.7 627.3,236.3 628.0,230.5 628.7,230.3 629.3,235.4 630.0,243.2 630.7,249.5 631.4,262.8 632.1,310.7 632.8,262.5 633.5,251.0 634.2,246.7 634.9,250.3 635.6,252.6 636.3,237.7 637.0,229.5 637.6,229.5 638.3,229.5 639.0,232.7 639.7,242.5 640.4,253.1 641.1,260.2 641.8,264.2 642.5,263.0 643.2,259.3 643.9,253.1 644.6,253.0 645.3,267.1 645.9,261.1 646.6,237.5 647.3,229.7 648.0,229.7 648.7,229.7 649.4,229.7 650.1,239.7 650.8,259.6 651.5,277.8 652.2,269.0 652.9,280.1 653.5,267.9 654.2,245.7 654.9,236.5 655.6,237.2 656.3,246.1 657.0,257.5 657.7,252.9 658.4,249.7 659.1,252.7 659.8,256.9 660.5,251.8 661.2,243.6 661.8,236.2 662.5,231.3 663.2,231.2 663.9,236.8 664.6,242.1 665.3,240.8 666.0,238.5 666.7,238.9 667.4,243.6" stroke="#800080"/>
<polyline points="380.7,200.3 382.3,180.7 383.9,157.3 385.5,162.1 387.1,131.9 388.8,124.3 390.4,151.3 392.0,118.5 393.6,109.7 395.2,110.7 396.8,123.2 398.4,132.9 400.1,108.1 401.7,132.5 403.3,125.5 404.9,111.8 406.5,169.0 408.1,118.1 409.7,133.0 411.3,124.9 413.0,121.2 414.6,115.1 416.2,145.0 417.8,125.6 419.4,143.3 421.0,111.1 422.6,134.3 424.2,117.1 425.9,117.8 427.5,154.4 429.1,135.5 430.7,146.6 432.3,148.5 433.9,152.3 435.5,136.9 437.2,116.8 438.8,137.7 440.4,123.7 442.0,142.9 443.6,128.0 445.2,129.2 446.8,109.7 448.4,148.4 450.1,122.0 451.7,133.2 453.3,142.8 454.9,134.4 456.5,139.8 458.1,138.5 459.7,128.8 461.4,120.6 463.0,126.7 464.6,119.2 466.2,120.8 467.8,126.9 469.4,128.8 471.0,123.8 472.6,118.1 474.3,136.5 475.9,121.3 477.5,121.4 479.1,142.3 480.7,178.6 482.3,154.2 483.9,126.5 485.5,131.1 487.2,125.5 488.8,112.2 490.4,130.8 492.0,117.9 493.6,125.9 495.2,153.5 496.8,115.6 498.5,152.7 500.1,137.6 501.7,121.1 503.3,135.6 504.9,123.2 506.5,151.5 508.1,127.3 509.7,142.8 511.4,126.1 513.0,122.5 514.6,124.1 516.2,131.0 517.8,122.9 519.4,129.5 521.0,125.4 522.7,119.9 524.3,136.2 525.9,139.8 527.5,147.2 529.1,133.7 530.7,126.8 532.3,131.2 533.9,158.6 535.6,187.5 537.2,165.7 538.8,209.9 540.4,201.7 542.0,181.8 543.6,185.7 545.2,192.4 546.8,198.2 548.5,203.3 550.1,188.3 551.7,206.1 553.3,197.0 554.0,197.8 554.7,200.9 555.4,206.2 556.1,213.0 556.8,219.6 557.4,221.9 558.1,223.5 558.8,224.8 559.5,227.2 560.2,230.7 560.9,236.9 561.6,247.8 562.3,259.2 563.0,260.6 563.7,266.8 564.4,284.6 565.1,279.7 565.7,272.1 566.4,267.8 567.1,270.0 567.8,281.0 568.5,293.0 569.2,302.7 569.9,305.3 570.6,293.9 571.3,286.9 572.0,284.0 572.7,276.6 573.3,269.7 574.0,265.3 574.7,265.7 575.4,271.8 576.1,275.4 576.8,268.1 577.5,265.4 578.2,270.9 578.9,282.4 579.6,291.7 580.3,285.3 581.0,277.2 581.6,276.3 582.3,280.9 583.0,284.9 583.7,282.8 584.4,279.3 585.1,275.2 585.8,270.4 586.5,265.4 587.2,263.2 587.9,263.3 588.6,263.4 589.3,264.5 589.9,278.2 590.6,303.6 591.3,279.3 592.0,272.0 592.7,272.1 593.4,275.0 594.1,281.0 594.8,293.6 595.5,309.8 596.2,289.8 596.9,274.2 597.5,267.5 598.2,267.5 598.9,269.7 599.6,268.2 600.3,267.1 601.0,273.5 601.7,288.7 602.4,286.9 603.1,282.9 603.8,291.2 604.5,324.1 605.2,319.6 605.8,308.3 606.5,304.5 607.2,304.4 607.9,312.1 608.6,332.4 609.3,314.4 610.0,317.8 610.7,309.7 611.4,298.8 612.1,301.5 612.8,298.0 613.4,284.3 614.1,276.4 614.8,274.7 615.5,277.7 616.2,284.5 616.9,296.9 617.6,307.3 618.3,291.8 619.0,282.1 619.7,276.6 620.4,278.2 621.1,285.3 621.7,291.0 622.4,289.6 623.1,285.3 623.8,282.4 624.5,282.7 625.2,277.2 625.9,266.7 626.6,264.9 627.3,264.9 628.0,264.9 628.7,266.9 629.3,267.0 630.0,267.8 630.7,272.7 631.4,288.7 632.1,283.7 632.8,265.8 633.5,265.1 634.2,265.1 634.9,268.0 635.6,278.8 636.3,295.4 637.0,293.1 637.6,281.5 638.3,281.8 639.0,296.9 639.7,309.7 640.4,287.2 641.1,283.9 641.8,293.7 642.5,321.7 643.2,317.1 643.9,299.9 644.6,297.0 645.3,300.7 645.9,315.3 646.6,315.4 647.3,299.7 648.0,287.8 648.7,281.2 649.4,278.4 650.1,278.6 650.8,286.2 651.5,315.6 652.2,300.2 652.9,281.4 653.5,277.7 654.2,286.2 654.9,303.0 655.6,297.9 656.3,293.3 657.0,298.7 657.7,307.8 658.4,317.2 659.1,319.0 659.8,299.4 660.5,293.1 661.2,293.2 661.8,298.4 662.5,310.9 663.2,300.9 663.9,287.3 664.6,283.4 665.3,285.6 666.0,293.5 666.7,306.8 667.4,311.8" stroke="#008080"/>
<polyline points="380.7,245.4 382.3,193.5 383.9,184.9 385.5,137.7 387.1,145.7 388.8,141.3 390.4,135.0 392.0,137.3 393.6,129.5 395.2,113.4 396.8,121.1 398.4,109.4 400.1,113.2 401.7,128.9 403.3,129.8 404.9,108.5 406.5,117.1 408.1,143.2 409.7,117.2 411.3,129.7 413.0,122.7 414.6,127.4 416.2,107.8 417.8,124.7 419.4,120.3 421.0,133.3 422.6,112.9 424.2,141.8 425.9,117.1 427.5,121.1 429.1,156.2 430.7,112.1 432.3,157.2 433.9,126.8 435.5,123.6 437.2,121.1 438.8,178.4 440.4,128.9 442.0,121.3 443.6,133.6 445.2,126.4 446.8,171.2 448.4,121.1 450.1,132.0 451.7,132.6 453.3,164.8 454.9,169.8 456.5,146.5 458.1,116.5 459.7,129.1 461.4,136.7 463.0,133.3 464.6,123.3 466.2,147.9 467.8,117.5 469.4,134.5 471.0,132.9 472.6,121.4 474.3,146.8 475.9,135.1 477.5,139.4 479.1,140.0 480.7,111.2 482.3,125.0 483.9,111.4 485.5,125.3 487.2,121.7 488.8,136.7 490.4,126.0 492.0,146.5 493.6,132.6 495.2,139.1 496.8,135.1 498.5,140.4 500.1,118.2 501.7,152.4 503.3,145.5 504.9,112.9 506.5,146.6 508.1,151.1 509.7,175.1 511.4,148.5 513.0,140.5 514.6,121.8 516.2,143.1 517.8,135.8 519.4,131.3 521.0,124.2 522.7,127.6 524.3,124.2 525.9,134.0 527.5,123.2 529.1,135.5 530.7,153.9 532.3,152.9 533.9,172.8 535.6,164.3 537.2,170.1 538.8,176.6 540.4,171.5 542.0,198.4 543.6,193.6 545.2,189.3 546.8,187.1 548.5,204.2 550.1,231.3 551.7,203.1 553.3,201.8 554.0,202.6 554.7,203.1 555.4,204.6 556.1,206.3 556.8,208.8 557.4,213.0 558.1,219.0 558.8,227.7 559.5,236.3 560.2,233.3 560.9,225.3 561.6,220.6 562.3,221.2 563.0,226.9 563.7,232.5 564.4,235.6 565.1,232.7 565.7,225.2 566.4,218.8 567.1,218.7 567.8,220.9 568.5,233.5 569.2,250.5 569.9,248.8 570.6,242.6 571.3,238.8 572.0,238.1 572.7,245.4 573.3,252.5 574.0,240.5 574.7,235.6 575.4,238.2 576.1,244.5 576.8,247.0 577.5,250.1 578.2,245.7 578.9,239.4 579.6,238.9 580.3,242.4 581.0,250.3 581.6,267.0 582.3,272.1 583.0,261.8 583.7,254.7 584.4,251.3 585.1,251.2 585.8,264.0 586.5,289.8 587.2,266.7 587.9,271.1 588.6,253.1 589.3,240.3 589.9,239.1 590.6,243.2 591.3,246.3 592.0,247.9 592.7,251.5 593.4,253.5 594.1,250.8 594.8,247.7 595.5,249.0 596.2,252.1 596.9,239.1 597.5,228.9 598.2,226.2 598.9,229.1 599.6,235.7 600.3,242.9 601.0,246.2 601.7,243.8 602.4,235.0 603.1,230.5 603.8,232.3 604.5,231.5 605.2,225.5 605.8,224.3 606.5,231.3 607.2,264.2 607.9,241.9 608.6,230.4 609.3,232.8 610.0,244.7 610.7,251.4 611.4,246.0 612.1,240.6 612.8,232.5 613.4,229.1 614.1,230.3 614.8,232.8 615.5,235.4 616.2,244.9 616.9,272.9 617.6,269.9 618.3,261.4 619.0,248.2 619.7,233.0 620.4,226.7 621.1,227.6 621.7,233.9 622.4,241.1 623.1,238.5 623.8,240.1 624.5,242.7 625.2,234.9 625.9,232.4 626.6,237.8 627.3,249.9 628.0,247.4 628.7,241.8 629.3,236.4 630.0,231.8 630.7,228.5 631.4,226.5 632.1,227.9 632.8,234.1 633.5,245.4 634.2,252.2 634.9,249.1 635.6,251.2 636.3,267.0 637.0,272.5 637.6,244.2 638.3,234.3 639.0,232.0 639.7,236.8 640.4,249.0 641.1,261.9 641.8,285.1 642.5,251.8 643.2,247.4 643.9,264.8 644.6,246.2 645.3,238.2 645.9,249.2 646.6,286.3 647.3,242.2 648.0,234.3 648.7,236.2 649.4,239.5 650.1,239.6 650.8,243.3 651.5,253.6 652.2,268.6 652.9,292.3 653.5,257.8 654.2,242.2 654.9,238.2 655.6,244.5 656.3,256.3 657.0,249.0 657.7,243.5 658.4,239.7 659.1,236.8 659.8,238.3 660.5,243.3 661.2,251.8 661.8,261.7 662.5,270.1 663.2,262.7 663.9,256.7 664.6,261.3 665.3,263.4 666.0,248.6 666.7,238.0 667.4,234.2" stroke="#ff0000"/>
<polyline points="380.7,211.6 382.3,180.5 383.9,134.6 385.5,171.8 387.1,140.3 388.8,138.1 390.4,119.6 392.0,106.5 393.6,148.6 395.2,104.2 396.8,129.2 398.4,131.1 400.1,100.3 401.7,180.4 403.3,111.1 404.9,136.9 406.5,113.1 408.1,107.8 409.7,129.0 411.3,111.2 413.0,98.3 414.6,98.0 416.2,105.9 417.8,98.0 419.4,117.9 421.0,101.2 422.6,109.5 424.2,105.3 425.9,106.1 427.5,98.0 429.1,101.3 430.7,101.6 432.3,132.7 433.9,137.9 435.5,98.0 437.2,120.5 438.8,114.3 440.4,109.8 442.0,101.5 443.6,105.5 445.2,116.4 446.8,109.9 448.4,109.7 450.1,110.5 451.7,99.8 453.3,124.0 454.9,125.2 456.5,101.3 458.1,113.4 459.7,110.3 461.4,109.0 463.0,105.7 464.6,124.4 466.2,98.6 467.8,116.4 469.4,116.0 471.0,104.8 472.6,134.8 474.3,139.8 475.9,108.8 477.5,98.0 479.1,151.2 480.7,180.6 482.3,131.0 483.9,112.6 485.5,101.4 487.2,130.5 488.8,98.0 490.4,107.4 492.0,107.9 493.6,122.6 495.2,132.6 496.8,111.3 498.5,129.7 500.1,114.0 501.7,112.3 503.3,141.1 504.9,117.1 506.5,151.7 508.1,151.0 509.7,158.0 511.4,107.7 513.0,133.0 514.6,119.3 516.2,102.2 517.8,171.1 519.4,118.7 521.0,132.5 522.7,189.8 524.3,144.2 525.9,110.8 527.5,119.6 529.1,124.0 530.7,125.3 532.3,117.0 533.9,150.3 535.6,166.4 537.2,131.5 538.8,156.1 540.4,141.2 542.0,210.3 543.6,154.9 545.2,171.6 546.8,185.4 548.5,203.8 550.1,203.1 551.7,210.2 553.3,183.1 554.0,184.0 554.7,199.5 555.4,200.7 556.1,201.5 556.8,202.5 557.4,204.4 558.1,207.4 558.8,213.0 559.5,220.5 560.2,215.4 560.9,212.2 561.6,211.2 562.3,212.6 563.0,216.1 563.7,223.9 564.4,237.7 565.1,225.3 565.7,217.7 566.4,214.2 567.1,214.6 567.8,217.5 568.5,225.7 569.2,243.1 569.9,226.7 570.6,219.1 571.3,215.6 572.0,216.6 572.7,219.8 573.3,228.1 574.0,244.6 574.7,231.2 575.4,223.2 576.1,219.4 576.8,219.0 577.5,222.5 578.2,228.3 578.9,242.4 579.6,232.1 580.3,221.8 581.0,217.5 581.6,216.8 582.3,220.0 583.0,227.7 583.7,240.7 584.4,233.2 585.1,224.8 585.8,220.4 586.5,221.1 587.2,224.4 587.9,230.6 588.6,243.1 589.3,238.6 589.9,229.1 590.6,225.1 591.3,223.4 592.0,224.7 592.7,230.4 593.4,242.1 594.1,239.5 594.8,227.8 595.5,221.9 596.2,219.4 596.9,221.6 597.5,226.5 598.2,238.6 598.9,238.9 599.6,227.2 600.3,223.1 601.0,222.9 601.7,224.2 602.4,229.7 603.1,239.7 603.8,242.7 604.5,230.5 605.2,224.8 605.8,222.2 606.5,221.5 607.2,225.5 607.9,235.2 608.6,241.2 609.3,228.7 610.0,223.7 610.7,219.9 611.4,220.6 612.1,225.8 612.8,235.9 613.4,244.6 614.1,232.3 614.8,224.9 615.5,221.8 616.2,221.5 616.9,226.0 617.6,234.7 618.3,246.3 619.0,231.5 619.7,224.3 620.4,219.9 621.1,221.0 621.7,224.6 622.4,232.9 623.1,248.4 623.8,232.4 624.5,224.2 625.2,221.5 625.9,220.7 626.6,224.9 627.3,232.1 628.0,248.5 628.7,233.8 629.3,225.3 630.0,221.3 630.7,220.3 631.4,222.9 632.1,231.2 632.8,246.6 633.5,233.7 634.2,224.6 634.9,220.4 635.6,219.7 636.3,223.6 637.0,230.6 637.6,244.0 638.3,234.4 639.0,224.7 639.7,220.7 640.4,220.3 641.1,223.5 641.8,229.8 642.5,242.5 643.2,236.1 643.9,227.3 644.6,222.3 645.3,221.1 645.9,224.0 646.6,230.3 647.3,241.8 648.0,238.5 648.7,228.4 649.4,223.4 650.1,221.5 650.8,223.9 651.5,229.7 652.2,241.3 652.9,240.5 653.5,230.0 654.2,223.4 654.9,221.9 655.6,223.2 656.3,229.7 657.0,240.7 657.7,241.6 658.4,229.6 659.1,222.5 659.8,220.4 660.5,222.5 661.2,227.4 661.8,238.6 662.5,242.1 663.2,229.1 663.9,222.4 664.6,220.1 665.3,222.0 666.0,226.7 666.7,236.6 667.4,243.4" stroke="#00ff00"/>
<polyline points="380.7,191.0 382.3,165.6 383.9,168.5 385.5,127.6 387.1,159.4 388.8,139.3 390.4,118.5 392.0,128.1 393.6,108.8 395.2,113.6 396.8,116.5 398.4,130.7 400.1,103.5 401.7,108.3 403.3,130.0 404.9,111.8 406.5,130.8 408.1,110.2 409.7,103.9 411.3,113.0 413.0,109.7 414.6,116.5 416.2,162.3 417.8,107.0 419.4,129.6 421.0,131.5 422.6,137.6 424.2,104.5 425.9,106.5 427.5,123.9 429.1,129.8 430.7,121.6 432.3,119.0 433.9,175.6 435.5,104.6 437.2,135.6 438.8,119.9 440.4,137.3 442.0,126.6 443.6,155.0 445.2,116.8 446.8,131.1 448.4,105.8 450.1,122.2 451.7,108.7 453.3,153.1 454.9,119.5 456.5,122.4 458.1,108.6 459.7,121.2 461.4,130.1 463.0,141.8 464.6,129.2 466.2,127.2 467.8,114.5 469.4,118.4 471.0,106.4 472.6,126.3 474.3,125.1 475.9,156.9 477.5,106.8 479.1,125.3 480.7,117.8 482.3,151.3 483.9,117.7 485.5,120.8 487.2,132.2 488.8,107.6 490.4,137.4 492.0,144.6 493.6,115.9 495.2,136.7 496.8,136.3 498.5,140.9 500.1,113.9 501.7,133.7 503.3,146.8 504.9,131.2 506.5,128.0 508.1,128.8 509.7,120.6 511.4,142.2 513.0,133.5 514.6,133.9 516.2,125.9 517.8,124.4 519.4,115.5 521.0,129.4 522.7,132.1 524.3,124.9 525.9,123.1 527.5,161.7 529.1,157.9 530.7,126.2 532.3,152.8 533.9,157.9 535.6,182.0 537.2,206.9 538.8,182.1 540.4,183.9 542.0,167.6 543.6,180.2 545.2,179.7 546.8,199.5 548.5,195.8 550.1,226.4 551.7,204.3 553.3,206.2 554.0,207.1 554.7,211.1 555.4,213.4 556.1,213.9 556.8,213.0 557.4,212.4 558.1,212.6 558.8,213.8 559.5,217.4 560.2,226.1 560.9,218.8 561.6,214.9 562.3,212.4 563.0,211.9 563.7,215.4 564.4,223.2 565.1,230.9 565.7,219.1 566.4,212.8 567.1,211.7 567.8,213.9 568.5,220.6 569.2,232.4 569.9,230.9 570.6,221.6 571.3,216.7 572.0,217.3 572.7,220.2 573.3,227.4 574.0,240.0 574.7,229.1 575.4,221.0 576.1,216.9 576.8,216.7 577.5,221.3 578.2,229.4 578.9,238.8 579.6,225.0 580.3,219.7 581.0,217.3 581.6,218.4 582.3,223.5 583.0,234.0 583.7,235.1 584.4,223.6 585.1,218.6 585.8,218.1 586.5,219.7 587.2,225.8 587.9,239.0 588.6,232.5 589.3,223.6 589.9,219.7 590.6,219.9 591.3,223.9 592.0,230.7 592.7,244.9 593.4,230.2 594.1,222.5 594.8,218.3 595.5,219.3 596.2,223.8 596.9,232.7 597.5,238.0 598.2,226.8 598.9,220.1 599.6,218.6 600.3,220.8 601.0,227.1 601.7,238.1 602.4,233.9 603.1,223.8 603.8,219.2 604.5,218.0 605.2,221.1 605.8,228.1 606.5,242.4 607.2,230.0 607.9,222.4 608.6,219.0 609.3,219.1 610.0,222.8 610.7,231.7 611.4,240.2 612.1,226.5 612.8,219.5 613.4,216.4 614.1,218.4 614.8,223.0 615.5,235.3 616.2,235.6 616.9,224.0 617.6,219.0 618.3,219.2 619.0,222.7 619.7,230.5 620.4,243.1 621.1,234.1 621.7,224.9 622.4,220.3 623.1,221.3 623.8,225.0 624.5,232.1 625.2,242.5 625.9,228.0 626.6,221.1 627.3,218.3 628.0,219.0 628.7,224.1 629.3,233.6 630.0,237.0 630.7,225.9 631.4,221.0 632.1,219.0 632.8,221.8 633.5,228.2 634.2,240.3 634.9,233.7 635.6,225.3 636.3,220.7 637.0,220.6 637.6,223.9 638.3,232.5 639.0,246.1 639.7,231.3 640.4,222.7 641.1,219.9 641.8,220.4 642.5,223.7 643.2,232.3 643.9,239.1 644.6,226.3 645.3,221.1 645.9,218.6 646.6,220.9 647.3,225.3 648.0,235.9 648.7,234.0 649.4,223.8 650.1,219.3 650.8,218.0 651.5,220.7 652.2,227.6 652.9,241.5 653.5,231.2 654.2,223.2 654.9,219.8 655.6,219.9 656.3,222.5 657.0,231.1 657.7,240.9 658.4,228.4 659.1,222.2 659.8,220.8 660.5,222.4 661.2,227.5 661.8,238.0 662.5,238.9 663.2,228.5 663.9,222.5 664.6,220.4 665.3,222.5 666.0,228.0 666.7,240.1 667.4,232.3" stroke="#0000ff"/>
<polyline points="380.7,228.4 382.3,216.0 383.9,167.2 385.5,144.4 387.1,135.4 388.8,164.9 390.4,120.5 392.0,112.4 393.6,153.3 395.2,120.6 396.8,111.4 398.4,119.8 400.1,122.5 401.7,182.9 403.3,137.0 404.9,128.0 406.5,122.5 408.1,146.0 409.7,113.7 411.3,119.4 413.0,115.3 414.6,121.0 416.2,137.5 417.8,124.1 419.4,131.0 421.0,139.6 422.6,130.2 424.2,152.6 425.9,127.3 427.5,126.1 429.1,129.2 430.7,132.9 432.3,115.9 433.9,145.4 435.5,117.9 437.2,114.2 438.8,131.5 440.4,134.0 442.0,133.4 443.6,140.7 445.2,138.6 446.8,125.8 448.4,115.5 450.1,119.6 451.7,151.3 453.3,137.2 454.9,140.5 456.5,134.4 458.1,126.6 459.7,110.9 461.4,134.2 463.0,129.9 464.6,139.6 466.2,123.9 467.8,125.1 469.4,111.4 471.0,144.0 472.6,129.8 474.3,129.3 475.9,116.3 477.5,134.6 479.1,152.8 480.7,184.5 482.3,141.8 483.9,122.7 485.5,128.7 487.2,129.9 488.8,128.4 490.4,127.5 492.0,135.8 493.6,157.5 495.2,144.8 496.8,117.2 498.5,121.1 500.1,134.3 501.7,115.8 503.3,145.2 504.9,161.9 506.5,178.3 508.1,115.3 509.7,127.5 511.4,126.9 513.0,115.8 514.6,134.7 516.2,145.0 517.8,148.1 519.4,136.0 521.0,149.1 522.7,122.6 524.3,169.8 525.9,125.6 527.5,142.2 529.1,143.5 530.7,134.1 532.3,140.4 533.9,165.6 535.6,155.0 537.2,152.0 538.8,186.4 540.4,182.9 542.0,177.9 543.6,208.1 545.2,270.2 546.8,186.8 548.5,190.5 550.1,233.3 551.7,201.9 553.3,213.7 554.0,214.6 554.7,212.8 555.4,213.4 556.1,215.0 556.8,215.0 557.4,214.3 558.1,214.2 558.8,214.4 559.5,215.5 560.2,218.2 560.9,221.8 561.6,221.2 562.3,218.4 563.0,215.9 563.7,214.9 564.4,214.8 565.1,217.2 565.7,221.8 566.4,223.5 567.1,218.4 567.8,215.2 568.5,213.3 569.2,214.4 569.9,216.8 570.6,222.4 571.3,228.6 572.0,221.9 572.7,218.0 573.3,216.1 574.0,217.7 574.7,219.9 575.4,223.5 576.1,230.2 576.8,225.4 577.5,220.8 578.2,218.5 578.9,217.7 579.6,217.8 580.3,221.5 581.0,228.0 581.6,227.8 582.3,223.0 583.0,220.5 583.7,219.3 584.4,220.3 585.1,223.2 585.8,228.7 586.5,230.7 587.2,224.6 587.9,220.5 588.6,218.7 589.3,218.7 589.9,220.9 590.6,226.2 591.3,232.4 592.0,227.4 592.7,222.9 593.4,220.7 594.1,220.9 594.8,222.3 595.5,226.5 596.2,232.1 596.9,228.0 597.5,223.1 598.2,220.2 598.9,219.8 599.6,221.1 600.3,223.5 601.0,229.2 601.7,228.5 602.4,222.9 603.1,219.8 603.8,218.8 604.5,219.1 605.2,222.5 605.8,226.6 606.5,229.7 607.2,223.6 607.9,220.6 608.6,219.6 609.3,219.5 610.0,221.9 610.7,225.5 611.4,230.7 612.1,223.9 612.8,220.0 613.4,217.0 614.1,216.1 614.8,218.2 615.5,222.1 616.2,228.1 616.9,225.2 617.6,220.1 618.3,218.9 619.0,218.4 619.7,220.0 620.4,223.3 621.1,228.2 621.7,228.9 622.4,223.9 623.1,221.4 623.8,220.0 624.5,220.1 625.2,221.8 625.9,226.7 626.6,230.0 627.3,223.9 628.0,219.2 628.7,216.8 629.3,216.5 630.0,219.6 630.7,222.9 631.4,230.3 632.1,224.4 632.8,220.2 633.5,218.8 634.2,219.0 634.9,220.7 635.6,223.6 636.3,228.8 637.0,226.8 637.6,221.3 638.3,218.9 639.0,218.4 639.7,219.1 640.4,222.1 641.1,227.2 641.8,227.7 642.5,222.9 643.2,219.5 643.9,219.1 644.6,220.0 645.3,223.0 645.9,227.6 646.6,232.4 647.3,226.5 648.0,223.5 648.7,221.2 649.4,221.6 650.1,224.2 650.8,227.7 651.5,233.6 652.2,227.7 652.9,222.2 653.5,219.6 654.2,219.4 654.9,221.3 655.6,224.8 656.3,230.0 657.0,228.5 657.7,224.0 658.4,221.0 659.1,220.1 659.8,221.8 660.5,225.6 661.2,230.5 661.8,231.9 662.5,225.7 663.2,221.6 663.9,220.4 664.6,221.0 665.3,223.7 666.0,228.3 666.7,231.9 667.4,226.2" stroke="#ffff00"/>
<polyline points="380.7,192.7 382.3,169.8 383.9,186.1 385.5,167.0 387.1,133.6 388.8,126.0 390.4,166.6 392.0,100.4 393.6,103.8 395.2,124.9 396.8,131.9 398.4,112.9 400.1,109.5 401.7,116.1 403.3,107.3 404.9,114.0 406.5,110.9 408.1,136.8 409.7,111.8 411.3,136.9 413.0,131.8 414.6,104.8 416.2,135.4 417.8,117.9 419.4,109.2 421.0,126.4 422.6,138.0 424.2,106.1 425.9,116.1 427.5,133.7 429.1,106.8 430.7,115.2 432.3,140.3 433.9,116.0 435.5,104.0 437.2,169.3 438.8,108.5 440.4,116.3 442.0,99.8 443.6,121.9 445.2,112.1 446.8,108.6 448.4,103.6 450.1,116.0 451.7,100.2 453.3,106.5 454.9,154.5 456.5,154.0 458.1,149.1 459.7,104.6 461.4,113.4 463.0,118.9 464.6,123.9 466.2,106.6 467.8,154.1 469.4,117.4 471.0,118.1 472.6,114.8 474.3,105.5 475.9,136.1 477.5,131.6 479.1,148.2 480.7,106.7 482.3,107.0 483.9,122.9 485.5,127.4 487.2,109.4 488.8,119.1 490.4,121.4 492.0,107.4 493.6,113.0 495.2,143.8 496.8,122.9 498.5,133.5 500.1,131.8 501.7,112.2 503.3,111.6 504.9,114.1 506.5,124.1 508.1,143.5 509.7,104.1 511.4,121.0 513.0,117.6 514.6,111.1 516.2,117.9 517.8,128.7 519.4,110.4 521.0,132.6 522.7,160.0 524.3,112.3 525.9,119.9 527.5,146.5 529.1,159.9 530.7,157.0 532.3,144.8 533.9,137.6 535.6,148.0 537.2,166.0 538.8,183.4 540.4,155.2 542.0,192.4 543.6,179.0 545.2,185.8 546.8,187.8 548.5,172.7 550.1,173.5 551.7,192.9 553.3,181.8 554.0,182.6 554.7,193.9 555.4,195.8 556.1,198.2 556.8,200.7 557.4,204.2 558.1,206.7 558.8,208.6 559.5,211.9 560.2,220.4 560.9,249.4 561.6,236.7 562.3,232.2 563.0,235.4 563.7,251.8 564.4,259.0 565.1,239.3 565.7,231.8 566.4,232.6 567.1,246.7 567.8,279.6 568.5,245.9 569.2,245.8 569.9,280.8 570.6,254.1 571.3,242.5 572.0,241.4 572.7,245.8 573.3,257.3 574.0,275.3 574.7,264.9 575.4,255.3 576.1,258.3 576.8,264.7 577.5,265.7 578.2,255.9 578.9,248.9 579.6,241.7 580.3,237.2 581.0,235.3 581.6,235.9 582.3,240.1 583.0,253.4 583.7,282.6 584.4,247.3 585.1,240.1 585.8,247.5 586.5,266.9 587.2,274.4 587.9,276.7 588.6,279.5 589.3,284.7 589.9,270.1 590.6,254.4 591.3,250.6 592.0,253.2 592.7,250.7 593.4,240.5 594.1,234.5 594.8,234.3 595.5,241.1 596.2,255.8 596.9,258.2 597.5,249.7 598.2,250.2 598.9,262.8 599.6,261.4 600.3,253.8 601.0,255.1 601.7,251.1 602.4,244.7 603.1,244.2 603.8,245.7 604.5,249.8 605.2,267.8 605.8,275.1 606.5,248.0 607.2,239.2 607.9,238.3 608.6,245.5 609.3,249.8 610.0,243.6 610.7,239.8 611.4,235.8 612.1,234.5 612.8,234.5 613.4,241.2 614.1,266.6 614.8,265.4 615.5,245.1 616.2,241.6 616.9,247.5 617.6,260.9 618.3,266.7 619.0,260.5 619.7,257.8 620.4,258.6 621.1,256.2 621.7,260.1 622.4,274.4 623.1,248.9 623.8,238.9 624.5,241.3 625.2,259.0 625.9,268.9 626.6,254.5 627.3,245.5 628.0,243.3 628.7,248.6 629.3,257.2 630.0,258.7 630.7,263.2 631.4,249.7 632.1,237.1 632.8,234.9 633.5,236.2 634.2,241.2 634.9,247.8 635.6,263.8 636.3,273.1 637.0,249.1 637.6,243.3 638.3,245.3 639.0,254.2 639.7,258.4 640.4,251.4 641.1,247.7 641.8,248.9 642.5,254.5 643.2,268.4 643.9,273.4 644.6,259.3 645.3,247.6 645.9,241.3 646.6,241.4 647.3,249.0 648.0,267.9 648.7,319.8 649.4,280.1 650.1,280.6 650.8,300.0 651.5,293.2 652.2,298.5 652.9,296.3 653.5,293.0 654.2,270.1 654.9,257.1 655.6,255.1 656.3,258.9 657.0,258.8 657.7,251.3 658.4,247.1 659.1,250.6 659.8,261.9 660.5,261.3 661.2,244.3 661.8,238.1 662.5,242.8 663.2,265.4 663.9,270.1 664.6,250.0 665.3,247.8 666.0,256.8 666.7,276.0 667.4,294.0" stroke="#00ffff"/>
<polyline points="380.7,184.2 382.3,192.8 383.9,170.2 385.5,154.7 387.1,132.1 388.8,115.6 390.4,134.0 392.0,132.2 393.6,112.2 395.2,151.0 396.8,148.4 398.4,112.2 400.1,118.1 401.7,134.5 403.3,105.5 404.9,118.6 406.5,117.2 408.1,111.9 409.7,106.5 411.3,112.3 413.0,131.0 414.6,121.4 416.2,121.1 417.8,103.1 419.4,109.1 421.0,133.9 422.6,112.1 424.2,140.2 425.9,102.8 427.5,125.2 429.1,124.5 430.7,147.2 432.3,125.5 433.9,114.0 435.5,103.3 437.2,110.6 438.8,112.0 440.4,111.3 442.0,112.9 443.6,123.4 445.2,129.9 446.8,129.7 448.4,122.8 450.1,107.6 451.7,114.5 453.3,114.6 454.9,111.0 456.5,159.4 458.1,122.0 459.7,132.0 461.4,129.4 463.0,119.0 464.6,150.2 466.2,115.0 467.8,112.7 469.4,123.6 471.0,118.4 472.6,107.2 474.3,135.0 475.9,141.1 477.5,134.3 479.1,164.9 480.7,150.2 482.3,155.7 483.9,128.1 485.5,116.4 487.2,117.3 488.8,138.2 490.4,106.4 492.0,152.3 493.6,142.0 495.2,113.1 496.8,125.3 498.5,143.7 500.1,173.7 501.7,136.6 503.3,165.8 504.9,131.6 506.5,120.9 508.1,114.9 509.7,114.4 511.4,128.2 513.0,131.5 514.6,108.2 516.2,123.4 517.8,118.5 519.4,120.2 521.0,144.9 522.7,151.1 524.3,117.1 525.9,141.4 527.5,124.6 529.1,144.2 530.7,162.3 532.3,125.3 533.9,145.9 535.6,186.0 537.2,150.9 538.8,163.0 540.4,149.5 542.0,169.3 543.6,175.5 545.2,174.5 546.8,205.8 548.5,189.4 550.1,230.5 551.7,200.6 553.3,198.9 554.0,199.7 554.7,205.0 555.4,205.8 556.1,207.2 556.8,209.4 557.4,213.1 558.1,211.9 558.8,210.3 559.5,209.4 560.2,209.6 560.9,211.8 561.6,215.4 562.3,222.1 563.0,217.1 563.7,213.6 564.4,212.4 565.1,213.6 565.7,216.4 566.4,223.2 567.1,232.7 567.8,224.6 568.5,220.1 569.2,217.3 569.9,217.9 570.6,220.4 571.3,226.9 572.0,236.0 572.7,226.6 573.3,221.8 574.0,219.4 574.7,219.0 575.4,221.3 576.1,228.4 576.8,235.9 577.5,226.5 578.2,221.2 578.9,218.3 579.6,217.9 580.3,221.3 581.0,227.8 581.6,234.7 582.3,225.1 583.0,220.1 583.7,217.6 584.4,217.9 585.1,221.0 585.8,227.7 586.5,233.0 587.2,225.6 587.9,220.9 588.6,219.3 589.3,219.7 589.9,224.1 590.6,230.5 591.3,234.9 592.0,226.3 592.7,221.6 593.4,219.1 594.1,219.7 594.8,222.8 595.5,230.0 596.2,233.6 596.9,225.6 597.5,222.3 598.2,220.9 598.9,222.2 599.6,226.4 600.3,233.2 601.0,234.5 601.7,227.1 602.4,222.2 603.1,221.3 603.8,221.6 604.5,226.0 605.2,232.6 605.8,233.2 606.5,226.6 607.2,224.0 607.9,222.0 608.6,222.4 609.3,225.3 610.0,233.1 610.7,232.8 611.4,225.8 612.1,220.9 612.8,218.8 613.4,220.0 614.1,224.7 614.8,232.6 615.5,231.6 616.2,224.3 616.9,220.1 617.6,219.2 618.3,221.7 619.0,227.0 619.7,234.7 620.4,231.5 621.1,224.6 621.7,221.1 622.4,220.0 623.1,221.2 623.8,225.3 624.5,233.6 625.2,230.5 625.9,222.9 626.6,220.0 627.3,219.2 628.0,221.5 628.7,226.1 629.3,234.5 630.0,231.2 630.7,224.3 631.4,221.3 632.1,221.3 632.8,223.8 633.5,228.7 634.2,237.4 634.9,232.5 635.6,226.4 636.3,223.0 637.0,222.4 637.6,224.9 638.3,230.1 639.0,238.6 639.7,232.6 640.4,227.1 641.1,223.7 641.8,222.9 642.5,224.8 643.2,229.8 643.9,238.0 644.6,231.1 645.3,224.7 645.9,222.0 646.6,220.2 647.3,223.5 648.0,229.2 648.7,237.3 649.4,230.3 650.1,224.5 650.8,222.1 651.5,221.9 652.2,224.2 652.9,229.2 653.5,238.0 654.2,229.7 654.9,225.1 655.6,221.9 656.3,222.1 657.0,224.5 657.7,229.6 658.4,239.1 659.1,230.3 659.8,224.8 660.5,222.1 661.2,222.9 661.8,225.1 662.5,230.3 663.2,237.4 663.9,230.2 664.6,224.7 665.3,223.0 666.0,223.2 666.7,226.1 667.4,231.3" stroke="#ff00ff"/>
<polyline points="380.7,216.9 382.3,189.2 383.9,159.8 385.5,172.8 387.1,154.4 388.8,137.7 390.4,140.0 392.0,173.2 393.6,136.0 395.2,152.3 396.8,141.9 398.4,133.5 400.1,121.7 401.7,129.1 403.3,160.6 404.9,132.0 406.5,147.4 408.1,122.1 409.7,122.7 411.3,157.7 413.0,146.2 414.6,142.8 416.2,119.8 417.8,142.6 419.4,125.4 421.0,120.0 422.6,164.0 424.2,130.1 425.9,139.4 427.5,141.0 429.1,121.1 430.7,126.2 432.3,170.0 433.9,148.6 435.5,123.9 437.2,136.1 438.8,127.9 440.4,164.5 442.0,181.4 443.6,144.3 445.2,133.0 446.8,143.9 448.4,131.3 450.1,139.2 451.7,144.5 453.3,125.9 454.9,153.7 456.5,176.1 458.1,138.0 459.7,179.8 461.4,157.3 463.0,142.4 464.6,140.3 466.2,129.5 467.8,122.2 469.4,126.9 471.0,131.4 472.6,130.6 474.3,128.9 475.9,128.5 477.5,132.3 479.1,138.5 480.7,150.1 482.3,148.0 483.9,154.9 485.5,159.4 487.2,153.2 488.8,128.7 490.4,141.4 492.0,149.3 493.6,127.5 495.2,156.6 496.8,163.5 498.5,124.4 500.1,155.4 501.7,129.3 503.3,137.2 504.9,128.7 506.5,136.0 508.1,140.9 509.7,129.8 511.4,150.6 513.0,125.5 514.6,140.9 516.2,143.2 517.8,125.8 519.4,157.6 521.0,151.5 522.7,158.1 524.3,132.4 525.9,149.7 527.5,164.4 529.1,147.3 530.7,138.7 532.3,168.1 533.9,182.5 535.6,177.0 537.2,186.0 538.8,177.3 540.4,193.2 542.0,213.9 543.6,178.0 545.2,203.9 546.8,230.0 548.5,213.6 550.1,225.0 551.7,218.7 553.3,217.6 554.0,218.4 554.7,209.1 555.4,212.3 556.1,216.4 556.8,222.1 557.4,227.3 558.1,228.3 558.8,229.1 559.5,231.3 560.2,236.0 560.9,243.6 561.6,255.4 562.3,275.3 563.0,308.1 563.7,278.5 564.4,265.7 565.1,262.5 565.7,267.2 566.4,284.6 567.1,291.0 567.8,266.5 568.5,260.2 569.2,267.0 569.9,308.6 570.6,278.0 571.3,267.5 572.0,275.4 572.7,305.5 573.3,272.8 574.0,267.5 574.7,271.6 575.4,279.1 576.1,282.1 576.8,277.0 577.5,275.1 578.2,281.6 578.9,275.3 579.6,269.1 580.3,276.2 581.0,355.2 581.6,273.1 582.3,260.9 583.0,258.0 583.7,256.1 584.4,256.1 585.1,258.3 585.8,266.7 586.5,279.7 587.2,281.0 587.9,276.6 588.6,274.8 589.3,275.5 589.9,275.1 590.6,278.3 591.3,286.6 592.0,286.0 592.7,284.5 593.4,292.2 594.1,309.6 594.8,284.5 595.5,274.4 596.2,281.2 596.9,331.4 597.5,281.6 598.2,269.9 598.9,268.4 599.6,270.7 600.3,272.2 601.0,267.4 601.7,266.4 602.4,280.5 603.1,307.1 603.8,269.4 604.5,261.1 605.2,265.5 605.8,283.4 606.5,299.5 607.2,281.2 607.9,276.5 608.6,273.7 609.3,266.3 610.0,263.3 610.7,265.2 611.4,273.0 612.1,298.1 612.8,293.4 613.4,275.4 614.1,274.8 614.8,283.1 615.5,291.5 616.2,283.4 616.9,270.3 617.6,265.7 618.3,271.4 619.0,293.2 619.7,298.9 620.4,286.2 621.1,276.7 621.7,269.4 622.4,270.0 623.1,278.3 623.8,296.0 624.5,315.4 625.2,293.3 625.9,278.5 626.6,269.7 627.3,267.0 628.0,271.4 628.7,284.3 629.3,286.6 630.0,272.1 630.7,269.4 631.4,275.8 632.1,297.9 632.8,312.8 633.5,293.7 634.2,296.0 634.9,295.1 635.6,286.2 636.3,283.1 637.0,277.4 637.6,269.3 638.3,265.1 639.0,263.6 639.7,263.1 640.4,262.3 641.1,264.1 641.8,273.2 642.5,293.3 643.2,314.4 643.9,284.1 644.6,271.8 645.3,267.2 645.9,265.1 646.6,265.6 647.3,272.0 648.0,279.5 648.7,280.1 649.4,271.6 650.1,263.2 650.8,258.6 651.5,258.6 652.2,258.6 652.9,261.8 653.5,273.4 654.2,275.4 654.9,270.6 655.6,273.5 656.3,289.5 657.0,288.6 657.7,279.1 658.4,278.4 659.1,271.4 659.8,265.0 660.5,267.1 661.2,280.6 661.8,347.6 662.5,292.5 663.2,279.2 663.9,274.4 664.6,277.0 665.3,283.7 666.0,277.0 666.7,271.0 667.4,272.8" stroke="#800000"/>
<polyline points="380.7,220.8 382.3,201.7 383.9,189.6 385.5,145.7 387.1,138.5 388.8,135.6 390.4,146.6 392.0,119.1 393.6,131.7 395.2,137.1 396.8,163.9 398.4,124.0 400.1,151.8 401.7,121.5 403.3,121.2 404.9,133.2 406.5,112.2 408.1,181.0 409.7,114.5 411.3,106.8 413.0,126.5 414.6,113.8 416.2,118.7 417.8,185.3 419.4,120.2 421.0,122.2 422.6,107.3 424.2,140.3 425.9,111.1 427.5,139.8 429.1,107.6 430.7,129.7 432.3,108.7 433.9,114.3 435.5,118.1 437.2,118.7 438.8,125.9 440.4,108.1 442.0,111.8 443.6,168.8 445.2,117.5 446.8,123.7 448.4,121.7 450.1,123.8 451.7,135.1 453.3,122.3 454.9,121.3 456.5,122.0 458.1,110.6 459.7,123.6 461.4,121.3 463.0,126.1 464.6,125.5 466.2,122.2 467.8,137.5 469.4,112.7 471.0,156.1 472.6,131.8 474.3,137.8 475.9,125.5 477.5,137.2 479.1,146.5 480.7,125.6 482.3,140.5 483.9,122.7 485.5,111.4 487.2,156.3 488.8,213.3 490.4,113.3 492.0,134.3 493.6,131.7 495.2,142.4 496.8,131.8 498.5,141.0 500.1,147.4 501.7,131.2 503.3,127.6 504.9,125.8 506.5,124.3 508.1,164.7 509.7,171.3 511.4,146.4 513.0,118.5 514.6,125.3 516.2,139.0 517.8,120.1 519.4,113.1 521.0,131.9 522.7,139.0 524.3,117.0 525.9,119.3 527.5,129.4 529.1,123.3 530.7,211.4 532.3,148.3 533.9,150.0 535.6,163.3 537.2,158.7 538.8,157.2 540.4,187.8 542.0,166.1 543.6,187.7 545.2,187.7 546.8,201.8 548.5,184.2 550.1,193.6 551.7,195.2 553.3,225.3 554.0,226.1 554.7,230.9 555.4,239.0 556.1,240.4 556.8,241.1 557.4,243.2 558.1,245.2 558.8,246.9 559.5,248.8 560.2,252.1 560.9,258.4 561.6,267.2 562.3,272.8 563.0,268.2 563.7,266.8 564.4,270.1 565.1,275.0 565.7,279.2 566.4,285.9 567.1,309.0 567.8,309.5 568.5,287.5 569.2,283.4 569.9,284.5 570.6,286.6 571.3,291.2 572.0,299.0 572.7,306.1 573.3,309.1 574.0,301.5 574.7,297.6 575.4,296.6 576.1,293.7 576.8,287.6 577.5,284.3 578.2,287.2 578.9,302.7 579.6,338.4 580.3,308.1 581.0,324.4 581.6,300.7 582.3,286.2 583.0,279.7 583.7,277.0 584.4,275.3 585.1,271.3 585.8,269.1 586.5,272.1 587.2,281.7 587.9,297.8 588.6,307.1 589.3,307.1 589.9,305.3 590.6,293.5 591.3,280.1 592.0,273.3 592.7,272.4 593.4,277.8 594.1,289.7 594.8,296.9 595.5,296.3 596.2,292.0 596.9,287.5 597.5,290.8 598.2,307.2 598.9,310.6 599.6,304.0 600.3,321.7 601.0,298.5 601.7,286.4 602.4,279.8 603.1,271.5 603.8,269.6 604.5,280.1 605.2,316.8 605.8,309.6 606.5,295.7 607.2,289.5 607.9,284.4 608.6,279.2 609.3,275.8 610.0,274.8 610.7,274.8 611.4,278.5 612.1,294.7 612.8,299.5 613.4,279.6 614.1,275.1 614.8,279.6 615.5,287.3 616.2,292.3 616.9,303.5 617.6,291.7 618.3,278.6 619.0,275.5 619.7,281.0 620.4,287.8 621.1,286.1 621.7,282.0 622.4,279.1 623.1,281.1 623.8,294.1 624.5,324.6 625.2,312.8 625.9,329.5 626.6,287.5 627.3,275.2 628.0,274.6 628.7,284.7 629.3,310.2 630.0,307.2 630.7,283.9 631.4,276.4 632.1,276.2 632.8,279.9 633.5,289.3 634.2,303.4 634.9,317.9 635.6,330.1 636.3,307.0 637.0,295.3 637.6,298.9 638.3,285.9 639.0,272.4 639.7,269.9 640.4,271.3 641.1,282.3 641.8,304.3 642.5,301.9 643.2,291.2 643.9,293.0 644.6,303.9 645.3,327.4 645.9,342.2 646.6,327.4 647.3,313.6 648.0,298.8 648.7,291.2 649.4,289.3 650.1,283.4 650.8,271.2 651.5,270.1 652.2,270.1 652.9,282.4 653.5,290.8 654.2,276.2 654.9,272.5 655.6,274.5 656.3,270.2 657.0,270.2 657.7,270.2 658.4,270.2 659.1,283.3 659.8,291.4 660.5,294.8 661.2,294.0 661.8,285.0 662.5,279.7 663.2,279.2 663.9,281.5 664.6,284.1 665.3,289.1 666.0,297.1 666.7,305.7 667.4,316.0" stroke="#008000"/>
<polyline points="380.7,200.4 382.3,178.6 383.9,204.0 385.5,169.8 387.1,137.1 388.8,136.0 390.4,122.3 392.0,213.6 393.6,111.9 395.2,120.9 396.8,127.4 398.4,127.9 400.1,139.4 401.7,118.5 403.3,173.7 404.9,144.2 406.5,122.2 408.1,115.4 409.7,106.0 411.3,130.5 413.0,127.1 414.6,120.3 416.2,122.1 417.8,111.8 419.4,117.8 421.0,110.3 422.6,124.9 424.2,135.8 425.9,134.1 427.5,120.9 429.1,125.8 430.7,139.0 432.3,130.2 433.9,129.9 435.5,137.9 437.2,124.5 438.8,146.4 440.4,128.5 442.0,152.5 443.6,114.2 445.2,123.4 446.8,115.2 448.4,154.0 450.1,113.1 451.7,172.4 453.3,126.7 454.9,155.5 456.5,133.5 458.1,112.4 459.7,117.0 461.4,130.3 463.0,109.5 464.6,127.6 466.2,112.4 467.8,126.4 469.4,135.6 471.0,167.6 472.6,119.9 474.3,182.9 475.9,132.8 477.5,154.9 479.1,109.5 480.7,134.6 482.3,124.0 483.9,139.3 485.5,126.7 487.2,115.7 488.8,139.0 490.4,177.0 492.0,139.3 493.6,130.7 495.2,137.9 496.8,175.9 498.5,158.2 500.1,145.8 501.7,113.9 503.3,121.6 504.9,139.5 506.5,121.9 508.1,128.0 509.7,160.9 511.4,128.6 513.0,127.5 514.6,125.1 516.2,188.8 517.8,180.5 519.4,112.4 521.0,132.6 522.7,137.4 524.3,133.4 525.9,165.8 527.5,139.0 529.1,158.8 530.7,126.3 532.3,157.4 533.9,134.0 535.6,155.9 537.2,144.9 538.8,170.3 540.4,153.9 542.0,191.2 543.6,163.0 545.2,187.2 546.8,230.8 548.5,196.3 550.1,202.1 551.7,203.6 553.3,214.0 554.0,214.9 554.7,216.3 555.4,218.4 556.1,219.0 556.8,217.9 557.4,217.1 558.1,217.0 558.8,218.0 559.5,220.2 560.2,226.8 560.9,226.4 561.6,220.5 562.3,217.9 563.0,216.4 563.7,218.0 564.4,223.2 565.1,233.9 565.7,232.3 566.4,222.6 567.1,217.3 567.8,216.6 568.5,218.0 569.2,224.5 569.9,236.5 570.6,234.5 571.3,225.7 572.0,222.0 572.7,220.3 573.3,221.8 574.0,226.7 574.7,238.5 575.4,236.8 576.1,225.3 576.8,221.1 577.5,218.7 578.2,219.9 578.9,224.7 579.6,234.7 580.3,235.7 581.0,224.8 581.6,219.9 582.3,218.7 583.0,220.3 583.7,226.0 584.4,235.7 585.1,235.7 585.8,226.5 586.5,221.2 587.2,219.8 587.9,221.9 588.6,227.1 589.3,237.0 589.9,238.5 590.6,227.5 591.3,223.5 592.0,221.9 592.7,223.7 593.4,228.2 594.1,237.6 594.8,240.2 595.5,229.3 596.2,224.7 596.9,223.6 597.5,225.5 598.2,229.5 598.9,238.9 599.6,242.3 600.3,231.3 601.0,225.4 601.7,223.6 602.4,224.0 603.1,228.3 603.8,237.4 604.5,241.4 605.2,229.2 605.8,224.1 606.5,220.9 607.2,221.9 607.9,226.0 608.6,234.9 609.3,240.4 610.0,228.7 610.7,222.2 611.4,219.7 612.1,220.3 612.8,224.9 613.4,233.9 614.1,240.7 614.8,228.2 615.5,222.3 616.2,219.7 616.9,221.3 617.6,226.0 618.3,234.9 619.0,242.5 619.7,231.5 620.4,224.9 621.1,223.5 621.7,223.4 622.4,227.9 623.1,236.2 623.8,243.8 624.5,230.1 625.2,222.4 625.9,219.5 626.6,219.4 627.3,223.5 628.0,232.3 628.7,240.1 629.3,227.2 630.0,221.8 630.7,220.5 631.4,222.4 632.1,226.3 632.8,236.2 633.5,244.5 634.2,232.1 634.9,225.7 635.6,224.9 636.3,225.3 637.0,228.5 637.6,237.1 638.3,246.4 639.0,231.6 639.7,225.7 640.4,222.0 641.1,223.0 641.8,225.2 642.5,232.5 643.2,243.2 643.9,229.9 644.6,223.4 645.3,220.1 645.9,220.1 646.6,225.3 647.3,232.7 648.0,245.0 648.7,232.1 649.4,225.8 650.1,222.1 650.8,223.5 651.5,227.9 652.2,235.2 652.9,246.9 653.5,233.5 654.2,226.0 654.9,222.6 655.6,222.9 656.3,226.3 657.0,233.4 657.7,246.7 658.4,233.0 659.1,226.5 659.8,223.2 660.5,223.4 661.2,227.2 661.8,234.4 662.5,248.7 663.2,233.6 663.9,226.6 664.6,223.9 665.3,223.5 666.0,226.6 666.7,234.1 667.4,247.7" stroke="#000080"/>
<polyline points="380.7,200.2 382.3,183.5 383.9,175.2 385.5,130.3 387.1,160.5 388.8,141.4 390.4,156.0 392.0,175.3 393.6,136.2 395.2,131.1 396.8,129.1 398.4,141.5 400.1,106.3 401.7,115.4 403.3,211.8 404.9,158.3 406.5,106.1 408.1,152.9 409.7,125.5 411.3,123.6 413.0,134.6 414.6,130.1 416.2,117.8 417.8,116.1 419.4,110.4 421.0,123.0 422.6,119.1 424.2,112.8 425.9,144.3 427.5,135.6 429.1,124.7 430.7,130.9 432.3,129.3 433.9,127.7 435.5,107.4 437.2,128.8 438.8,125.1 440.4,107.6 442.0,131.0 443.6,182.8 445.2,124.5 446.8,122.0 448.4,143.8 450.1,123.4 451.7,162.6 453.3,143.4 454.9,184.9 456.5,121.3 458.1,145.7 459.7,124.2 461.4,117.3 463.0,158.0 464.6,140.5 466.2,109.6 467.8,156.4 469.4,163.4 471.0,145.6 472.6,145.7 474.3,138.1 475.9,131.7 477.5,142.1 479.1,134.2 480.7,132.0 482.3,164.3 483.9,126.1 485.5,125.2 487.2,139.1 488.8,137.4 490.4,124.0 492.0,129.2 493.6,118.4 495.2,134.9 496.8,121.4 498.5,126.8 500.1,146.3 501.7,111.3 503.3,149.6 504.9,113.3 506.5,150.9 508.1,150.7 509.7,151.5 511.4,169.4 513.0,131.3 514.6,127.8 516.2,122.7 517.8,112.5 519.4,127.5 521.0,148.0 522.7,137.7 524.3,126.8 525.9,142.0 527.5,127.6 529.1,141.2 530.7,152.9 532.3,152.8 533.9,170.2 535.6,142.1 537.2,150.6 538.8,224.4 540.4,192.8 542.0,181.5 543.6,176.9 545.2,189.2 546.8,190.8 548.5,191.3 550.1,228.5 551.7,195.6 553.3,212.0 554.0,212.8 554.7,213.8 555.4,214.2 556.1,215.4 556.8,218.1 557.4,222.0 558.1,218.6 558.8,217.0 559.5,216.2 560.2,216.5 560.9,219.9 561.6,228.3 562.3,225.4 563.0,219.3 563.7,216.0 564.4,216.2 565.1,218.6 565.7,227.2 566.4,237.9 567.1,224.8 567.8,218.2 568.5,216.9 569.2,218.8 569.9,226.0 570.6,238.2 571.3,235.0 572.0,225.8 572.7,221.4 573.3,221.1 574.0,224.5 574.7,232.6 575.4,243.2 576.1,229.1 576.8,222.7 577.5,220.8 578.2,222.2 578.9,228.2 579.6,240.4 580.3,237.0 581.0,226.9 581.6,222.9 582.3,222.0 583.0,225.6 583.7,233.4 584.4,245.3 585.1,232.3 585.8,225.2 586.5,223.5 587.2,225.8 587.9,230.5 588.6,241.5 589.3,239.1 589.9,229.2 590.6,224.3 591.3,223.2 592.0,226.8 592.7,235.0 593.4,246.5 594.1,233.0 594.8,227.1 595.5,222.9 596.2,223.8 596.9,229.0 597.5,240.6 598.2,237.9 598.9,227.0 599.6,223.2 600.3,222.6 601.0,226.2 601.7,235.7 602.4,248.4 603.1,234.5 603.8,227.1 604.5,224.9 605.2,225.9 605.8,230.8 606.5,241.1 607.2,239.5 607.9,228.2 608.6,223.5 609.3,222.6 610.0,225.9 610.7,234.0 611.4,248.0 612.1,233.2 612.8,227.3 613.4,224.1 614.1,226.2 614.8,231.6 615.5,243.0 616.2,241.9 616.9,230.6 617.6,225.9 618.3,225.1 619.0,227.8 619.7,235.0 620.4,249.3 621.1,235.2 621.7,227.6 622.4,224.2 623.1,226.1 623.8,231.0 624.5,241.4 625.2,240.7 625.9,229.8 626.6,225.0 627.3,224.4 628.0,226.7 628.7,234.4 629.3,248.4 630.0,232.9 630.7,226.0 631.4,223.3 632.1,224.4 632.8,229.3 633.5,239.0 634.2,239.7 634.9,229.2 635.6,223.6 636.3,222.7 637.0,225.7 637.6,232.2 638.3,247.5 639.0,233.0 639.7,225.8 640.4,223.5 641.1,223.9 641.8,229.4 642.5,239.6 643.2,240.5 643.9,230.6 644.6,224.4 645.3,223.8 645.9,227.0 646.6,233.5 647.3,248.5 648.0,234.9 648.7,227.8 649.4,224.5 650.1,224.2 650.8,229.9 651.5,239.7 652.2,240.5 652.9,229.8 653.5,224.8 654.2,224.4 654.9,226.9 655.6,233.9 656.3,249.3 657.0,235.9 657.7,227.1 658.4,224.2 659.1,225.4 659.8,229.5 660.5,238.2 661.2,240.8 661.8,229.5 662.5,223.5 663.2,223.1 663.9,226.6 664.6,233.6 665.3,246.9 666.0,235.2 666.7,228.1 667.4,224.6" stroke="#808000"/>
<polyline points="380.7,215.7 382.3,200.8 383.9,157.9 385.5,155.4 387.1,142.5 388.8,146.5 390.4,129.8 392.0,121.6 393.6,152.3 395.2,113.8 396.8,130.1 398.4,124.1 400.1,135.1 401.7,147.8 403.3,128.7 404.9,127.0 406.5,120.3 408.1,138.6 409.7,141.0 411.3,171.0 413.0,118.8 414.6,137.5 416.2,119.6 417.8,158.5 419.4,114.5 421.0,151.0 422.6,125.7 424.2,136.7 425.9,130.0 427.5,127.8 429.1,128.3 430.7,127.3 432.3,127.0 433.9,135.5 435.5,140.1 437.2,169.0 438.8,118.7 440.4,141.9 442.0,130.4 443.6,133.3 445.2,114.1 446.8,114.2 448.4,131.2 450.1,136.9 451.7,132.0 453.3,121.5 454.9,114.5 456.5,132.5 458.1,166.3 459.7,132.0 461.4,150.5 463.0,149.1 464.6,141.2 466.2,123.5 467.8,118.0 469.4,129.6 471.0,150.8 472.6,124.5 474.3,126.2 475.9,146.0 477.5,158.2 479.1,134.4 480.7,117.4 482.3,138.5 483.9,143.0 485.5,128.3 487.2,149.8 488.8,175.7 490.4,137.5 492.0,163.4 493.6,135.6 495.2,125.9 496.8,147.3 498.5,143.5 500.1,144.4 501.7,148.9 503.3,127.3 504.9,141.3 506.5,123.5 508.1,137.1 509.7,135.5 511.4,136.4 513.0,194.7 514.6,123.7 516.2,153.1 517.8,118.8 519.4,130.9 521.0,133.1 522.7,130.3 524.3,134.8 525.9,129.9 527.5,170.6 529.1,152.8 530.7,161.1 532.3,139.3 533.9,153.2 535.6,189.9 537.2,158.9 538.8,159.6 540.4,190.2 542.0,174.8 543.6,172.9 545.2,259.5 546.8,195.6 548.5,190.4 550.1,214.2 551.7,206.5 553.3,224.3 554.0,225.2 554.7,220.4 555.4,220.8 556.1,221.9 556.8,227.8 557.4,228.7 558.1,222.9 558.8,223.1 559.5,230.8 560.2,234.0 560.9,227.1 561.6,230.2 562.3,235.5 563.0,227.6 563.7,223.9 564.4,224.4 565.1,231.5 565.7,256.8 566.4,248.0 567.1,231.0 567.8,227.4 568.5,231.8 569.2,243.1 569.9,244.8 570.6,236.4 571.3,234.1 572.0,236.9 572.7,244.1 573.3,252.4 574.0,250.5 574.7,242.3 575.4,237.7 576.1,237.9 576.8,238.6 577.5,237.8 578.2,233.9 578.9,228.8 579.6,227.9 580.3,230.6 581.0,237.7 581.6,250.7 582.3,254.3 583.0,242.8 583.7,235.0 584.4,238.5 585.1,261.6 585.8,235.7 586.5,226.1 587.2,231.6 587.9,277.4 588.6,237.8 589.3,227.1 589.9,231.7 590.6,240.1 591.3,236.6 592.0,236.9 592.7,242.5 593.4,246.3 594.1,245.8 594.8,249.3 595.5,244.0 596.2,229.6 596.9,226.5 597.5,231.8 598.2,238.4 598.9,242.9 599.6,251.8 600.3,265.8 601.0,276.0 601.7,274.5 602.4,283.3 603.1,246.7 603.8,231.4 604.5,223.1 605.2,220.5 605.8,220.5 606.5,220.5 607.2,225.4 607.9,235.1 608.6,240.8 609.3,239.5 610.0,237.3 610.7,235.8 611.4,235.9 612.1,238.4 612.8,247.2 613.4,248.4 614.1,231.7 614.8,224.6 615.5,225.6 616.2,235.8 616.9,263.2 617.6,245.9 618.3,231.3 619.0,226.1 619.7,226.7 620.4,233.3 621.1,247.2 621.7,260.4 622.4,249.2 623.1,242.3 623.8,240.0 624.5,237.6 625.2,237.2 625.9,245.5 626.6,256.1 627.3,235.4 628.0,226.6 628.7,227.2 629.3,239.0 630.0,278.8 630.7,255.0 631.4,241.2 632.1,240.2 632.8,244.9 633.5,240.7 634.2,231.7 634.9,227.2 635.6,222.8 636.3,221.2 637.0,227.7 637.6,249.9 638.3,259.2 639.0,256.9 639.7,275.4 640.4,259.4 641.1,244.0 641.8,234.0 642.5,236.0 643.2,241.6 643.9,229.9 644.6,225.6 645.3,227.7 645.9,230.3 646.6,233.6 647.3,235.7 648.0,236.0 648.7,235.2 649.4,232.6 650.1,232.2 650.8,232.7 651.5,233.5 652.2,238.7 652.9,246.5 653.5,243.2 654.2,239.5 654.9,242.8 655.6,245.0 656.3,257.3 657.0,279.9 657.7,248.6 658.4,243.1 659.1,246.9 659.8,258.5 660.5,277.8 661.2,260.3 661.8,260.6 662.5,273.2 663.2,269.3 663.9,252.1 664.6,250.8 665.3,261.7 666.0,270.4 666.7,264.6 667.4,269.8" stroke="#800080"/>
<polyline points="380.7,223.3 382.3,190.4 383.9,172.3 385.5,155.1 387.1,154.1 388.8,145.2 390.4,127.8 392.0,159.6 393.6,160.8 395.2,147.2 396.8,114.5 398.4,128.5 400.1,119.0 401.7,140.4 403.3,113.3 404.9,141.9 406.5,128.0 408.1,114.0 409.7,131.7 411.3,158.0 413.0,126.0 414.6,125.0 416.2,123.0 417.8,151.6 419.4,181.2 421.0,142.7 422.6,130.7 424.2,130.0 425.9,119.7 427.5,114.4 429.1,137.7 430.7,189.3 432.3,137.6 433.9,128.4 435.5,117.4 437.2,124.5 438.8,124.7 440.4,179.4 442.0,144.5 443.6,138.1 445.2,126.0 446.8,144.6 448.4,126.1 450.1,120.4 451.7,135.7 453.3,127.5 454.9,171.3 456.5,148.4 458.1,166.7 459.7,144.4 461.4,124.2 463.0,198.0 464.6,125.6 466.2,160.6 467.8,148.0 469.4,138.9 471.0,153.1 472.6,139.2 474.3,145.2 475.9,146.6 477.5,134.0 479.1,138.4 480.7,130.6 482.3,130.1 483.9,142.5 485.5,153.6 487.2,155.5 488.8,133.5 490.4,122.1 492.0,118.6 493.6,161.0 495.2,150.0 496.8,159.4 498.5,135.2 500.1,164.9 501.7,144.0 503.3,157.1 504.9,130.5 506.5,124.0 508.1,182.3 509.7,129.2 511.4,150.0 513.0,134.3 514.6,148.4 516.2,119.8 517.8,119.9 519.4,125.9 521.0,143.2 522.7,128.4 524.3,149.8 525.9,145.2 527.5,140.8 529.1,147.7 530.7,140.0 532.3,153.1 533.9,153.3 535.6,149.2 537.2,210.1 538.8,163.8 540.4,179.4 542.0,169.3 543.6,170.6 545.2,180.6 546.8,191.8 548.5,215.2 550.1,230.2 551.7,194.2 553.3,217.5 554.0,218.4 554.7,214.0 555.4,214.6 556.1,215.1 556.8,216.2 557.4,218.3 558.1,221.3 558.8,224.8 559.5,228.4 560.2,232.9 560.9,239.8 561.6,246.6 562.3,236.1 563.0,229.5 563.7,228.7 564.4,233.1 565.1,238.6 565.7,242.7 566.4,249.9 567.1,259.7 567.8,259.1 568.5,263.8 569.2,291.0 569.9,252.2 570.6,235.4 571.3,227.5 572.0,227.3 572.7,227.3 573.3,227.5 574.0,230.8 574.7,236.2 575.4,246.6 576.1,276.1 576.8,255.0 577.5,245.4 578.2,245.1 578.9,251.0 579.6,259.6 580.3,257.9 581.0,257.5 581.6,284.1 582.3,275.0 583.0,258.9 583.7,252.4 584.4,254.6 585.1,261.8 585.8,261.6 586.5,254.0 587.2,245.6 587.9,237.9 588.6,235.2 589.3,240.6 589.9,247.3 590.6,241.9 591.3,236.0 592.0,234.4 592.7,237.5 593.4,248.6 594.1,299.0 594.8,254.8 595.5,247.6 596.2,258.5 596.9,259.4 597.5,243.7 598.2,239.8 598.9,242.5 599.6,247.4 600.3,257.8 601.0,295.4 601.7,262.8 602.4,245.9 603.1,244.2 603.8,250.5 604.5,260.4 605.2,270.7 605.8,268.4 606.5,269.1 607.2,277.0 607.9,257.8 608.6,247.0 609.3,244.0 610.0,242.5 610.7,242.4 611.4,243.2 612.1,234.3 612.8,230.3 613.4,230.3 614.1,230.3 614.8,237.0 615.5,249.9 616.2,259.0 616.9,258.2 617.6,259.8 618.3,253.4 619.0,241.4 619.7,236.5 620.4,239.5 621.1,251.7 621.7,263.6 622.4,247.5 623.1,246.3 623.8,256.5 624.5,269.1 625.2,261.6 625.9,253.4 626.6,247.4 627.3,242.3 628.0,240.8 628.7,241.7 629.3,242.6 630.0,243.0 630.7,247.0 631.4,260.2 632.1,279.6 632.8,278.0 633.5,281.8 634.2,272.2 634.9,255.4 635.6,251.0 636.3,252.1 637.0,253.5 637.6,261.0 638.3,272.0 639.0,264.7 639.7,254.6 640.4,251.3 641.1,249.3 641.8,246.2 642.5,244.5 643.2,246.0 643.9,249.3 644.6,251.1 645.3,249.7 645.9,250.5 646.6,254.0 647.3,253.6 648.0,251.7 648.7,253.4 649.4,259.2 650.1,258.0 650.8,250.3 651.5,243.7 652.2,240.8 652.9,244.6 653.5,247.7 654.2,241.2 654.9,237.3 655.6,240.7 656.3,248.6 657.0,249.6 657.7,242.2 658.4,235.4 659.1,233.7 659.8,236.3 660.5,244.2 661.2,258.0 661.8,267.6 662.5,272.3 663.2,277.6 663.9,300.1 664.6,272.0 665.3,249.7 666.0,239.2 666.7,236.3 667.4,239.9" stroke="#008080"/>
<polyline points="380.7,255.4 382.3,183.7 383.9,156.5 385.5,179.9 387.1,151.0 388.8,125.7 390.4,137.7 392.0,146.4 393.6,166.8 395.2,130.0 396.8,126.8 398.4,163.0 400.1,158.9 401.7,129.5 403.3,141.1 404.9,149.7 406.5,148.9 408.1,124.4 409.7,117.5 411.3,141.3 413.0,137.6 414.6,123.8 416.2,144.8 417.8,159.5 419.4,116.9 421.0,123.3 422.6,117.1 424.2,135.4 425.9,167.9 427.5,131.7 429.1,150.2 430.7,117.4 432.3,156.5 433.9,129.1 435.5,132.9 437.2,137.1 438.8,126.6 440.4,141.7 442.0,156.5 443.6,118.0 445.2,135.7 446.8,127.8 448.4,147.4 450.1,136.0 451.7,134.0 453.3,160.5 454.9,130.8 456.5,131.8 458.1,126.3 459.7,130.0 461.4,182.5 463.0,127.5 464.6,152.5 466.2,137.7 467.8,121.7 469.4,129.6 471.0,127.6 472.6,134.6 474.3,119.9 475.9,129.9 477.5,163.0 479.1,134.6 480.7,156.9 482.3,126.6 483.9,125.7 485.5,133.3 487.2,145.2 488.8,120.7 490.4,128.8 492.0,154.8 493.6,176.3 495.2,125.3 496.8,125.0 498.5,127.9 500.1,149.2 501.7,121.6 503.3,142.1 504.9,151.6 506.5,142.3 508.1,126.4 509.7,136.2 511.4,136.5 513.0,142.5 514.6,135.5 516.2,126.2 517.8,162.0 519.4,138.6 521.0,142.4 522.7,146.6 524.3,126.5 525.9,184.2 527.5,149.5 529.1,164.9 530.7,225.8 532.3,150.3 533.9,165.3 535.6,155.9 537.2,177.6 538.8,187.8 540.4,191.6 542.0,191.7 543.6,188.2 545.2,237.2 546.8,183.2 548.5,212.8 550.1,244.1 551.7,219.8 553.3,210.8 554.0,211.6 554.7,204.0 555.4,206.2 556.1,208.6 556.8,212.5 557.4,219.2 558.1,222.9 558.8,221.6 559.5,222.2 560.2,225.0 560.9,233.6 561.6,244.0 562.3,238.7 563.0,236.0 563.7,236.1 564.4,242.4 565.1,258.8 565.7,258.1 566.4,247.9 567.1,244.6 567.8,251.5 568.5,269.3 569.2,254.2 569.9,244.5 570.6,243.9 571.3,251.9 572.0,264.6 572.7,268.8 573.3,262.3 574.0,250.1 574.7,243.0 575.4,243.4 576.1,251.6 576.8,270.1 577.5,253.4 578.2,242.6 578.9,243.4 579.6,253.9 580.3,270.3 581.0,255.5 581.6,248.7 582.3,249.7 583.0,246.3 583.7,244.8 584.4,248.9 585.1,254.8 585.8,261.8 586.5,262.6 587.2,257.4 587.9,258.7 588.6,264.4 589.3,270.7 589.9,283.7 590.6,318.2 591.3,289.9 592.0,271.7 592.7,268.3 593.4,261.0 594.1,255.1 594.8,257.4 595.5,268.4 596.2,296.9 596.9,293.2 597.5,274.5 598.2,279.0 598.9,290.6 599.6,262.2 600.3,252.5 601.0,252.0 601.7,254.1 602.4,254.2 603.1,254.4 603.8,256.4 604.5,261.3 605.2,266.9 605.8,269.3 606.5,265.2 607.2,256.1 607.9,248.1 608.6,242.2 609.3,242.0 610.0,242.0 610.7,242.4 611.4,249.9 612.1,261.8 612.8,266.5 613.4,258.1 614.1,252.1 614.8,252.3 615.5,260.7 616.2,260.3 616.9,249.0 617.6,248.5 618.3,260.6 619.0,285.3 619.7,275.8 620.4,265.6 621.1,258.3 621.7,253.6 622.4,253.3 623.1,260.6 623.8,275.9 624.5,264.1 625.2,255.2 625.9,251.7 626.6,251.5 627.3,257.6 628.0,264.3 628.7,254.7 629.3,247.9 630.0,247.2 630.7,252.4 631.4,263.0 632.1,266.6 632.8,254.9 633.5,244.2 634.2,242.5 634.9,242.5 635.6,249.0 636.3,255.2 637.0,260.0 637.6,260.4 638.3,252.9 639.0,247.1 639.7,245.3 640.4,247.1 641.1,252.0 641.8,259.3 642.5,264.8 643.2,268.3 643.9,268.9 644.6,264.0 645.3,262.9 645.9,270.6 646.6,293.4 647.3,290.9 648.0,275.1 648.7,271.0 649.4,269.1 650.1,263.8 650.8,262.5 651.5,268.4 652.2,268.4 652.9,264.1 653.5,266.1 654.2,268.0 654.9,265.6 655.6,265.9 656.3,270.4 657.0,279.2 657.7,299.7 658.4,321.4 659.1,289.6 659.8,275.5 660.5,266.0 661.2,260.2 661.8,262.7 662.5,263.9 663.2,264.3 663.9,269.6 664.6,273.9 665.3,267.2 666.0,262.0 666.7,262.6 667.4,267.6" stroke="#ff0000"/></g><line x1="380.6" y1="355.2" x2="666.2" y2="355.2" stroke="#2a2a90" stroke-width="1.2"/></g><g clip-path="url(#clc3)"><polyline points="728.9,290.2 729.1,290.3 729.2,290.4 729.4,303.6 729.5,303.7 729.7,303.7 729.9,303.8 730.0,270.9 730.2,271.0 730.3,277.3 730.5,277.3 730.7,277.4 730.8,329.6 731.0,357.5 731.1,329.7 731.3,323.0 731.5,323.0 731.6,323.0 731.8,326.5 732.0,285.6 732.1,285.7 732.3,285.7 732.4,285.7 732.6,285.7 732.8,329.0 732.9,329.0 733.1,329.0 733.2,329.1 733.4,329.1 733.6,329.1 733.7,307.5 733.9,289.7 734.0,332.8 734.2,332.9 734.4,296.7 734.5,296.7 734.7,296.8 734.8,296.8 735.0,296.8 735.2,296.8 735.3,308.2 735.5,330.8 735.6,330.8 735.8,330.8 736.0,330.8 736.1,330.7 736.3,334.8 736.5,334.7 736.6,362.3 736.8,362.3 736.9,362.2 737.1,362.1 737.3,333.0 737.4,332.9 737.6,332.8 737.7,332.7 737.9,308.6 738.1,308.4 738.2,308.3 738.4,308.2 738.5,308.0 738.7,307.9 738.9,275.6 739.0,275.4 739.2,275.3 739.3,275.1 739.5,274.9 739.7,274.7 739.8,317.0 740.0,316.8 740.1,316.5 740.3,316.3 740.5,316.1 740.6,315.8 740.8,317.0 740.9,316.7 741.1,316.4 741.3,159.2 741.4,159.2 741.6,159.2 741.8,319.1 741.9,318.8 742.1,318.5 742.2,325.6 742.4,325.3 742.6,324.9 742.7,324.6 742.9,303.7 743.0,302.5 743.2,302.2 743.4,301.9 743.5,301.5 743.7,301.2 743.8,289.2 744.0,288.9 744.2,304.2 744.3,303.9 744.5,303.6 744.6,292.0 744.8,291.7 745.0,321.9 745.1,321.6 745.3,327.6 745.4,327.3 745.6,327.0 745.8,326.7 745.9,310.2 746.1,309.9 746.3,299.9 746.4,299.6 746.6,299.4 746.7,299.1 746.9,252.3 747.1,252.0 747.2,251.8 747.4,251.5 747.5,251.2 747.7,310.7 747.9,291.7 748.0,291.5 748.2,291.3 748.3,291.1 748.5,290.8 748.7,327.6 748.8,285.7 749.0,285.5 749.1,285.3 749.3,285.1 749.5,220.1 749.6,247.5 749.8,314.2 749.9,314.1 750.1,351.4 750.3,351.4 750.4,313.7 750.6,317.0 750.7,290.5 750.9,290.4 751.1,290.3 751.2,290.1 751.4,226.8 751.6,226.8 751.7,226.8 751.9,289.4 752.0,289.2 752.2,294.6 752.4,294.5 752.5,308.9 752.7,308.7 752.8,308.6 753.0,308.5 753.2,308.4 753.3,308.3 753.5,302.8 753.6,302.7 753.8,302.6 754.0,302.6 754.1,302.6 754.3,306.6 754.4,306.6 754.6,293.7 754.8,293.7 754.9,293.8 755.1,293.8 755.2,293.9 755.4,293.9 755.6,288.2 755.7,288.3 755.9,309.2 756.0,301.3 756.2,301.4 756.4,301.5 756.5,263.0 756.7,263.1 756.9,263.3 757.0,263.5 757.2,300.4 757.3,300.6 757.5,300.8 757.7,301.0 757.8,301.2 758.0,272.2 758.1,308.8 758.3,309.0 758.5,310.7 758.6,311.0 758.8,311.3 758.9,311.6 759.1,296.8 759.3,306.4 759.4,306.7 759.6,307.0 759.7,310.3 759.9,301.9 760.1,302.2 760.2,298.8 760.4,299.1 760.5,299.4 760.7,299.7 760.9,300.0 761.0,300.3 761.2,309.5 761.4,333.8 761.5,310.2 761.7,349.0 761.8,349.3 762.0,298.6 762.2,298.9 762.3,299.3 762.5,299.6 762.6,299.9 762.8,294.7 763.0,295.0 763.1,295.3 763.3,298.2 763.4,298.4 763.6,298.7 763.8,299.0 763.9,294.7 764.1,353.6 764.2,353.9 764.4,354.1 764.6,137.8 764.7,137.8 764.9,137.8 765.0,293.7 765.2,293.9 765.4,294.1 765.5,294.3 765.7,290.0 765.8,290.2 766.0,290.3 766.2,290.5 766.3,290.6 766.5,290.8 766.7,323.0 766.8,323.1 767.0,323.3 767.1,317.7 767.3,317.8 767.5,317.9 767.6,318.0 767.8,321.2 767.9,321.2 768.1,291.4 768.3,291.4 768.4,282.3 768.6,282.3 768.7,282.3 768.9,282.3 769.1,308.5 769.2,308.5 769.4,308.4 769.5,308.4 769.7,304.8 769.9,304.8 770.0,272.4 770.2,332.8 770.3,332.7 770.5,332.7 770.7,310.6 770.8,310.5 771.0,310.4 771.2,322.5 771.3,322.3 771.5,307.8 771.6,307.6 771.8,307.5 772.0,307.4 772.1,310.6 772.3,310.5 772.4,310.3 772.6,310.1 772.8,291.8 772.9,309.4 773.1,309.1 773.2,301.7 773.4,301.5 773.6,301.2 773.7,301.0 773.9,300.7 774.0,266.7 774.2,266.5 774.4,262.0 774.5,300.6 774.7,300.3 774.8,288.3 775.0,288.0 775.2,306.1 775.3,305.8 775.5,303.4 775.6,261.5 775.8,263.3 776.0,263.0 776.1,315.6 776.3,315.2 776.5,340.2 776.6,339.9 776.8,339.5 776.9,339.2 777.1,338.9 777.3,338.6 777.4,275.3 777.6,275.0 777.7,274.7 777.9,304.5 778.1,304.2 778.2,314.8 778.4,303.7 778.5,252.8 778.7,314.3 778.9,314.0 779.0,313.8 779.2,313.6 779.3,298.4 779.5,266.6 779.7,266.4 779.8,266.2 780.0,266.1 780.1,266.0 780.3,265.9 780.5,276.9 780.6,276.8 780.8,276.7 781.0,276.7 781.1,276.6 781.3,276.6 781.4,306.4 781.6,306.5 781.8,306.5 781.9,306.6 782.1,306.7 782.2,299.1 782.4,299.2 782.6,299.3 782.7,299.5 782.9,299.6 783.0,299.8 783.2,272.2 783.4,272.4 783.5,272.6 783.7,284.2 783.8,284.4 784.0,259.3 784.2,259.6 784.3,296.1 784.5,281.5 784.6,307.1 784.8,307.3 785.0,307.6 785.1,266.5 785.3,265.9 785.4,266.2 785.6,307.8 785.8,308.0 785.9,308.3 786.1,308.6 786.3,320.6 786.4,320.9 786.6,321.1 786.7,321.4 786.9,321.6 787.1,321.9 787.2,209.0 787.4,209.0 787.5,209.0 787.7,284.9 787.9,285.2 788.0,251.7 788.2,251.9 788.3,297.6 788.5,297.9 788.7,298.1 788.8,298.3 789.0,298.5 789.1,298.7 789.3,337.3 789.5,337.5 789.6,337.7 789.8,314.3 789.9,296.7 790.1,296.8 790.3,296.9 790.4,297.0 790.6,297.1 790.8,297.2 790.9,285.2 791.1,285.2 791.2,285.2 791.4,285.2 791.6,285.2 791.7,285.2 791.9,308.3 792.0,308.2 792.2,308.1 792.4,308.0 792.5,333.2 792.7,333.0 792.8,332.9 793.0,253.8 793.2,253.6 793.3,253.4 793.5,253.2 793.6,253.1 793.8,252.9 794.0,324.4 794.1,324.2 794.3,324.0 794.4,323.8 794.6,323.6 794.8,296.5 794.9,296.2 795.1,296.0 795.2,313.1 795.4,295.2 795.6,295.0 795.7,294.7 795.9,294.5 796.1,349.3 796.2,349.0 796.4,307.4 796.5,307.2 796.7,306.9 796.9,306.7 797.0,304.2 797.2,304.0 797.3,301.4 797.5,301.2 797.7,301.0 797.8,300.8 798.0,300.6 798.1,300.5 798.3,303.6 798.5,345.6 798.6,345.5 798.8,293.1 798.9,293.0 799.1,293.0 799.3,292.9 799.4,292.9 799.6,292.9 799.7,246.1 799.9,246.1 800.1,246.1 800.2,246.1 800.4,246.1 800.5,323.1 800.7,323.1 800.9,323.2 801.0,323.2 801.2,315.6 801.4,315.7 801.5,315.7 801.7,295.0 801.8,295.0 802.0,295.0 802.2,295.1 802.3,295.1 802.5,300.6 802.6,275.0 802.8,228.7 803.0,228.8 803.1,228.8 803.3,254.5 803.4,254.6 803.6,254.6 803.8,313.1 803.9,313.1 804.1,299.3 804.2,299.3 804.4,299.3 804.6,299.4 804.7,299.4 804.9,299.4 805.0,324.3 805.2,247.0 805.4,247.1 805.5,155.6 805.7,155.6 805.9,155.6 806.0,307.3 806.2,307.3 806.3,307.3 806.5,316.6 806.7,316.6 806.8,316.5 807.0,316.5 807.1,316.5 807.3,289.2 807.5,289.1 807.6,289.1 807.8,289.0 807.9,365.6 808.1,365.6 808.3,259.8 808.4,259.7 808.6,278.4 808.7,317.5 808.9,317.4 809.1,317.4 809.2,317.3 809.4,290.0 809.5,289.8 809.7,289.5 809.9,289.3 810.0,291.2 810.2,290.9 810.3,290.7 810.5,344.1 810.7,343.9 810.8,343.7 811.0,343.5 811.2,286.4 811.3,284.8 811.5,284.6 811.6,321.8 811.8,321.6 812.0,321.4 812.1,282.9 812.3,265.4 812.4,331.1 812.6,289.3 812.8,293.6 812.9,293.4 813.1,293.3 813.2,293.1 813.4,303.0 813.6,302.9 813.7,275.6 813.9,295.9 814.0,295.8 814.2,325.2 814.4,325.1 814.5,285.0 814.7,284.9 814.8,324.7 815.0,366.7 815.2,366.7 815.3,294.7 815.5,336.7 815.7,336.6 815.8,281.5 816.0,281.3 816.1,281.2 816.3,281.1 816.5,290.3 816.6,290.1 816.8,283.1 816.9,310.4 817.1,310.3 817.3,310.1 817.4,268.4 817.6,268.3 817.7,268.1 817.9,268.0 818.1,283.9 818.2,283.8 818.4,283.6 818.5,283.4 818.7,283.2 818.9,281.5 819.0,281.3 819.2,281.2 819.3,281.0 819.5,280.8 819.7,289.2 819.8,289.0 820.0,288.8 820.1,301.8 820.3,301.6 820.5,301.4 820.6,301.2 820.8,301.0 821.0,300.8 821.1,318.7 821.3,318.5 821.4,318.3 821.6,316.0 821.8,287.9 821.9,287.7 822.1,308.2 822.2,308.1 822.4,307.9 822.6,307.7 822.7,307.5 822.9,331.0 823.0,330.9 823.2,330.7 823.4,330.5 823.5,330.3 823.7,269.5 823.8,269.3 824.0,269.1 824.2,329.5 824.3,259.0 824.5,273.5 824.6,249.8 824.8,273.1 825.0,272.9 825.1,292.2 825.3,292.0 825.5,292.0 825.6,291.9 825.8,288.7 825.9,288.7 826.1,288.7 826.3,290.5 826.4,290.4 826.6,290.4 826.7,305.8 826.9,305.7 827.1,305.7 827.2,305.7 827.4,228.1 827.5,228.1 827.7,228.1 827.9,228.1 828.0,228.1 828.2,228.1 828.3,280.2 828.5,280.2 828.7,280.2 828.8,283.8 829.0,283.8 829.1,283.8 829.3,297.1 829.5,283.9 829.6,294.4 829.8,294.4 829.9,294.4 830.1,294.5 830.3,275.6 830.4,275.7 830.6,275.7 830.8,275.7 830.9,275.8 831.1,275.8 831.2,271.9 831.4,271.9 831.6,272.0 831.7,272.0 831.9,328.4 832.0,328.4 832.2,328.5 832.4,274.2 832.5,274.2 832.7,259.1 832.8,259.1 833.0,233.1 833.2,233.2 833.3,233.2 833.5,233.2 833.6,282.0 833.8,282.0 834.0,272.3 834.1,277.6 834.3,277.6 834.4,277.6 834.6,277.6 834.8,288.1 834.9,288.2 835.1,288.2 835.3,288.2 835.4,283.5 835.6,283.5 835.7,283.5 835.9,283.5 836.1,283.5 836.2,283.4 836.4,328.6 836.5,328.6 836.7,328.5 836.9,328.5 837.0,328.4 837.2,312.3 837.3,283.6 837.5,287.4 837.7,287.3 837.8,290.7 838.0,290.6 838.1,290.5 838.3,290.4 838.5,290.3 838.6,306.4 838.8,270.7 838.9,270.6 839.1,277.2 839.3,293.0 839.4,292.9 839.6,292.8 839.7,292.6 839.9,226.6 840.1,226.5 840.2,226.4 840.4,285.8 840.6,285.7 840.7,285.6 840.9,278.8 841.0,271.5 841.2,282.3 841.4,282.2 841.5,282.1 841.7,274.2 841.8,274.1 842.0,274.0 842.2,273.9 842.3,292.9 842.5,257.9 842.6,268.0 842.8,248.9 843.0,264.5 843.1,264.4 843.3,264.4 843.4,264.3 843.6,264.2 843.8,262.8 843.9,288.2 844.1,288.1 844.2,289.3 844.4,289.2 844.6,278.1 844.7,300.5 844.9,314.2 845.0,314.1 845.2,314.0 845.4,313.9 845.5,315.4 845.7,315.3 845.9,315.3 846.0,315.2 846.2,315.1 846.3,315.0 846.5,276.1 846.7,276.0 846.8,275.9 847.0,275.9 847.1,275.8 847.3,259.3 847.5,219.7 847.6,219.7 847.8,219.7 847.9,259.2 848.1,259.2 848.3,259.2 848.4,274.0 848.6,274.0 848.7,273.9 848.9,272.2 849.1,272.2 849.2,259.3 849.4,259.3 849.5,259.3 849.7,259.3 849.9,259.4 850.0,259.4 850.2,267.4 850.4,267.5 850.5,267.5 850.7,298.6 850.8,298.6 851.0,298.7 851.2,298.7 851.3,298.7 851.5,298.8 851.6,305.1 851.8,305.1 852.0,305.1 852.1,305.1 852.3,277.8 852.4,259.8 852.6,284.0 852.8,259.7 852.9,259.7 853.1,277.6 853.2,271.2 853.4,271.2 853.6,271.1 853.7,271.1 853.9,271.0 854.0,270.9 854.2,268.9 854.4,268.8 854.5,268.7 854.7,288.5 854.8,288.4 855.0,293.3 855.2,301.2 855.3,301.0 855.5,300.8 855.7,300.6 855.8,300.4 856.0,298.3 856.1,298.1 856.3,220.1 856.5,219.9 856.6,219.7 856.8,219.5 856.9,269.4 857.1,144.9 857.3,144.9 857.4,144.9 857.6,296.0 857.7,295.6 857.9,297.4 858.1,296.9 858.2,296.5 858.4,296.0 858.5,295.6 858.7,279.8 858.9,221.8 859.0,266.3 859.2,265.9 859.3,358.5 859.5,358.5 859.7,264.5 859.8,264.0 860.0,119.0 860.2,118.5 860.3,118.1 860.5,225.1 860.6,224.7 860.8,297.9 861.0,297.5 861.1,297.1 861.3,255.2 861.4,254.9 861.6,254.5 861.8,254.2 861.9,215.3 862.1,175.4 862.2,233.2 862.4,232.9 862.6,232.6 862.7,232.3 862.9,232.1 863.0,259.4 863.2,259.2 863.4,263.7 863.5,263.5 863.7,186.7 863.8,186.6 864.0,102.9 864.2,102.9 864.3,102.9 864.5,102.9 864.6,102.9 864.8,102.9 865.0,102.9 865.1,295.1 865.3,295.0 865.5,259.8 865.6,259.7 865.8,259.7 865.9,259.6 866.1,259.6 866.3,259.5 866.4,278.0 866.6,277.9 866.7,277.9 866.9,277.9 867.1,277.9 867.2,289.3 867.4,277.2 867.5,251.9 867.7,251.9 867.9,229.4 868.0,229.4 868.2,254.6 868.3,254.6 868.5,254.6 868.7,254.6 868.8,268.0 869.0,279.0 869.1,278.9 869.3,301.5 869.5,277.7 869.6,130.7 869.8,130.7 870.0,130.7 870.1,277.6 870.3,277.6 870.4,230.7 870.6,230.6 870.8,230.6 870.9,230.5 871.1,230.5 871.2,211.6 871.4,242.5 871.6,272.3 871.7,272.2 871.9,300.8 872.0,300.8 872.2,300.7 872.4,300.6 872.5,300.5 872.7,273.9 872.8,275.2 873.0,273.8 873.2,275.9 873.3,242.3 873.5,242.3 873.6,267.4 873.8,267.6 874.0,267.8 874.1,267.9 874.3,268.1 874.4,268.3 874.6,256.8 874.8,257.0 874.9,257.2 875.1,263.8 875.3,281.1 875.4,281.2 875.6,261.9 875.7,262.1 875.9,173.4 876.1,173.4 876.2,173.4 876.4,303.2 876.5,303.4 876.7,303.5 876.9,303.7 877.0,248.7 877.2,248.9 877.3,249.1 877.5,227.7 877.7,227.9 877.8,256.6 878.0,256.8 878.1,256.9 878.3,252.8 878.5,252.9 878.6,253.1 878.8,253.2 878.9,253.4 879.1,253.6 879.3,272.0 879.4,272.2 879.6,272.3 879.8,272.5 879.9,286.8 880.1,287.0 880.2,258.4 880.4,258.5 880.6,258.6 880.7,258.7 880.9,280.2 881.0,280.3 881.2,280.4 881.4,280.6 881.5,225.4 881.7,225.5 881.8,225.6 882.0,261.4 882.2,261.5 882.3,261.6 882.5,261.7 882.6,261.7 882.8,276.5 883.0,280.6 883.1,276.7 883.3,276.8 883.4,276.9 883.6,274.7 883.8,224.5 883.9,224.6 884.1,224.7 884.2,224.7 884.4,309.4 884.6,309.5 884.7,218.5 884.9,218.6 885.1,309.6 885.2,309.6 885.4,309.7 885.5,249.7 885.7,249.7 885.9,249.8 886.0,249.8 886.2,218.8 886.3,218.8 886.5,218.9 886.7,218.9 886.8,218.0 887.0,127.1 887.1,127.1 887.3,127.1 887.5,305.6 887.6,305.7 887.8,305.7 887.9,305.8 888.1,305.9 888.3,255.5 888.4,255.6 888.6,255.7 888.7,255.8 888.9,255.9 889.1,257.7 889.2,259.6 889.4,259.7 889.5,211.7 889.7,212.0 889.9,212.2 890.0,212.4 890.2,212.6 890.4,212.9 890.5,294.6 890.7,261.9 890.8,264.1 891.0,264.3 891.2,313.8 891.3,267.5 891.5,267.8 891.6,268.0 891.8,241.0 892.0,268.6 892.1,268.9 892.3,293.2 892.4,293.5 892.6,293.8 892.8,294.1 892.9,288.7 893.1,288.9 893.2,289.2 893.4,289.5 893.6,225.3 893.7,225.5 893.9,225.7 894.0,226.0 894.2,269.9 894.4,270.1 894.5,270.4 894.7,277.8 894.9,278.0 895.0,278.2 895.2,278.4 895.3,272.1 895.5,272.3 895.7,272.4 895.8,278.6 896.0,278.7 896.1,278.8 896.3,293.3 896.5,259.8 896.6,259.8 896.8,259.9 896.9,259.9 897.1,259.9 897.3,260.0 897.4,246.7 897.6,246.7 897.7,266.3 897.9,264.0 898.1,264.0 898.2,263.9 898.4,263.8 898.5,276.2 898.7,276.1 898.9,276.0 899.0,275.9 899.2,275.8 899.3,275.6 899.5,285.7 899.7,285.6 899.8,280.4 900.0,280.3 900.2,280.1 900.3,279.0 900.5,278.9 900.6,291.8 900.8,291.7 901.0,291.5 901.1,291.4 901.3,291.2 901.4,277.9 901.6,277.8 901.8,201.9 901.9,201.9 902.1,201.9 902.2,292.0 902.4,292.0 902.6,291.9 902.7,317.6 902.9,317.6 903.0,317.6 903.2,317.5 903.4,317.5 903.5,317.5 903.7,266.8 903.8,266.8 904.0,266.9 904.2,266.9 904.3,278.2 904.5,269.7 904.7,218.2 904.8,218.3 905.0,218.4 905.1,302.7 905.3,302.8 905.5,265.5 905.6,265.6 905.8,278.4 905.9,278.3 906.1,278.2 906.3,278.1 906.4,253.1 906.6,253.0 906.7,252.9 906.9,252.8 907.1,258.4 907.2,258.3 907.4,258.2 907.5,258.1 907.7,259.0 907.9,258.9 908.0,258.9 908.2,281.1 908.3,281.1 908.5,274.6 908.7,274.6 908.8,274.5 909.0,217.1 909.1,217.0 909.3,217.0 909.5,216.9 909.6,216.9 909.8,216.9 910.0,307.1 910.1,249.4 910.3,249.3 910.4,249.3 910.6,249.3 910.8,249.3 910.9,249.2 911.1,275.3 911.2,283.6 911.4,276.7 911.6,276.7 911.7,224.4 911.9,224.3 912.0,224.2 912.2,224.1 912.4,224.0 912.5,223.9 912.7,315.5 912.8,226.8 913.0,226.8 913.2,226.8 913.3,215.2 913.5,215.1 913.6,270.0 913.8,269.8 914.0,269.6 914.1,269.4 914.3,239.8 914.5,179.1 914.6,239.4 914.8,239.2 914.9,239.0 915.1,312.7 915.3,312.5 915.4,312.3 915.6,312.0 915.7,270.3 915.9,270.1 916.1,269.8 916.2,269.6 916.4,269.4 916.5,211.0 916.7,210.8 916.9,268.4 917.0,268.2 917.2,338.9 917.3,338.9 917.5,309.4 917.7,309.2 917.8,255.8 918.0,255.6 918.1,255.4 918.3,272.8 918.5,272.6 918.6,272.5 918.8,272.3 918.9,272.2 919.1,242.4 919.3,242.3 919.4,286.9 919.6,286.8 919.8,286.7 919.9,286.6 920.1,286.5 920.2,286.4 920.4,262.9 920.6,262.8 920.7,262.8 920.9,262.7 921.0,262.7 921.2,260.8 921.4,260.7 921.5,200.1 921.7,200.1 921.8,260.6 922.0,260.6 922.2,280.0 922.3,280.0 922.5,280.0 922.6,281.4 922.8,281.4 923.0,281.4 923.1,281.4 923.3,281.5 923.4,281.5 923.6,284.7 923.8,231.4 923.9,231.4 924.1,231.5 924.3,231.5 924.4,255.0 924.6,255.0 924.7,255.1 924.9,265.7 925.1,265.7 925.2,231.5 925.4,231.5 925.5,231.6 925.7,231.6 925.9,231.6 926.0,231.6 926.2,245.2 926.3,216.5 926.5,216.5 926.7,245.2 926.8,245.2 927.0,306.9 927.1,306.9 927.3,306.8 927.5,306.7 927.6,306.6 927.8,301.5 927.9,301.3 928.1,270.4 928.3,270.3 928.4,282.4 928.6,282.3 928.7,282.1 928.9,281.9 929.1,281.8 929.2,281.6 929.4,252.0 929.6,251.8 929.7,244.3 929.9,244.1 930.0,243.9 930.2,243.6 930.4,238.5 930.5,238.2 930.7,238.0 930.8,261.4 931.0,261.2 931.2,258.7 931.3,258.4 931.5,258.1 931.6,257.8 931.8,285.3 932.0,284.9 932.1,284.6 932.3,280.4 932.4,280.1 932.6,279.8 932.8,249.1 932.9,212.6 933.1,212.6 933.2,212.6 933.4,240.4 933.6,240.1 933.7,239.8 933.9,239.4 934.1,249.6 934.2,260.6 934.4,226.5 934.5,226.2 934.7,225.9 934.9,225.6 935.0,225.3 935.2,212.7 935.3,212.4 935.5,151.6 935.7,151.3 935.8,151.0 936.0,150.8 936.1,257.7 936.3,242.8 936.5,242.6 936.6,217.0 936.8,216.8 936.9,216.6 937.1,216.5 937.3,237.5 937.4,212.7 937.6,237.7 937.7,237.5 937.9,206.9 938.1,206.8 938.2,256.5 938.4,287.0 938.5,286.9 938.7,286.9 938.9,286.8 939.0,286.8 939.2,228.0 939.4,228.0 939.5,228.0 939.7,227.9 939.8,227.9 940.0,227.9 940.2,237.4 940.3,237.4 940.5,217.6 940.6,217.6 940.8,290.2 941.0,290.2 941.1,290.3 941.3,290.3 941.4,290.4 941.6,290.5 941.8,240.8 941.9,240.8 942.1,250.3 942.2,250.4 942.4,250.5 942.6,250.7 942.7,250.8 942.9,250.9 943.0,265.0 943.2,265.1 943.4,265.3 943.5,254.4 943.7,254.5 943.8,254.7 944.0,191.2 944.2,191.2 944.3,191.2 944.5,274.0 944.7,274.1 944.8,274.2 945.0,193.2 945.1,193.3 945.3,193.4 945.5,193.5 945.6,193.6 945.8,193.7 945.9,250.9 946.1,251.0 946.3,251.1 946.4,251.2 946.6,251.3 946.7,251.3 946.9,251.3 947.1,251.3 947.2,222.1 947.4,222.1 947.5,222.1 947.7,222.1 947.9,290.7 948.0,290.6 948.2,290.6 948.3,290.5 948.5,290.4 948.7,290.3 948.8,279.7 949.0,279.6 949.2,279.5 949.3,279.3 949.5,193.0 949.6,192.8 949.8,192.6 950.0,192.5 950.1,192.3 950.3,223.4 950.4,223.2 950.6,223.0 950.8,222.8 950.9,222.5 951.1,222.3 951.2,256.4 951.4,256.2 951.6,255.9 951.7,255.6 951.9,255.4 952.0,206.1 952.2,205.9 952.4,205.6 952.5,272.6 952.7,272.3 952.8,272.0 953.0,249.2 953.2,248.9 953.3,246.2 953.5,268.4 953.6,268.1 953.8,267.8 954.0,267.6 954.1,234.4 954.3,234.2 954.5,234.0 954.6,233.8 954.8,233.6 954.9,173.0 955.1,124.2 955.3,184.5 955.4,184.4 955.6,184.2 955.7,248.9 955.9,248.8 956.1,248.7 956.2,248.5 956.4,183.5 956.5,183.4 956.7,183.3 956.9,183.1 957.0,183.0 957.2,219.1 957.3,219.0 957.5,272.1 957.7,272.0 957.8,271.9 958.0,271.8 958.1,282.0 958.3,281.9 958.5,281.9 958.6,183.5 958.8,235.1 959.0,235.1 959.1,235.1 959.3,281.9 959.4,281.9 959.6,282.0 959.8,235.9 959.9,236.0 960.1,236.1 960.2,236.2 960.4,224.6 960.6,224.7 960.7,250.4 960.9,250.6 961.0,285.1 961.2,250.9 961.4,251.0 961.5,211.5 961.7,211.6 961.8,211.8 962.0,211.9 962.2,243.1 962.3,243.3 962.5,243.4 962.6,243.6 962.8,243.8 963.0,232.9 963.1,172.6 963.3,172.7 963.4,172.9 963.6,233.7 963.8,258.3 963.9,258.5 964.1,258.7 964.3,269.4 964.4,269.6 964.6,269.8 964.7,269.9 964.9,270.1 965.1,270.3 965.2,222.8 965.4,223.0 965.5,244.3 965.7,288.1 965.9,288.2 966.0,288.4 966.2,288.5 966.3,209.0 966.5,209.0 966.7,209.0 966.8,236.9 967.0,237.0 967.1,237.3 967.3,226.7 967.5,226.8 967.6,226.9 967.8,226.9 967.9,244.6 968.1,244.6 968.3,244.7 968.4,249.5 968.6,281.1 968.8,281.1 968.9,231.0 969.1,231.0 969.2,231.0 969.4,230.9 969.6,232.5 969.7,227.0 969.9,201.9 970.0,201.9 970.2,201.8 970.4,201.7 970.5,201.7 970.7,289.3 970.8,245.4 971.0,257.1 971.2,245.2 971.3,245.1 971.5,245.0 971.6,212.1 971.8,234.8 972.0,234.7 972.1,234.6 972.3,234.5 972.4,234.4 972.6,252.7 972.8,252.6 972.9,252.5 973.1,238.9 973.2,238.8 973.4,238.7 973.6,238.6 973.7,187.9 973.9,277.3 974.1,277.2 974.2,277.1 974.4,277.1 974.5,277.0 974.7,276.9 974.9,249.4 975.0,249.3 975.2,212.4 975.3,212.3 975.5,212.3 975.7,212.3 975.8,212.3 976.0,211.9 976.1,233.3 976.3,172.9 976.5,172.9 976.6,173.0 976.8,173.1 976.9,253.9 977.1,287.4 977.3,287.5 977.4,287.6 977.6,109.3 977.7,109.3 977.9,109.3 978.1,264.9 978.2,265.0 978.4,265.2 978.6,265.3 978.7,265.4 978.9,256.4 979.0,256.5 979.2,256.7 979.4,256.8 979.5,232.3 979.7,232.4 979.8,232.5 980.0,232.6 980.2,263.2 980.3,263.3 980.5,229.8 980.6,229.9 980.8,230.0 981.0,230.1 981.1,266.1 981.3,266.2 981.4,266.3 981.6,266.3 981.8,266.4 981.9,266.5 982.1,319.4 982.2,319.4 982.4,217.0 982.6,217.0 982.7,254.8 982.9,254.8 983.0,254.8 983.2,254.8 983.4,267.9 983.5,267.9 983.7,265.3 983.9,265.3 984.0,265.2 984.2,265.2 984.3,277.6 984.5,277.6 984.7,155.6 984.8,155.6 985.0,155.6 985.1,246.0 985.3,245.9 985.5,245.9 985.6,205.1 985.8,285.5 985.9,285.4" fill="none" stroke="#ff0000" stroke-width="1"/><line x1="728.9" y1="310.5" x2="985.9" y2="239.3" stroke="#000" stroke-width="1"/></g><g clip-path="url(#clc4)"><polyline points="48.9,513.5 77.6,474.3 94.4,452.3 106.3,437.1 115.6,433.2 123.1,437.6 129.5,446.4 135.0,457.2 139.9,452.8 144.3,453.2 148.2,466.0 151.8,489.5 155.2,501.8 158.2,503.2 161.1,491.5 163.8,488.0 166.3,484.6 168.6,472.4 170.9,466.5 173.0,468.4 175.0,480.7 176.9,486.1 178.8,504.2 180.6,526.2 182.2,504.2 183.9,506.2 185.4,504.2 186.9,494.4 188.4,479.7 189.8,465.0 191.2,457.2 192.5,477.7 193.7,474.8 195.0,469.9 196.2,465.0 197.4,484.6 198.5,499.3 199.6,514.0 200.7,517.4 201.7,526.2 202.7,536.5 203.7,509.1 204.7,479.7 205.7,469.9 206.6,474.8 207.5,465.0 208.4,460.1 209.3,474.8 210.1,507.6 211.0,489.5 211.8,477.3 212.6,484.6 213.4,494.4 214.2,504.2 214.9,514.0 215.7,516.5 216.4,514.0 217.1,517.4 217.8,499.3 218.5,489.5 219.2,490.3 219.9,489.4 220.5,491.7 221.2,492.5 221.8,481.8 222.5,473.8 223.1,478.1 223.7,498.3 224.3,513.9 224.9,535.7 225.5,496.3 226.1,495.1 226.6,494.1 227.2,480.3 227.8,467.9 228.3,469.2 228.9,480.8 229.4,497.6 229.9,577.2 230.4,508.7 231.0,521.2 231.5,490.8 232.0,525.2 232.5,495.2 232.9,490.0 233.4,465.6 233.9,460.5 234.4,472.5 234.9,460.7 235.3,477.9 235.8,587.5 236.2,473.0 236.7,465.9 237.1,472.4 237.6,496.7 238.0,523.5 238.4,538.9 238.8,571.6 239.3,520.2 239.7,515.5 240.1,524.8 240.5,532.2 240.9,511.9 241.3,505.9 241.7,500.9 242.1,492.3 242.5,497.1 242.9,506.1 243.3,493.2 243.6,466.6 244.0,462.9 244.4,471.5 244.7,488.1 245.1,492.0 245.5,485.9 245.8,484.4 246.2,477.2 246.5,463.7 246.9,463.8 247.2,486.1 247.6,514.3 247.9,516.5 248.3,512.5 248.6,513.5 248.9,492.9 249.3,468.2 249.6,468.6 249.9,475.8 250.2,488.0 250.6,621.3 250.9,534.9 251.2,547.0 251.5,545.2 251.8,537.0 252.1,527.7 252.4,536.4 252.7,531.7 253.0,524.0 253.3,525.5 253.6,490.6 253.9,524.8 254.2,483.3 254.5,490.9 254.8,599.3 255.1,494.5 255.4,501.0 255.6,521.3 255.9,626.8 256.2,487.2 256.5,476.7 256.8,480.4 257.0,519.8 257.3,502.8 257.6,497.0 257.8,487.5 258.1,489.1 258.4,558.4 258.6,529.5 258.9,526.3 259.2,514.1 259.4,528.2 259.7,501.7 259.9,528.6 260.2,510.6 260.4,504.6 260.7,528.5 260.9,510.6 261.2,560.9 261.4,503.0 261.7,502.7 261.9,517.0 262.2,495.1 262.4,501.4 262.6,517.3 262.9,499.6 263.1,529.9 263.3,552.1 263.6,492.8 263.8,514.2 264.0,512.3 264.3,532.9 264.5,500.9 264.7,504.2 264.9,527.6 265.2,522.8 265.4,547.1 265.6,509.5 265.8,541.1 266.1,522.7 266.3,496.8 266.5,528.8 266.7,512.4 266.9,508.8 267.1,502.0 267.4,514.1 267.6,505.8 267.8,531.6 268.0,591.2 268.2,510.9 268.4,510.2 268.6,502.9 268.8,500.7 269.0,497.4 269.2,544.0 269.4,513.5 269.6,487.8 269.8,510.9 270.0,546.6 270.2,626.0 270.4,526.5 270.6,531.3 270.8,506.9 271.0,486.6 271.2,528.8 271.4,548.4 271.6,497.9 271.8,597.3 272.0,615.3 272.2,508.6 272.3,514.0 272.5,526.4 272.7,568.0 272.9,509.8 273.1,568.0 273.3,513.8 273.5,554.2 273.6,593.0 273.8,525.1 274.0,535.9 274.2,528.4 274.4,530.3 274.5,498.5 274.7,528.4 274.9,674.1 275.1,526.1 275.3,515.7 275.4,481.3 275.6,539.4 275.8,517.6 276.0,493.5 276.1,500.8 276.3,541.6 276.5,496.8 276.6,535.4 276.8,480.9 277.0,541.0 277.1,521.0 277.3,527.8 277.5,495.3 277.6,551.5 277.8,558.1 278.0,513.9 278.1,496.7 278.3,544.1 278.5,537.8 278.6,502.6 278.8,565.2 279.0,540.4 279.1,524.6 279.3,537.5 279.4,590.0 279.6,522.0 279.7,524.5 279.9,520.8 280.1,493.2 280.2,501.5 280.4,506.1 280.5,530.4 280.7,533.4 280.8,505.1 281.0,528.9 281.1,539.6 281.3,511.6 281.4,495.1 281.6,552.8 281.7,506.8 281.9,552.9 282.0,511.3 282.2,534.6 282.3,511.0 282.5,511.8 282.6,548.0 282.8,548.7 282.9,535.6 283.1,517.8 283.2,554.6 283.4,509.6 283.5,525.8 283.7,513.6 283.8,525.8 283.9,502.5 284.1,527.8 284.2,477.3 284.4,513.4 284.5,526.3 284.6,580.4 284.8,485.0 284.9,521.5 285.1,493.3 285.2,528.2 285.3,534.0 285.5,611.0 285.6,560.7 285.7,515.9 285.9,548.2 286.0,505.2 286.2,554.4 286.3,506.8 286.4,542.1 286.6,506.2 286.7,510.1 286.8,521.3 287.0,525.3 287.1,531.9 287.2,552.9 287.4,515.8 287.5,510.6 287.6,556.3 287.7,523.5 287.9,546.7 288.0,508.0 288.1,519.5 288.3,548.3 288.4,553.8 288.5,545.2 288.6,558.5 288.8,552.3 288.9,502.1 289.0,541.7 289.1,526.4 289.3,499.9 289.4,530.9 289.5,576.5 289.6,514.3 289.8,524.6 289.9,516.5 290.0,508.7 290.1,525.5 290.3,541.5 290.4,523.4 290.5,513.8 290.6,634.5 290.7,520.4 290.9,524.7 291.0,535.9 291.1,532.6 291.2,511.4 291.3,527.8 291.5,538.8 291.6,543.4 291.7,522.3 291.8,521.9 291.9,528.5 292.1,516.4 292.2,507.4 292.3,542.7 292.4,551.0 292.5,546.0 292.6,556.4 292.8,503.8 292.9,526.8 293.0,511.0 293.1,531.3 293.2,497.0 293.3,525.2 293.4,553.4 293.6,599.5 293.7,529.8 293.8,514.3 293.9,522.8 294.0,600.5 294.1,543.7 294.2,522.6 294.3,554.3 294.4,532.2 294.6,558.4 294.7,556.6 294.8,532.6 294.9,518.9 295.0,504.5 295.1,586.1 295.2,505.8 295.3,537.2 295.4,568.5 295.5,503.1 295.6,545.7 295.7,519.2 295.9,543.6 296.0,542.0 296.1,598.7 296.2,536.0 296.3,545.0 296.4,569.7 296.5,534.8 296.6,501.3 296.7,555.8 296.8,529.7 296.9,516.7 297.0,509.9 297.1,509.3 297.2,511.2 297.3,568.9 297.4,524.7 297.5,549.4 297.6,555.3 297.7,535.6 297.8,519.2 297.9,535.2 298.0,514.1 298.1,530.5 298.2,563.9 298.3,506.2 298.4,543.7 298.5,486.6 298.6,543.3 298.7,518.1 298.8,521.8 298.9,530.9 299.0,550.5 299.1,566.9 299.2,531.7 299.3,544.0 299.4,532.8 299.5,529.5 299.6,521.8 299.7,490.4 299.8,517.6 299.9,501.8 300.0,536.1 300.1,554.3 300.2,535.5 300.3,514.2 300.4,508.9 300.5,533.9 300.6,533.1 300.7,506.1 300.8,534.4 300.9,514.6 301.0,539.5 301.1,545.2 301.2,566.4 301.3,568.1 301.3,527.8 301.4,552.8 301.5,523.9 301.6,531.4 301.7,524.1 301.8,534.0 301.9,526.1 302.0,533.3 302.1,516.5 302.2,588.8 302.3,510.0 302.4,532.3 302.5,522.9 302.5,572.8 302.6,533.0 302.7,531.7 302.8,536.0 302.9,557.4 303.0,505.9 303.1,520.6 303.2,523.0 303.3,537.6 303.4,531.2 303.4,544.3 303.5,531.7 303.6,551.2 303.7,496.4 303.8,503.3 303.9,500.8 304.0,531.8 304.1,533.9 304.2,502.1 304.2,490.9 304.3,646.3 304.4,534.6 304.5,500.9 304.6,522.6 304.7,487.0 304.8,536.6 304.8,506.8 304.9,511.0 305.0,556.3 305.1,538.0 305.2,507.4 305.3,561.4 305.4,538.7 305.4,547.0 305.5,533.6 305.6,509.5 305.7,544.6 305.8,496.8 305.9,588.6 305.9,522.3 306.0,531.5 306.1,571.9 306.2,551.8 306.3,519.9 306.4,526.4 306.4,528.7 306.5,573.7 306.6,544.8 306.7,539.7 306.8,529.0 306.9,523.9 306.9,562.8 307.0,524.8 307.1,539.4 307.2,505.9 307.3,528.9 307.3,495.6 307.4,548.4 307.5,575.4 307.6,521.7 307.7,538.8 307.7,538.5 307.8,530.3 307.9,557.8 308.0,513.2 308.1,531.6 308.1,548.1 308.2,499.9 308.3,572.3 308.4,528.8 308.5,535.6 308.5,559.7 308.6,583.7 308.7,514.6 308.8,538.9 308.9,537.4 308.9,533.7 309.0,572.6 309.1,522.0 309.2,503.5 309.2,538.0 309.3,519.7 309.4,558.7 309.5,604.9 309.6,531.0 309.6,558.6 309.7,535.8 309.8,542.7 309.9,534.8 309.9,530.0 310.0,518.0 310.1,521.4 310.2,530.7 310.2,578.2 310.3,527.4 310.4,546.1 310.5,502.1 310.5,520.6 310.6,502.2 310.7,514.8 310.8,588.4 310.8,514.6 310.9,548.0 311.0,555.6 311.1,516.7 311.1,515.3 311.2,533.6 311.3,542.8 311.4,520.4 311.4,551.3 311.5,518.2 311.6,540.1 311.6,627.0 311.7,572.8 311.8,533.8 311.9,508.8 311.9,518.1 312.0,512.2 312.1,548.9 312.2,548.9 312.2,528.4 312.3,521.8 312.4,505.8 312.4,509.8 312.5,534.8 312.6,538.1 312.7,572.7 312.7,510.2 312.8,655.1 312.9,540.9 312.9,512.6 313.0,532.6 313.1,544.1 313.2,528.5 313.2,546.1 313.3,555.1 313.4,560.3 313.4,553.0 313.5,539.5 313.6,515.2 313.6,540.9 313.7,522.8 313.8,540.4 313.8,520.5 313.9,589.8 314.0,548.1 314.1,520.7 314.1,533.5 314.2,554.7 314.3,521.5 314.3,590.4 314.4,569.3 314.5,529.5 314.5,532.2 314.6,537.6 314.7,526.7 314.7,544.4 314.8,564.9 314.9,518.4 314.9,515.9 315.0,526.7 315.1,516.3 315.1,522.1 315.2,528.0 315.3,527.7 315.3,526.3 315.4,562.1 315.5,601.9 315.5,526.9 315.6,513.9 315.7,536.4 315.7,559.2 315.8,549.8 315.9,529.7 315.9,508.2 316.0,527.5 316.1,541.1 316.1,515.8 316.2,553.0 316.3,536.5 316.3,543.5 316.4,558.4 316.5,520.2 316.5,534.1 316.6,509.9 316.7,527.5 316.7,607.5 316.8,558.4 316.8,555.2 316.9,570.0 317.0,532.5 317.0,516.0 317.1,604.3 317.2,571.8 317.2,579.2 317.3,532.5 317.4,546.2 317.4,509.3 317.5,533.5 317.6,538.3 317.6,507.4 317.7,525.4 317.7,536.5 317.8,536.6 317.9,596.9 317.9,550.4 318.0,546.8 318.1,544.0 318.1,525.9 318.2,523.6 318.2,549.9 318.3,522.9 318.4,546.8 318.4,568.2 318.5,578.5 318.6,628.0 318.6,501.9 318.7,524.7 318.7,533.7 318.8,522.2 318.9,495.2 318.9,559.6 319.0,517.3 319.0,544.2 319.1,537.3 319.2,518.8 319.2,559.8 319.3,538.1 319.3,527.8 319.4,510.8 319.5,526.1 319.5,518.7 319.6,545.4 319.6,530.2 319.7,570.7 319.8,524.7 319.8,579.7 319.9,570.8 319.9,554.5 320.0,548.9 320.1,531.6 320.1,541.0 320.2,563.4 320.2,569.0 320.3,522.0 320.4,532.1 320.4,568.5 320.5,566.9 320.5,530.2 320.6,540.6 320.7,541.2 320.7,599.7 320.8,578.3 320.8,565.2 320.9,534.6 321.0,522.9 321.0,568.8 321.1,529.2 321.1,519.7 321.2,554.9 321.2,560.3 321.3,562.5 321.4,561.8 321.4,552.9 321.5,522.1 321.5,534.7 321.6,520.4 321.6,552.2 321.7,508.1 321.8,542.3 321.8,593.4 321.9,521.1 321.9,526.6 322.0,552.7 322.0,527.5 322.1,562.2 322.2,553.1 322.2,531.6 322.3,587.1 322.3,528.3 322.4,583.7 322.4,530.6 322.5,498.7 322.6,568.4 322.6,610.3 322.7,571.1 322.7,560.7 322.8,533.9 322.8,549.3 322.9,518.4 322.9,525.1 323.0,565.4 323.1,556.8 323.1,519.9 323.2,515.9 323.2,540.0 323.3,537.7 323.3,581.3 323.4,556.6 323.4,551.2 323.5,576.7 323.5,606.5 323.6,530.4 323.7,637.6 323.7,539.8 323.8,568.5 323.8,515.7 323.9,581.3 323.9,531.1 324.0,576.0 324.0,545.5 324.1,539.8 324.1,510.5 324.2,523.0 324.3,545.8 324.3,528.2 324.4,542.7 324.4,530.4 324.5,531.8 324.5,588.5 324.6,522.2 324.6,524.8 324.7,556.1 324.7,523.7 324.8,524.1 324.8,561.6 324.9,585.8 324.9,568.8 325.0,559.6 325.1,533.6 325.1,533.6 325.2,529.2 325.2,519.8 325.3,530.1 325.3,540.1 325.4,563.4 325.4,518.4 325.5,512.6 325.5,573.9 325.6,550.0 325.6,559.6 325.7,527.2 325.7,555.4 325.8,531.2 325.8,529.2 325.9,586.1 325.9,528.9 326.0,523.4 326.0,545.0 326.1,515.6 326.1,516.5 326.2,585.5 326.2,569.9 326.3,524.1 326.4,540.7 326.4,523.8 326.5,534.8 326.5,547.4 326.6,550.5 326.6,529.3 326.7,546.4 326.7,587.2 326.8,546.0 326.8,518.0 326.9,695.8 326.9,602.7 327.0,540.6 327.0,528.1 327.1,574.5 327.1,557.1 327.2,559.2 327.2,549.6 327.3,512.4 327.3,527.4 327.4,549.0 327.4,551.0 327.5,560.4 327.5,545.8 327.6,566.6 327.6,570.5 327.7,537.5 327.7,549.4 327.8,579.8 327.8,570.9 327.9,529.5 327.9,553.4 328.0,536.9 328.0,545.0 328.1,576.8 328.1,570.4 328.2,527.5 328.2,534.6 328.3,561.3 328.3,557.7 328.3,538.4 328.4,538.6 328.4,518.9 328.5,547.1 328.5,554.4 328.6,563.3 328.6,583.7 328.7,575.1 328.7,544.9 328.8,531.2 328.8,562.3 328.9,599.4 328.9,594.3 329.0,508.8 329.0,533.0 329.1,565.7 329.1,540.6 329.2,547.5 329.2,531.5 329.3,557.0 329.3,529.9 329.4,549.2 329.4,548.2 329.5,514.9 329.5,541.0 329.5,548.5 329.6,564.4 329.6,548.6 329.7,556.5 329.7,532.7 329.8,513.4 329.8,542.3 329.9,537.4 329.9,516.4 330.0,548.5 330.0,556.0 330.1,583.1 330.1,557.5 330.2,568.0 330.2,604.9 330.3,521.7 330.3,524.9 330.3,536.6 330.4,527.8 330.4,563.3 330.5,560.5 330.5,551.0 330.6,555.4 330.6,577.7 330.7,562.2 330.7,588.1 330.8,528.4 330.8,537.4 330.9,543.0 330.9,536.0 330.9,520.9 331.0,525.2 331.0,532.7 331.1,522.5 331.1,553.5 331.2,558.6 331.2,549.7 331.3,514.1 331.3,537.1 331.4,540.3 331.4,536.6 331.4,505.9 331.5,626.9 331.5,550.8 331.6,514.2 331.6,587.8 331.7,555.1 331.7,538.6 331.8,549.4 331.8,556.4 331.9,540.0 331.9,550.3 331.9,532.7 332.0,558.8 332.0,523.7 332.1,552.3 332.1,550.9 332.2,554.5 332.2,514.2 332.3,529.4 332.3,555.0 332.3,532.0 332.4,571.5 332.4,522.0 332.5,562.9 332.5,561.0 332.6,528.1 332.6,549.6 332.7,532.7 332.7,568.6 332.7,533.3 332.8,528.4 332.8,527.2 332.9,661.0 332.9,517.8 333.0,528.3 333.0,558.9 333.0,550.4 333.1,550.1 333.1,556.7 333.2,513.6 333.2,579.3 333.3,549.2 333.3,535.5 333.3,564.6 333.4,520.5 333.4,538.3 333.5,584.5 333.5,564.1 333.6,538.8 333.6,545.9 333.6,590.5 333.7,598.9 333.7,585.4 333.8,530.0 333.8,530.3 333.9,516.8 333.9,558.6 333.9,539.2 334.0,559.1 334.0,545.7 334.1,563.8 334.1,522.2 334.2,539.6 334.2,525.7 334.2,521.2 334.3,513.3 334.3,569.4 334.4,539.5 334.4,549.7 334.5,534.2 334.5,541.1 334.5,551.2 334.6,538.0 334.6,523.9 334.7,538.6 334.7,537.4 334.7,539.8 334.8,554.8 334.8,549.4 334.9,508.1 334.9,548.1 335.0,528.6 335.0,526.3 335.0,555.5 335.1,524.8" fill="none" stroke="#ff0000" stroke-width="1"/><polyline points="48.9,441.5 52.5,442.2 56.1,442.8 59.8,443.5 63.4,444.2 67.0,444.9 70.6,445.6 74.2,446.2 77.9,447.0 81.5,448.1 85.1,449.2 88.7,450.3 92.4,451.4 96.0,452.5 99.6,453.6 103.2,454.6 106.8,455.5 110.5,456.5 114.1,457.5 117.7,458.4 121.3,459.4 125.0,460.4 128.6,461.4 132.2,462.3 135.8,463.4 139.5,464.9 143.1,466.4 146.7,467.9 150.3,469.4 153.9,470.9 157.6,472.4 161.2,473.9 164.8,475.4 168.4,476.8 172.1,478.3 175.7,480.0 179.3,481.7 182.9,483.5 186.5,485.2 190.2,487.0 193.8,488.7 197.4,490.4 201.0,492.2 204.7,493.9 208.3,495.7 211.9,497.4 215.5,499.1 219.2,500.9 222.8,502.6 226.4,504.0 230.0,505.1 233.6,506.2 237.3,507.3 240.9,508.6 244.5,510.2 248.1,511.8 251.8,513.5 255.4,515.1 259.0,516.7 262.6,518.3 266.2,519.9 269.9,521.5 273.5,523.1 277.1,524.7 280.7,526.4 284.4,528.0 288.0,529.6 291.6,531.2 295.2,532.8 298.9,534.4 302.5,536.0 306.1,537.6 309.7,539.1 313.3,540.7 317.0,542.3 320.6,543.9 324.2,545.5 327.8,547.1 331.5,548.6 335.1,550.2" fill="none" stroke="#111" stroke-width="1.1"/></g><g clip-path="url(#clc5)"><line x1="389.7" y1="433.3" x2="389.7" y2="697.7" stroke="#5050c0" stroke-width="1.2"/><line x1="405.5" y1="433.3" x2="405.5" y2="697.7" stroke="#a040b0" stroke-width="1.3"/><line x1="515.8" y1="433.3" x2="515.8" y2="697.7" stroke="#a040b0" stroke-width="1.3"/><line x1="582.8" y1="433.3" x2="582.8" y2="697.7" stroke="#40a040" stroke-width="1.3"/><line x1="389.2" y1="548.5" x2="666.4" y2="548.5" stroke="#1c1c8c" stroke-width="1"/><polyline points="389.9,468.8 391.4,467.7 393.0,464.9 394.5,461.4 396.1,458.1 397.6,455.0 399.2,452.2 400.8,449.8 402.3,447.6 403.9,446.0 405.4,444.8 407.0,443.3 408.5,442.2 410.1,441.7 411.6,440.9 413.2,440.1 414.8,439.1 416.3,437.9 417.9,437.1 419.4,436.7 421.0,436.5 422.5,435.7 424.1,435.0 425.6,435.2 427.2,436.4 428.8,437.5 430.3,438.1 431.9,438.3 433.4,437.1 435.0,435.7 436.5,434.7 438.1,433.8 439.7,433.2 441.2,433.1 442.8,433.6 444.3,434.2 445.9,434.3 447.4,434.2 449.0,434.6 450.5,435.6 452.1,436.6 453.7,437.4 455.2,437.8 456.8,438.2 458.3,438.7 459.9,438.8 461.4,438.4 463.0,438.4 464.5,438.7 466.1,439.0 467.7,439.1 469.2,439.1 470.8,439.5 472.3,439.7 473.9,440.2 475.4,440.9 477.0,441.3 478.5,442.1 480.1,442.7 481.7,443.1 483.2,443.8 484.8,443.8 486.3,443.7 487.9,444.8 489.4,445.9 491.0,446.5 492.5,446.7 494.1,446.5 495.7,446.4 497.2,447.1 498.8,447.9 500.3,448.0 501.9,448.3 503.4,449.3 505.0,449.8 506.5,450.3 508.1,451.7 509.7,453.3 511.2,454.0 512.8,454.6 514.3,455.8 515.9,456.6 517.4,457.1 519.0,458.2 520.5,459.2 522.1,460.3 523.7,461.6 525.2,462.5 526.8,463.5 528.3,465.1 529.9,466.4 531.4,466.9 533.0,467.6 534.6,468.8 536.1,469.9 537.7,471.4 539.2,473.1 540.8,474.6 542.3,476.4 543.9,478.6 545.4,480.4 547.0,481.2 548.6,482.0 550.1,483.3 551.7,484.4 553.2,485.2 554.8,485.9 556.3,486.5 557.9,487.5 559.4,488.5 561.0,489.0 562.6,489.6 564.1,490.7 565.7,492.0 567.2,492.8 568.8,493.1 570.3,493.8 571.9,495.4 573.4,496.9 575.0,498.0 576.6,498.8 578.1,499.9 579.7,501.5 581.2,503.0 582.8,503.9 584.3,504.6 585.9,505.5 587.4,506.6 589.0,507.8 590.6,508.9 592.1,509.9 593.7,510.7 595.2,511.6 596.8,512.1 598.3,512.2 599.9,512.7 601.4,513.6 603.0,514.2 604.6,514.5 606.1,515.0 607.7,515.7 609.2,515.9 610.8,516.1 612.3,516.6 613.9,517.0 615.5,517.4 617.0,517.7 618.6,517.6 620.1,517.6 621.7,517.9 623.2,518.3 624.8,518.5 626.3,518.4 627.9,518.2 629.5,518.2 631.0,518.4 632.6,519.0 634.1,519.8 635.7,520.3 637.2,520.3 638.8,520.0 640.3,520.2 641.9,520.4 643.5,520.4 645.0,520.8 646.6,521.3 648.1,521.4 649.7,521.1 651.2,521.4 652.8,521.9 654.3,521.9 655.9,521.6 657.5,521.3 659.0,521.7 660.6,522.4 662.1,522.9 663.7,523.7 665.2,524.0 666.8,524.9" fill="none" stroke="#ff0000" stroke-width="3" stroke-linejoin="round"/><polyline points="389.9,517.5 391.4,503.1 393.0,490.3 394.5,479.6 396.1,470.5 397.6,462.1 399.2,454.8 400.8,449.2 402.3,446.0 403.9,443.8 405.4,442.6 407.0,442.6 408.5,442.6 410.1,442.6 411.6,442.6 413.2,442.7 414.8,443.0 416.3,443.2 417.9,443.2 419.4,443.1 421.0,443.1 422.5,443.3 424.1,443.6 425.6,443.9 427.2,444.2 428.8,444.5 430.3,444.7 431.9,444.9 433.4,445.0 435.0,445.0 436.5,445.3 438.1,445.6 439.7,445.7 441.2,445.9 442.8,446.2 444.3,446.5 445.9,446.6 447.4,446.5 449.0,446.5 450.5,446.7 452.1,446.9 453.7,447.1 455.2,447.2 456.8,447.4 458.3,447.5 459.9,447.6 461.4,447.8 463.0,447.8 464.5,447.8 466.1,447.9 467.7,448.1 469.2,448.1 470.8,448.1 472.3,448.0 473.9,448.0 475.4,448.2 477.0,448.4 478.5,448.5 480.1,448.5 481.7,448.5 483.2,448.6 484.8,448.7 486.3,448.9 487.9,448.9 489.4,448.8 491.0,448.9 492.5,449.1 494.1,449.2 495.7,449.3 497.2,449.4 498.8,449.5 500.3,449.6 501.9,449.6 503.4,449.9 505.0,450.1 506.5,450.2 508.1,450.4 509.7,450.6 511.2,450.7 512.8,450.6 514.3,450.7 515.9,451.1 517.4,451.5 519.0,451.7 520.5,452.0 522.1,452.6 523.7,453.2 525.2,453.8 526.8,454.4 528.3,455.1 529.9,455.8 531.4,456.6 533.0,457.6 534.6,459.1 536.1,460.6 537.7,462.1 539.2,463.5 540.8,464.9 542.3,466.4 543.9,467.7 545.4,469.1 547.0,470.8 548.6,472.7 550.1,474.6 551.7,476.6 553.2,478.7 554.8,480.6 556.3,482.7 557.9,485.2 559.4,487.7 561.0,490.1 562.6,492.5 564.1,495.0 565.7,497.4 567.2,499.9 568.8,502.4 570.3,504.8 571.9,507.3 573.4,509.9 575.0,512.5 576.6,515.2 578.1,517.9 579.7,520.6 581.2,523.1 582.8,525.7 584.3,528.5 585.9,531.3 587.4,534.0 589.0,536.8 590.6,539.6 592.1,542.5 593.7,545.3 595.2,547.9 596.8,550.8 598.3,553.7 599.9,556.4 601.4,559.1 603.0,561.8 604.6,564.5 606.1,567.2 607.7,570.0 609.2,572.8 610.8,575.7 612.3,578.5 613.9,581.2 615.5,583.9 617.0,586.7 618.6,589.4 620.1,592.0 621.7,594.6 623.2,597.4 624.8,600.2 626.3,602.8 627.9,605.4 629.5,608.2 631.0,611.0 632.6,613.7 634.1,616.6 635.7,619.3 637.2,621.9 638.8,624.4 640.3,627.1 641.9,629.9 643.5,632.7 645.0,635.5 646.6,638.2 648.1,640.9 649.7,643.6 651.2,646.3 652.8,649.0 654.3,651.7 655.9,654.5 657.5,657.1 659.0,659.7 660.6,662.5 662.1,665.3 663.7,668.0 665.2,670.8 666.8,673.5" fill="none" stroke="#00ff00" stroke-width="3" stroke-linejoin="round"/><polyline points="389.9,596.3 391.4,585.3 393.0,575.4 394.5,567.0 396.1,560.4 397.6,554.2 399.2,549.3 400.8,546.8 402.3,546.3 403.9,545.8 405.4,545.7 407.0,545.9 408.5,546.9 410.1,549.0 411.6,550.8 413.2,552.4 414.8,554.0 416.3,554.5 417.9,555.3 419.4,556.8 421.0,557.9 422.5,558.4 424.1,558.5 425.6,558.1 427.2,558.2 428.8,558.9 430.3,559.2 431.9,559.1 433.4,559.1 435.0,559.5 436.5,560.7 438.1,561.8 439.7,562.6 441.2,562.8 442.8,562.7 444.3,562.2 445.9,561.3 447.4,560.4 449.0,559.7 450.5,559.4 452.1,559.3 453.7,559.2 455.2,559.1 456.8,559.0 458.3,558.8 459.9,558.4 461.4,558.0 463.0,557.6 464.5,557.6 466.1,558.0 467.7,557.8 469.2,557.0 470.8,556.6 472.3,556.4 473.9,555.9 475.4,555.4 477.0,555.3 478.5,555.2 480.1,554.9 481.7,554.6 483.2,554.4 484.8,554.2 486.3,553.8 487.9,553.1 489.4,552.5 491.0,552.2 492.5,551.8 494.1,551.1 495.7,550.9 497.2,550.8 498.8,550.1 500.3,549.8 501.9,549.7 503.4,549.3 505.0,549.0 506.5,548.5 508.1,547.0 509.7,545.5 511.2,544.4 512.8,543.2 514.3,542.1 515.9,541.3 517.4,540.9 519.0,540.4 520.5,539.4 522.1,538.8 523.7,538.7 525.2,538.0 526.8,537.2 528.3,537.8 529.9,538.8 531.4,538.7 533.0,538.0 534.6,538.0 536.1,538.2 537.7,538.0 539.2,537.9 540.8,537.8 542.3,537.8 543.9,538.2 545.4,538.8 547.0,539.2 548.6,539.1 550.1,539.8 551.7,541.2 553.2,542.3 554.8,543.5 556.3,545.5 557.9,547.4 559.4,549.1 561.0,550.8 562.6,552.7 564.1,554.8 565.7,555.8 567.2,556.4 568.8,557.5 570.3,559.3 571.9,561.1 573.4,562.8 575.0,564.8 576.6,566.7 578.1,568.2 579.7,569.5 581.2,571.1 582.8,573.2 584.3,574.7 585.9,575.5 587.4,577.0 589.0,579.1 590.6,580.7 592.1,582.0 593.7,582.9 595.2,584.1 596.8,586.0 598.3,587.5 599.9,588.6 601.4,590.2 603.0,592.3 604.6,594.7 606.1,596.7 607.7,598.4 609.2,600.8 610.8,603.7 612.3,606.6 613.9,609.3 615.5,611.9 617.0,615.1 618.6,618.5 620.1,621.2 621.7,624.3 623.2,627.7 624.8,630.5 626.3,633.4 627.9,636.5 629.5,638.7 631.0,641.1 632.6,644.1 634.1,646.6 635.7,648.8 637.2,651.0 638.8,653.0 640.3,655.4 641.9,658.0 643.5,660.2 645.0,662.9 646.6,665.8 648.1,668.1 649.7,670.4 651.2,673.1 652.8,675.6 654.3,678.1 655.9,680.4 657.5,682.4 659.0,684.8 660.6,687.7 662.1,690.6 663.7,693.3 665.2,696.1 666.8,698.5" fill="none" stroke="#0000ff" stroke-width="3" stroke-linejoin="round"/></g><g clip-path="url(#clc6)"><line x1="721.3" y1="535.5" x2="998" y2="535.5" stroke="#1c1c8c" stroke-width="1"/><polyline points="721.5,495.5 723.1,480.8 724.7,467.9 726.2,457.7 727.8,450.7 729.3,444.6 730.9,439.6 732.5,436.0 734.0,434.9 735.6,435.2 737.1,435.2 738.7,435.0 740.3,434.7 741.8,434.7 743.4,435.0 745.0,435.2 746.5,435.4 748.1,435.6 749.6,435.8 751.2,435.9 752.8,436.1 754.3,436.4 755.9,436.7 757.5,436.7 759.0,436.9 760.6,437.1 762.1,437.1 763.7,437.1 765.3,437.2 766.8,437.4 768.4,437.6 769.9,437.8 771.5,437.7 773.1,437.6 774.6,437.6 776.2,437.6 777.8,437.6 779.3,437.8 780.9,438.0 782.4,438.2 784.0,438.2 785.6,438.3 787.1,438.4 788.7,438.5 790.2,438.6 791.8,438.8 793.4,438.8 794.9,438.8 796.5,438.7 798.1,438.9 799.6,439.3 801.2,439.5 802.7,439.6 804.3,439.6 805.9,439.6 807.4,440.0 809.0,440.4 810.5,440.5 812.1,440.7 813.7,441.1 815.2,441.2 816.8,441.2 818.4,441.4 819.9,441.7 821.5,441.8 823.0,441.7 824.6,441.8 826.2,441.9 827.7,441.9 829.3,441.8 830.8,441.8 832.4,441.9 834.0,441.9 835.5,441.7 837.1,441.6 838.7,441.7 840.2,441.8 841.8,441.9 843.3,441.9 844.9,441.7 846.5,441.6 848.0,441.6 849.6,441.7 851.2,442.0 852.7,442.4 854.3,442.8 855.8,443.3 857.4,443.8 859.0,444.3 860.5,444.9 862.1,445.8 863.6,446.6 865.2,447.8 866.8,449.4 868.3,450.9 869.9,452.2 871.5,453.7 873.0,455.4 874.6,457.1 876.1,459.0 877.7,461.1 879.3,463.1 880.8,464.9 882.4,467.0 883.9,469.0 885.5,471.1 887.1,473.3 888.6,475.6 890.2,477.7 891.8,479.6 893.3,481.7 894.9,484.0 896.4,486.3 898.0,488.7 899.6,491.2 901.1,493.4 902.7,495.6 904.2,497.8 905.8,500.1 907.4,502.5 908.9,504.8 910.5,507.1 912.1,509.6 913.6,512.1 915.2,514.6 916.7,517.0 918.3,519.7 919.9,522.4 921.4,524.9 923.0,527.6 924.6,530.4 926.1,533.1 927.7,535.9 929.2,538.9 930.8,542.3 932.4,545.7 933.9,549.1 935.5,552.3 937.0,555.6 938.6,558.9 940.2,562.0 941.7,564.8 943.3,567.4 944.9,570.1 946.4,572.8 948.0,575.9 949.5,578.9 951.1,581.4 952.7,583.8 954.2,586.5 955.8,589.3 957.3,591.9 958.9,594.4 960.5,597.1 962.0,599.7 963.6,602.3 965.2,605.0 966.7,607.5 968.3,610.0 969.8,612.4 971.4,614.7 973.0,617.1 974.5,619.6 976.1,622.1 977.6,624.7 979.2,627.4 980.8,630.0 982.3,632.4 983.9,634.8 985.5,637.2 987.0,639.6 988.6,642.1 990.1,644.8 991.7,647.4 993.3,649.8 994.8,652.3 996.4,654.7 998.0,657.2" fill="none" stroke="#00ff00" stroke-width="3" stroke-linejoin="round"/><polyline points="721.5,465.2 723.1,461.9 724.7,458.1 726.2,454.1 727.8,450.0 729.3,444.7 730.9,439.5 732.5,436.2 734.0,435.5 735.6,435.4 737.1,435.4 738.7,435.8 740.3,435.5 741.8,434.9 743.4,434.6 745.0,435.1 746.5,435.2 748.1,435.1 749.6,435.3 751.2,435.2 752.8,435.6 754.3,436.2 755.9,436.5 757.5,437.1 759.0,437.3 760.6,437.2 762.1,437.3 763.7,437.6 765.3,438.0 766.8,437.8 768.4,437.7 769.9,438.0 771.5,438.1 773.1,438.6 774.6,439.0 776.2,438.6 777.8,438.7 779.3,438.6 780.9,438.2 782.4,438.2 784.0,438.2 785.6,438.1 787.1,438.0 788.7,438.4 790.2,438.6 791.8,438.2 793.4,438.1 794.9,438.5 796.5,438.9 798.1,439.4 799.6,439.5 801.2,439.5 802.7,439.8 804.3,439.8 805.9,439.7 807.4,439.3 809.0,439.7 810.5,440.4 812.1,440.8 813.7,441.1 815.2,441.5 816.8,441.9 818.4,441.6 819.9,441.7 821.5,442.1 823.0,442.0 824.6,442.1 826.2,441.7 827.7,441.2 829.3,441.6 830.8,441.9 832.4,441.1 834.0,440.3 835.5,440.0 837.1,440.0 838.7,440.4 840.2,441.2 841.8,441.5 843.3,440.8 844.9,440.7 846.5,441.3 848.0,441.7 849.6,442.4 851.2,442.7 852.7,442.8 854.3,443.5 855.8,444.4 857.4,444.5 859.0,444.4 860.5,444.9 862.1,445.8 863.6,447.2 865.2,448.2 866.8,448.8 868.3,449.7 869.9,450.9 871.5,452.1 873.0,453.5 874.6,455.3 876.1,457.6 877.7,459.4 879.3,460.6 880.8,462.0 882.4,463.5 883.9,465.5 885.5,467.3 887.1,468.7 888.6,470.3 890.2,472.0 891.8,473.2 893.3,474.3 894.9,475.6 896.4,477.3 898.0,478.7 899.6,479.8 901.1,480.7 902.7,481.3 904.2,482.0 905.8,482.6 907.4,483.0 908.9,483.5 910.5,484.2 912.1,484.8 913.6,485.2 915.2,485.7 916.7,486.1 918.3,486.2 919.9,486.1 921.4,486.0 923.0,486.1 924.6,486.3 926.1,486.7 927.7,486.8 929.2,486.7 930.8,486.8 932.4,486.7 933.9,486.7 935.5,486.8 937.0,487.2 938.6,487.9 940.2,487.9 941.7,487.5 943.3,487.5 944.9,487.9 946.4,488.0 948.0,487.9 949.5,487.9 951.1,488.1 952.7,488.9 954.2,489.4 955.8,489.2 957.3,489.6 958.9,490.0 960.5,489.3 962.0,488.5 963.6,488.5 965.2,488.9 966.7,489.2 968.3,489.4 969.8,489.3 971.4,489.1 973.0,488.7 974.5,488.6 976.1,489.0 977.6,489.1 979.2,488.9 980.8,489.2 982.3,489.4 983.9,489.2 985.5,488.9 987.0,488.5 988.6,488.4 990.1,489.1 991.7,489.3 993.3,489.4 994.8,490.3 996.4,491.2 998.0,492.1" fill="none" stroke="#ff0000" stroke-width="3" stroke-linejoin="round"/><polyline points="721.5,563.1 723.1,555.7 724.7,549.8 726.2,544.7 727.8,539.3 729.3,535.2 730.9,533.9 732.5,534.5 734.0,534.0 735.6,533.7 737.1,534.6 738.7,535.3 740.3,534.7 741.8,534.3 743.4,534.6 745.0,534.9 746.5,534.7 748.1,534.6 749.6,534.9 751.2,534.8 752.8,534.8 754.3,535.4 755.9,535.4 757.5,534.8 759.0,534.8 760.6,535.2 762.1,535.2 763.7,535.1 765.3,535.4 766.8,535.3 768.4,534.7 769.9,534.6 771.5,535.3 773.1,536.1 774.6,536.1 776.2,535.4 777.8,535.5 779.3,535.9 780.9,535.5 782.4,534.6 784.0,534.2 785.6,534.2 787.1,535.0 788.7,535.7 790.2,535.6 791.8,535.0 793.4,534.6 794.9,534.8 796.5,535.0 798.1,535.4 799.6,535.2 801.2,534.4 802.7,534.6 804.3,535.3 805.9,535.7 807.4,535.8 809.0,535.1 810.5,535.2 812.1,535.2 813.7,534.0 815.2,533.7 816.8,533.9 818.4,534.2 819.9,534.3 821.5,533.7 823.0,533.4 824.6,533.4 826.2,533.9 827.7,534.5 829.3,534.5 830.8,534.7 832.4,535.4 834.0,536.2 835.5,536.3 837.1,536.1 838.7,536.2 840.2,536.5 841.8,536.6 843.3,536.1 844.9,535.7 846.5,535.4 848.0,535.0 849.6,534.4 851.2,534.3 852.7,535.1 854.3,535.7 855.8,535.7 857.4,536.1 859.0,536.6 860.5,536.4 862.1,536.0 863.6,536.0 865.2,536.0 866.8,536.5 868.3,537.2 869.9,537.6 871.5,538.0 873.0,538.1 874.6,538.1 876.1,538.1 877.7,537.7 879.3,537.8 880.8,538.4 882.4,538.7 883.9,538.9 885.5,539.5 887.1,540.5 888.6,541.3 890.2,541.2 891.8,541.6 893.3,543.5 894.9,545.3 896.4,546.7 898.0,548.8 899.6,551.0 901.1,552.4 902.7,553.1 904.2,553.8 905.8,555.2 907.4,556.8 908.9,558.5 910.5,560.4 912.1,562.4 913.6,564.3 915.2,566.3 916.7,569.1 918.3,571.4 919.9,573.7 921.4,576.4 923.0,578.8 924.6,581.8 926.1,584.9 927.7,587.4 929.2,590.1 930.8,593.1 932.4,595.9 933.9,598.0 935.5,600.1 937.0,602.7 938.6,605.1 940.2,607.5 941.7,610.4 943.3,613.3 944.9,615.7 946.4,617.9 948.0,620.3 949.5,622.9 951.1,625.3 952.7,627.4 954.2,629.6 955.8,631.9 957.3,634.4 958.9,636.7 960.5,639.4 962.0,642.6 963.6,645.4 965.2,647.6 966.7,650.2 968.3,652.6 969.8,654.5 971.4,656.3 973.0,659.0 974.5,662.1 976.1,664.8 977.6,667.2 979.2,669.5 980.8,672.0 982.3,674.2 983.9,676.3 985.5,678.9 987.0,681.7 988.6,683.8 990.1,685.8 991.7,688.2 993.3,690.5 994.8,693.2 996.4,696.5 998.0,699.0" fill="none" stroke="#0000ff" stroke-width="3" stroke-linejoin="round"/></g></svg>

<div style="position:absolute;left:0;top:0;width:1024px;height:43px;background:#fff"></div>
<svg style="position:absolute;left:7px;top:8px" width="14" height="10"><path d="M0.5,0.5 L0.5,9.5 L13.5,9.5 L11,8.2 L8,5 L6.5,1.5 L3,0.8 Z" fill="#ff0000"/><path d="M0.5,0 L0.5,9.5 L13.5,9.5" fill="none" stroke="#808080" stroke-width="0.8"/></svg>
<div style="position:absolute;left:24.5px;top:6.5px;font-size:10.6px;color:#1a1a1a;white-space:nowrap;letter-spacing:-0.4px">Seismic Coloured Inversion: Penobscot Demo - Untitled</div>
<svg style="position:absolute;left:920px;top:0" width="100" height="24">
<path d="M6,12.5 H15" stroke="#222" stroke-width="1"/>
<rect x="43.5" y="8.5" width="7.5" height="7.5" fill="none" stroke="#222" stroke-width="1"/>
<path d="M80.5,8.2 L88.8,16.3 M88.8,8.2 L80.5,16.3" stroke="#222" stroke-width="1"/>
</svg>
<div style="position:absolute;left:7.5px;top:28px;font-size:11.2px;color:#111;white-space:nowrap">
<span style="position:absolute;left:0"><u>F</u>ile</span>
<span style="position:absolute;left:29.7px"><u>V</u>iew</span>
<span style="position:absolute;left:65px"><u>T</u>ools</span>
<span style="position:absolute;left:103.5px"><u>H</u>elp</span>
</div>
<div style="position:absolute;left:1px;top:43px;width:1022px;height:27px;background:#f0f0f0"></div>
<svg style="position:absolute;left:4px;top:46px" width="3" height="22" viewBox="0 0 3 22"><rect x="1" y="0.5" width="1.5" height="1.5" fill="#b0b0b0"/><rect x="1" y="3.5" width="1.5" height="1.5" fill="#b0b0b0"/><rect x="1" y="6.5" width="1.5" height="1.5" fill="#b0b0b0"/><rect x="1" y="9.5" width="1.5" height="1.5" fill="#b0b0b0"/><rect x="1" y="12.5" width="1.5" height="1.5" fill="#b0b0b0"/><rect x="1" y="15.5" width="1.5" height="1.5" fill="#b0b0b0"/><rect x="1" y="18.5" width="1.5" height="1.5" fill="#b0b0b0"/></svg><svg style="position:absolute;left:165px;top:46px" width="3" height="22" viewBox="0 0 3 22"><rect x="1" y="0.5" width="1.5" height="1.5" fill="#b0b0b0"/><rect x="1" y="3.5" width="1.5" height="1.5" fill="#b0b0b0"/><rect x="1" y="6.5" width="1.5" height="1.5" fill="#b0b0b0"/><rect x="1" y="9.5" width="1.5" height="1.5" fill="#b0b0b0"/><rect x="1" y="12.5" width="1.5" height="1.5" fill="#b0b0b0"/><rect x="1" y="15.5" width="1.5" height="1.5" fill="#b0b0b0"/><rect x="1" y="18.5" width="1.5" height="1.5" fill="#b0b0b0"/></svg><svg style="position:absolute;left:301px;top:46px" width="3" height="22" viewBox="0 0 3 22"><rect x="1" y="0.5" width="1.5" height="1.5" fill="#b0b0b0"/><rect x="1" y="3.5" width="1.5" height="1.5" fill="#b0b0b0"/><rect x="1" y="6.5" width="1.5" height="1.5" fill="#b0b0b0"/><rect x="1" y="9.5" width="1.5" height="1.5" fill="#b0b0b0"/><rect x="1" y="12.5" width="1.5" height="1.5" fill="#b0b0b0"/><rect x="1" y="15.5" width="1.5" height="1.5" fill="#b0b0b0"/><rect x="1" y="18.5" width="1.5" height="1.5" fill="#b0b0b0"/></svg><div style="position:absolute;left:161px;top:43px;width:1px;height:27px;background:#c4c4c4"></div><div style="position:absolute;left:162px;top:43px;width:1px;height:27px;background:#fafafa"></div><div style="position:absolute;left:297px;top:43px;width:1px;height:27px;background:#c4c4c4"></div><div style="position:absolute;left:298px;top:43px;width:1px;height:27px;background:#fafafa"></div><div style="position:absolute;left:434px;top:43px;width:1px;height:27px;background:#c4c4c4"></div><div style="position:absolute;left:435px;top:43px;width:1px;height:27px;background:#fafafa"></div><svg style="position:absolute;left:14px;top:48px" width="17" height="19" viewBox="0 0 17 19"><defs><linearGradient id="gd" x1="0" y1="0" x2="1" y2="1"><stop offset="0" stop-color="#e8e8e8"/><stop offset="1" stop-color="#ffffff"/></linearGradient></defs><path d="M0.5,0.5 L10,0.5 L15.5,6 L15.5,17.5 L0.5,17.5 Z" fill="url(#gd)" stroke="#6a6a6a" stroke-width="1"/><path d="M10,0.5 L10,6 L15.5,6" fill="#dcdcdc" stroke="#6a6a6a" stroke-width="1"/><path d="M15.8,6 L15.8,18" stroke="#a0a0a0" stroke-width="1"/></svg><svg style="position:absolute;left:36px;top:47px" width="21" height="19" viewBox="0 0 21 19"><defs><linearGradient id="fg" x1="0" y1="0" x2="0" y2="1"><stop offset="0" stop-color="#fde9a6"/><stop offset="0.55" stop-color="#f2c24a"/><stop offset="1" stop-color="#f8dc8c"/></linearGradient></defs><path d="M1.5,17.5 L1.5,4.5 Q1.5,3.5 2.5,3.5 L7.5,3.5 L9,5.5 L15.5,5.5 L15.5,10" fill="#d4ecfc" stroke="#a8b4c0" stroke-width="1"/><path d="M1.5,17.5 L4.5,8.5 L20,8.5 L17,17.5 Z" fill="url(#fg)" stroke="#d8bc70" stroke-width="1"/><path d="M10.5,3 Q14,-0.5 17.5,2.5" fill="none" stroke="#2a902a" stroke-width="1.8"/><path d="M16,0.8 L20,3.2 L16.5,5.5 Z" fill="#2a902a"/></svg><svg style="position:absolute;left:62px;top:47px" width="20" height="20" viewBox="0 0 20 20"><rect x="0.5" y="0.5" width="19" height="18.5" rx="1.5" fill="#2a2a2a"/><rect x="4" y="1" width="11" height="6" fill="#d8d8d8"/><rect x="6" y="2" width="2" height="4" fill="#333"/><rect x="3" y="10" width="14" height="8.5" fill="#e8e8e8"/><path d="M4,12.5 H16 M4,15 H16" stroke="#bbb" stroke-width="0.8"/></svg><svg style="position:absolute;left:87px;top:47px" width="20" height="20" viewBox="0 0 20 20"><rect x="0.5" y="0.5" width="19" height="18.5" rx="1" fill="#ee1c1c"/><rect x="4" y="1" width="11" height="6" fill="#d8d8d8"/><rect x="6" y="2" width="2" height="4" fill="#c00"/><rect x="3" y="9" width="14" height="9.5" fill="#e0e0e0"/><path d="M10,9.5 V18 M3.5,14 H16.5" stroke="#222" stroke-width="0.9"/><path d="M3.5,15 C5.5,17 7,17 8,14 C9,11 11,10 12.5,13 C13.5,15.5 15,16 16.5,14" fill="none" stroke="#e00" stroke-width="1.2"/></svg><svg style="position:absolute;left:113px;top:47px" width="19" height="19" viewBox="0 0 19 19"><rect x="4.5" y="0.5" width="10" height="7" fill="#fff" stroke="#888"/><path d="M1,8 Q1,6 3,6 L16,6 Q18,6 18,8 L18,14 L1,14 Z" fill="#eaeaea" stroke="#666" stroke-width="1"/><rect x="4" y="7" width="11" height="3" fill="#4a8ad8"/><rect x="3.5" y="12" width="12" height="6" fill="#fff" stroke="#555"/><rect x="1" y="14" width="17" height="2" fill="#444"/></svg><svg style="position:absolute;left:140px;top:47px" width="17" height="20" viewBox="0 0 17 20"><path d="M0.5,0.5 L15.5,0.5 L15.5,13 L10,18.5 L0.5,18.5 Z" fill="#fafafa" stroke="#888"/><path d="M10,18.5 L10,13 L15.5,13" fill="#ddd" stroke="#888"/><rect x="3" y="2" width="10" height="1.2" fill="#e88"/><rect x="3" y="4" width="10" height="1" fill="#aaa"/><circle cx="5.5" cy="8" r="3" fill="#e33"/><path d="M5.5,8 L5.5,5 A3,3 0 0 1 8.5,8 Z" fill="#fc0"/><path d="M5.5,8 L8.5,8 A3,3 0 0 1 5.5,11 Z" fill="#3b3"/><rect x="10" y="6" width="4" height="3" fill="#bbb"/><rect x="3" y="12" width="5" height="3" fill="#bbb"/></svg><svg style="position:absolute;left:174px;top:48px" width="19" height="18" viewBox="0 0 19 18"><defs><clipPath id="rb1"><rect x="0.5" y="0.5" width="17" height="17" rx="2.5"/></clipPath></defs><g clip-path="url(#rb1)"><rect width="18" height="18" fill="#f8a020"/><rect y="0" width="18" height="3" fill="#fbb43c"/><rect y="4" width="18" height="3" fill="#ffe080"/><rect y="8" width="18" height="3" fill="#fff0c0"/><rect y="11" width="18" height="3" fill="#c8c8d0"/><rect y="14" width="18" height="4" fill="#f08010"/><path d="M8,0 L10,3 L8,6 L10,9 L9,12 L10,14 L8,18" fill="none" stroke="#111" stroke-width="1.6"/></g><rect x="0.5" y="0.5" width="17" height="17" rx="2.5" fill="none" stroke="#8a8a8a"/></svg><svg style="position:absolute;left:199px;top:48px" width="19" height="18" viewBox="0 0 19 18"><rect x="0.5" y="0.5" width="17" height="17" rx="2.5" fill="#ececec" stroke="#8a8a8a" stroke-width="1.3"/><path d="M2,15 L5,5 L9,4 L11,12 L14,14 L16.5,15.5 Z" fill="#ff0000"/></svg><svg style="position:absolute;left:224px;top:48px" width="19" height="18" viewBox="0 0 19 18"><rect x="0.5" y="0.5" width="17" height="17" rx="2.5" fill="#e4e4e4" stroke="#7a7a7a" stroke-width="1.5"/><path d="M5,3 V15 M9,3 V15 M13,3 V15" stroke="#222" stroke-width="1.5"/><circle cx="5" cy="7" r="1.5" fill="#e33"/><circle cx="9" cy="12" r="1.5" fill="#36f"/><circle cx="12" cy="4" r="1.5" fill="#ee3"/><circle cx="13" cy="10" r="1.5" fill="#3c3"/></svg><svg style="position:absolute;left:249px;top:47px" width="20" height="20" viewBox="0 0 20 20"><defs><linearGradient id="gg" x1="0" y1="0" x2="0" y2="1"><stop offset="0" stop-color="#5cc25c"/><stop offset="1" stop-color="#1f8f2a"/></linearGradient></defs><rect x="0.5" y="0.5" width="18" height="18" rx="3" fill="url(#gg)" stroke="#2a7a2a"/><rect x="4" y="5" width="11" height="10" fill="none" stroke="#c8f0c8" stroke-width="1"/><path d="M5,9 L8.5,13 L15.5,4" fill="none" stroke="#fff" stroke-width="2.2"/></svg><svg style="position:absolute;left:275px;top:48px" width="19" height="18" viewBox="0 0 19 18"><defs><clipPath id="rb2"><rect x="0.5" y="0.5" width="17" height="17" rx="2.5"/></clipPath></defs><g clip-path="url(#rb2)"><rect width="18" height="18" fill="#f8e8c8"/><rect y="3" width="18" height="2" fill="#f0c890"/><rect y="8" width="18" height="2" fill="#f0c890"/><rect y="12" width="18" height="2" fill="#e8b070"/><path d="M9,0 L11,3 L7,6 L14,9 L4,11 L13,13 L9,18" fill="none" stroke="#111" stroke-width="1.4"/></g><rect x="0.5" y="0.5" width="17" height="17" rx="2.5" fill="none" stroke="#8a8a8a"/></svg><svg style="position:absolute;left:310px;top:48px" width="18" height="18" viewBox="0 0 18 18"><rect x="0.5" y="0.5" width="16" height="16" rx="2.5" fill="#d8d8d8" stroke="#8a8a8a" stroke-width="1.2"/><rect x="2.5" y="2.5" width="5" height="5" fill="#fff" stroke="#1a1a1a" stroke-width="1.3"/><rect x="9.5" y="2.5" width="5" height="5" fill="#fff" stroke="#1a1a1a" stroke-width="1.3"/><rect x="2.5" y="9.5" width="5" height="5" fill="#fff" stroke="#1a1a1a" stroke-width="1.3"/><rect x="9.5" y="9.5" width="5" height="5" fill="#fff" stroke="#1a1a1a" stroke-width="1.3"/></svg><svg style="position:absolute;left:336px;top:48px" width="16" height="18" viewBox="0 0 16 18"><path d="M2.5,9 A6,6 0 0 1 12,4" fill="none" stroke="#4ec24e" stroke-width="3"/><path d="M10,1 L15,4 L10,7.5 Z" fill="#4ec24e"/><path d="M13.5,9 A6,6 0 0 1 4,14" fill="none" stroke="#4ec24e" stroke-width="3"/><path d="M6,11 L1,14 L6,17 Z" fill="#4ec24e"/></svg><svg style="position:absolute;left:359px;top:47px" width="20" height="20" viewBox="0 0 20 20"><path d="M2,17.5 L7,12.5" stroke="#222" stroke-width="3.5" stroke-linecap="round"/><circle cx="12" cy="7.5" r="6" fill="#eef8ee" stroke="#3a7a3a" stroke-width="2.2"/><path d="M9,7.5 H15 M12,4.5 V10.5" stroke="#3a8a3a" stroke-width="1.8"/></svg><svg style="position:absolute;left:384px;top:47px" width="20" height="20" viewBox="0 0 20 20"><path d="M2,17.5 L7,12.5" stroke="#222" stroke-width="3.5" stroke-linecap="round"/><circle cx="12" cy="7.5" r="6" fill="#eef8ee" stroke="#3a7a3a" stroke-width="2.2"/><path d="M9,7.5 H15" stroke="#3a8a3a" stroke-width="1.8"/></svg><div style="position:absolute;left:407px;top:45px;width:25px;height:23px;background:#cce4f7;border:1px solid #a8d0f0;box-sizing:border-box"></div><svg style="position:absolute;left:411px;top:48px" width="18" height="18" viewBox="0 0 18 18"><defs><clipPath id="rb3"><rect x="0.5" y="0.5" width="16" height="17" rx="2.5"/></clipPath></defs><g clip-path="url(#rb3)"><rect width="18" height="18" fill="#f5d070"/><rect y="2" width="18" height="2" fill="#fff4d0"/><rect y="5" width="18" height="2" fill="#f7c040"/><rect y="8" width="18" height="2" fill="#ff9020"/><rect y="11" width="18" height="2" fill="#fbe0a0"/><rect y="14" width="18" height="2" fill="#e8a030"/></g><rect x="0.5" y="0.5" width="16" height="17" rx="2.5" fill="none" stroke="#888"/></svg><svg style="position:absolute;left:440px;top:47px" width="19" height="20" viewBox="0 0 19 20"><defs><radialGradient id="hg" cx="0.4" cy="0.35" r="0.7"><stop offset="0" stop-color="#5a9af0"/><stop offset="1" stop-color="#0a3cb0"/></radialGradient></defs><circle cx="9" cy="10" r="8.5" fill="url(#hg)"/><text x="9" y="15" text-anchor="middle" font-family="Liberation Sans" font-weight="bold" font-size="13" fill="#fff">?</text></svg>
<div style="position:absolute;left:1px;top:70px;width:1022px;height:2px;background:#a0a4ac"></div>
<div style="position:absolute;left:1px;top:72px;width:1px;height:662px;background:#b4b8c8"></div>
<div style="position:absolute;left:1px;top:733px;width:1022px;height:1px;background:#a0a4b4"></div>
<div style="position:absolute;left:1px;top:734px;width:1022px;height:24px;background:#f0f0f0"></div>
<div style="position:absolute;left:1009px;top:72px;width:13px;height:662px;background:#f0f0f0"></div>
<div style="position:absolute;left:1009px;top:86px;width:12px;height:314px;background:#cdcdcd"></div>
<svg style="position:absolute;left:1010px;top:75px" width="11" height="8"><path d="M2,6 L5.5,2.5 L9,6" fill="none" stroke="#505050" stroke-width="1.8"/></svg>
<svg style="position:absolute;left:1010px;top:722px" width="11" height="8"><path d="M2,2 L5.5,5.5 L9,2" fill="none" stroke="#505050" stroke-width="1.8"/></svg>
<div style="position:absolute;left:1022px;top:70px;width:1px;height:664px;background:#a8acbc"></div>
<svg style="position:absolute;left:929px;top:736px" width="79" height="21" viewBox="0 0 79 21">
<rect width="79" height="21" fill="#000"/>
<path d="M5,10 L10.5,2.5 L16,10 L10.5,17.5 Z M11.5,10 L17,2.5 L22.5,10 L17,17.5 Z" fill="none" stroke="#a8a8a8" stroke-width="0.9"/>
<circle cx="14" cy="10" r="1.7" fill="#ff8c1a"/>
<g font-family="Liberation Sans" font-size="15" fill="#b4b4b4"><text x="23.6" y="15.3">a</text><text x="33.2" y="15.3">r</text><text x="42.8" y="15.3">k</text></g>
<g font-family="Liberation Sans" font-weight="bold" font-size="15" fill="#ff7f10"><text x="51.6" y="15.3">c</text><text x="61.3" y="15.3">l</text><text x="67.6" y="15.3">s</text></g>
</svg>
<svg style="position:absolute;left:1011px;top:745px" width="10" height="10"><g fill="#c0c0c0"><rect x="7" y="1" width="2" height="2"/><rect x="4" y="4" width="2" height="2"/><rect x="7" y="4" width="2" height="2"/><rect x="1" y="7" width="2" height="2"/><rect x="4" y="7" width="2" height="2"/><rect x="7" y="7" width="2" height="2"/></g></svg>
<div style="position:absolute;left:0;top:0;width:1024px;height:759px;box-sizing:border-box;border:1px solid #a6c84c;pointer-events:none"></div>

</div></body></html>
